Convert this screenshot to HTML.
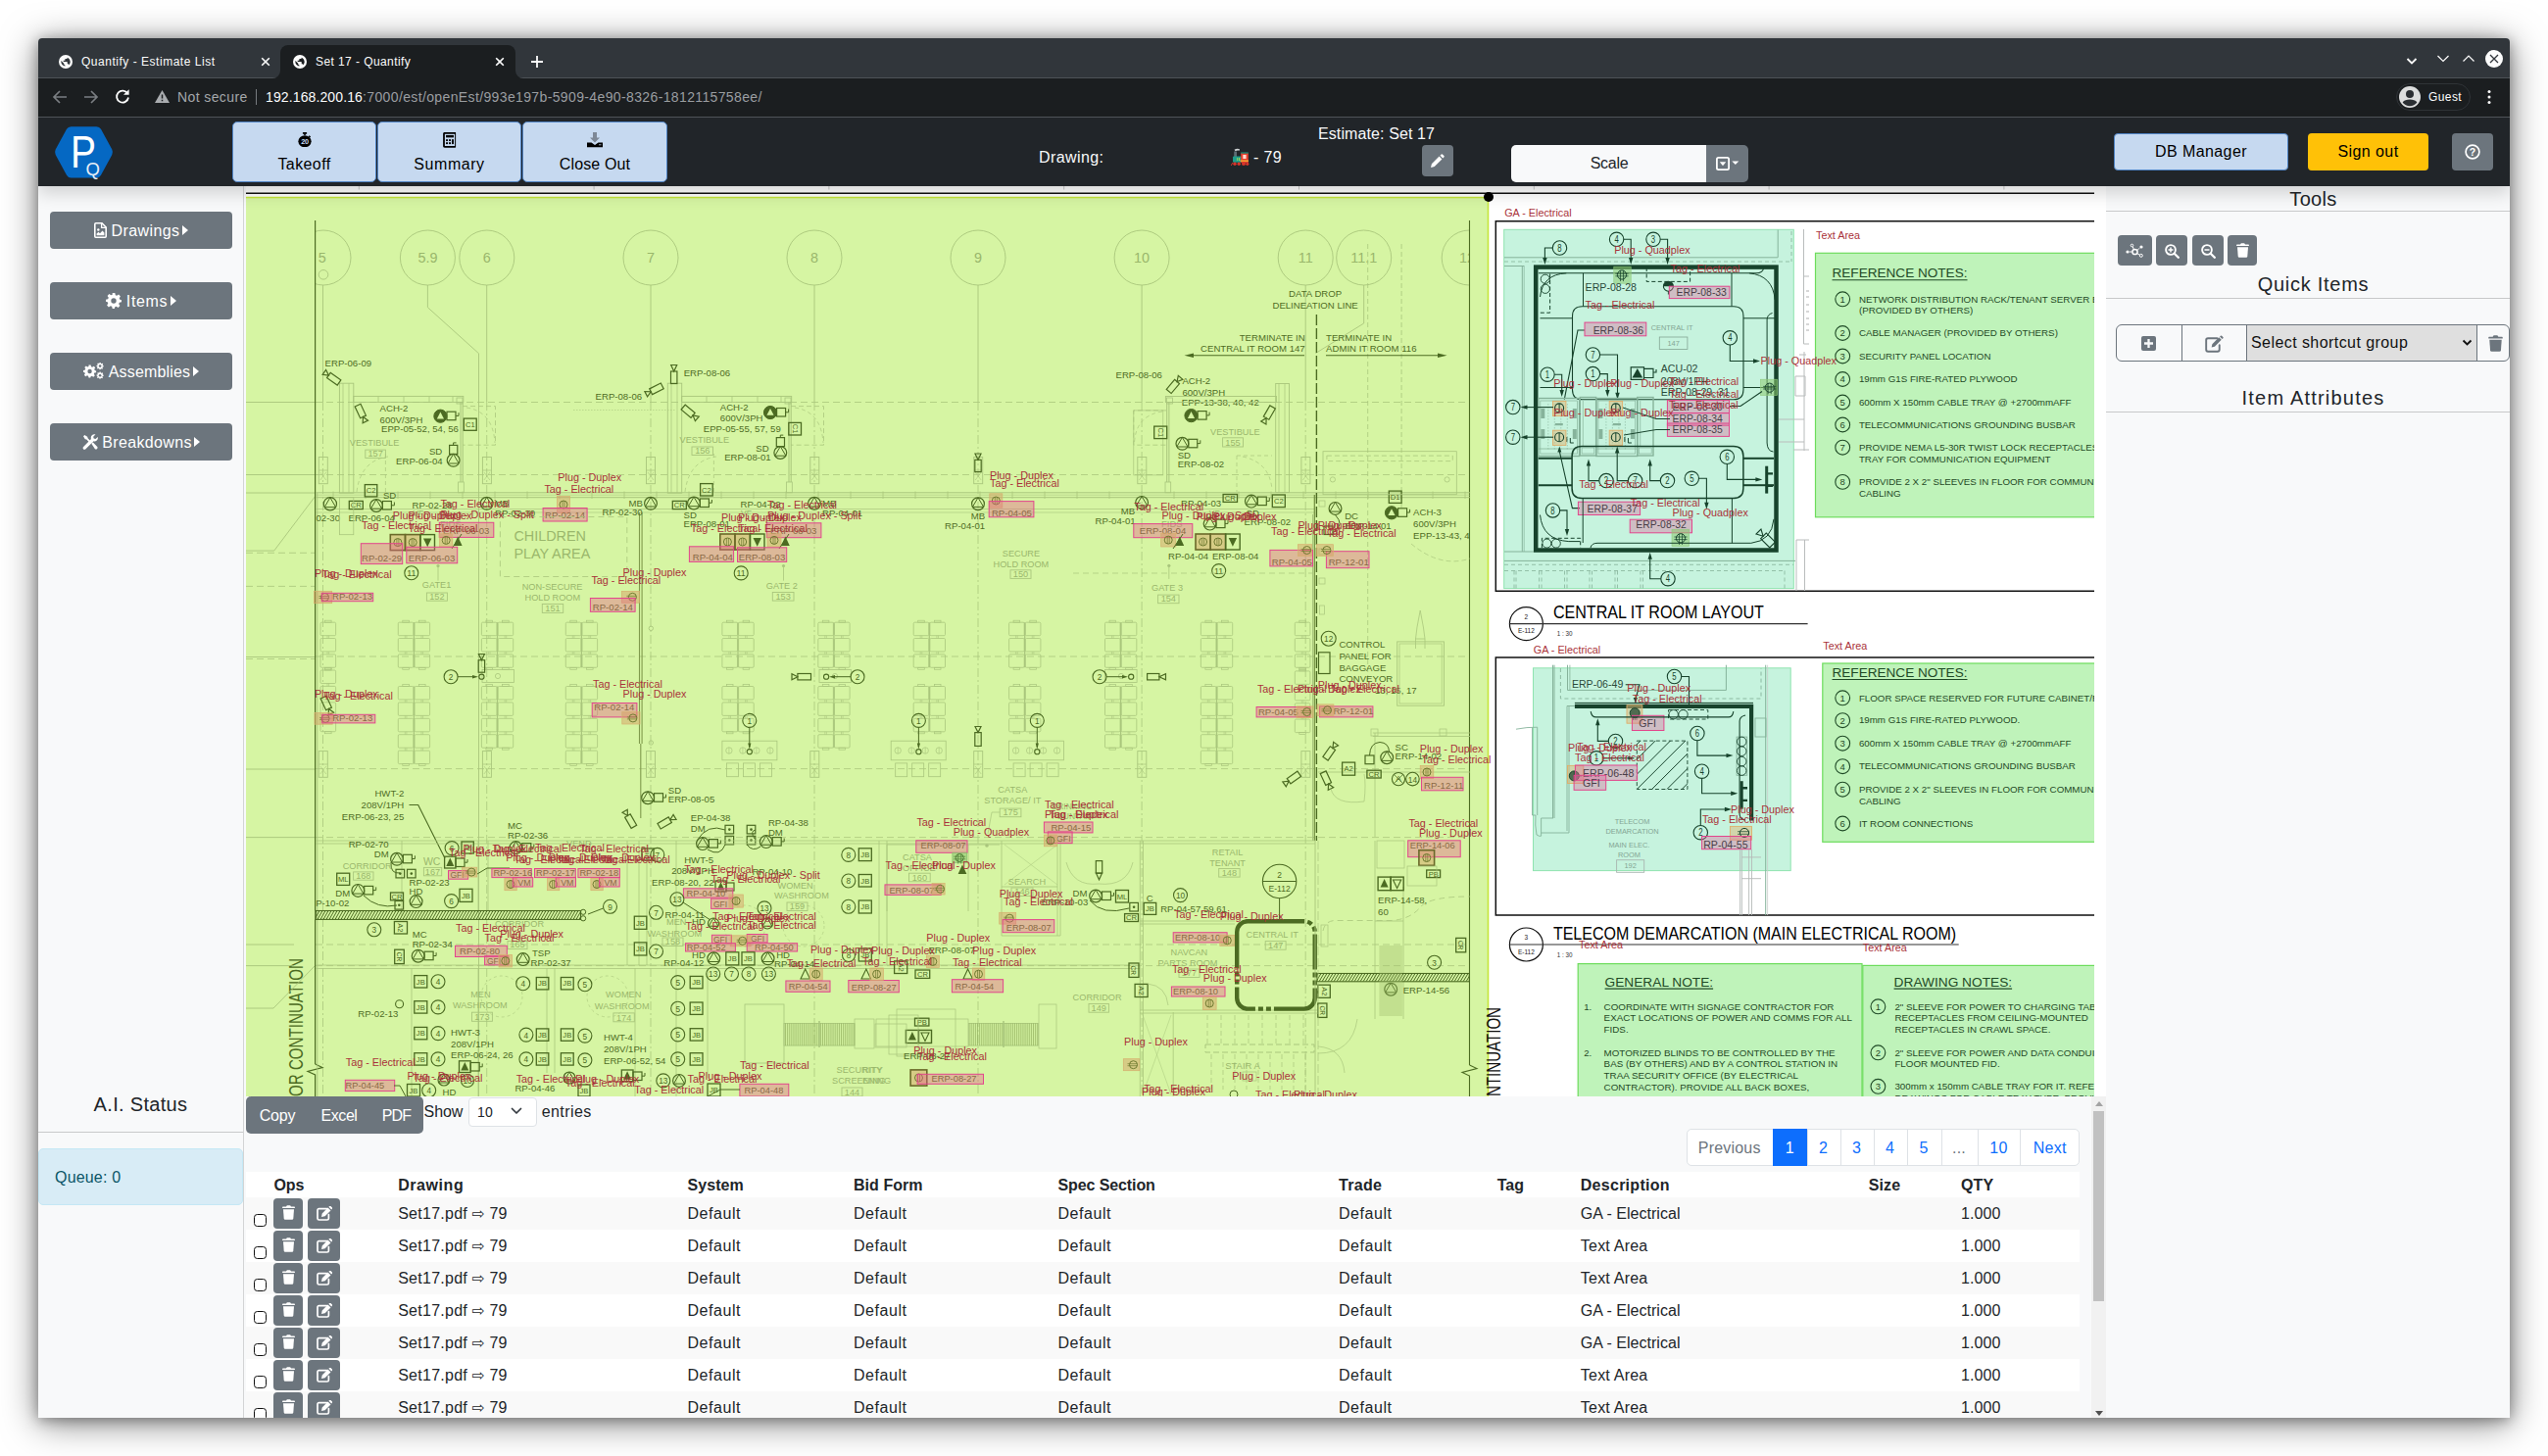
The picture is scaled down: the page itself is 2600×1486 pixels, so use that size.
<!DOCTYPE html>
<html lang="en">
<head>
<meta charset="utf-8">
<title>Set 17 - Quantify</title>
<style>
*{box-sizing:border-box}
html,body{margin:0;padding:0}
body{width:2600px;height:1486px;background:#fff;overflow:hidden;position:relative;font-family:"Liberation Sans",sans-serif;color:#212529}
.abs{position:absolute}
#win{position:absolute;left:39px;top:39px;width:2522px;height:1408px;background:#f8f9fa;border-radius:4px 4px 0 0;box-shadow:0 5px 36px rgba(0,0,0,.5),0 2px 14px rgba(0,0,0,.33);overflow:hidden}
#tabbar{position:absolute;left:0;top:0;width:2522px;height:41px;background:#31363b;border-bottom:1px solid #4d5257}
#addr{position:absolute;left:0;top:41px;width:2522px;height:40px;background:#1b1e20;border-bottom:1px solid #50555a}
#apphead{position:absolute;left:0;top:81px;width:2522px;height:70px;background:#212529;box-shadow:0 8px 16px rgba(0,0,0,.15);z-index:10}
.t{position:absolute;white-space:nowrap;line-height:1}
.tabtxt{font-size:12px;color:#fcfcfc;letter-spacing:.52px}
.ui{letter-spacing:.5px}
.navbtn{position:absolute;top:5px;height:62px;width:147px;background:#c6d9f0;border:1px solid #4f83c4;border-radius:5px;color:#000}
.navbtn .lbl{position:absolute;left:0;width:100%;top:33px;text-align:center;font-size:16px;line-height:20px;letter-spacing:.55px}
.navbtn svg{position:absolute;left:50%;top:11px;transform:translateX(-50%)}
.sbtn{position:absolute;left:12px;width:186px;height:38px;background:#6c757d;border-radius:4px;color:#fff;font-size:16px;line-height:40px;text-align:center}
.sbtn svg{vertical-align:-2px}
.gbtn{position:absolute;background:#6c757d;border-radius:4px}
.h4{position:absolute;font-size:20px;line-height:24px;text-align:center;color:#212529}
.hr{position:absolute;height:1px;background:#c8c9ca}
table{border-collapse:collapse}
</style>
</head>
<body>
<div id="win">
<div id="tabbar">
  <!-- active tab -->
  <div class="abs" style="left:247px;top:7px;width:240px;height:35px;background:#1b1e20;border-radius:8px 8px 0 0"></div>
  <svg class="abs" style="left:239px;top:33px" width="8" height="8"><path d="M8 0V8H0A8 8 0 0 0 8 0Z" fill="#1b1e20"/></svg>
  <svg class="abs" style="left:487px;top:33px" width="8" height="8"><path d="M0 0V8H8A8 8 0 0 1 0 0Z" fill="#1b1e20"/></svg>
  <!-- globes -->
  <svg class="abs" style="left:21px;top:17px" width="14" height="14" viewBox="0 0 24 24"><circle cx="12" cy="12" r="12" fill="#fcfcfc"/><path d="M11 19.9c-3.9-.5-7-3.9-7-7.9 0-.6.1-1.2.2-1.8L9 15v1c0 1.1.9 2 2 2v1.9zM17.9 17.4c-.3-.8-1-1.4-1.9-1.4h-1v-3c0-.6-.4-1-1-1H8v-2h2c.6 0 1-.4 1-1V7h2c1.1 0 2-.9 2-2v-.4c2.9 1.2 5 4.1 5 7.4 0 2.1-.8 4-2.1 5.400z" fill="#31363b"/></svg>
  <svg class="abs" style="left:260px;top:17px" width="14" height="14" viewBox="0 0 24 24"><circle cx="12" cy="12" r="12" fill="#fcfcfc"/><path d="M11 19.9c-3.9-.5-7-3.9-7-7.9 0-.6.1-1.2.2-1.8L9 15v1c0 1.1.9 2 2 2v1.9zM17.9 17.4c-.3-.8-1-1.4-1.9-1.4h-1v-3c0-.6-.4-1-1-1H8v-2h2c.6 0 1-.4 1-1V7h2c1.1 0 2-.9 2-2v-.4c2.9 1.2 5 4.1 5 7.4 0 2.1-.8 4-2.1 5.400z" fill="#1b1e20"/></svg>
  <div class="t tabtxt" style="left:44px;top:18.200px">Quantify - Estimate List</div>
  <div class="t tabtxt" style="left:283px;top:18.200px;letter-spacing:.42px">Set 17 - Quantify</div>
  <svg class="abs" style="left:227px;top:19px" width="10" height="10" viewBox="0 0 10 10"><path d="M1.2 1.2L8.8 8.8M8.800 1.2L1.2 8.8" stroke="#fcfcfc" stroke-width="1.6" fill="none"/></svg>
  <svg class="abs" style="left:466px;top:19px" width="10" height="10" viewBox="0 0 10 10"><path d="M1.2 1.2L8.8 8.8M8.800 1.2L1.2 8.8" stroke="#fcfcfc" stroke-width="1.6" fill="none"/></svg>
  <svg class="abs" style="left:502px;top:17px" width="14" height="14" viewBox="0 0 14 14"><path d="M7 1V13M1 7H13" stroke="#fcfcfc" stroke-width="1.8" fill="none"/></svg>
  <!-- window controls -->
  <svg class="abs" style="left:2414px;top:17px" width="16" height="12" viewBox="0 0 16 12"><path d="M3.500 4L8 8.500L12.500 4" stroke="#fcfcfc" stroke-width="1.8" fill="none"/></svg>
  <svg class="abs" style="left:2447px;top:15px" width="14" height="12" viewBox="0 0 14 12"><path d="M1.500 3L7 8.500L12.500 3" stroke="#fcfcfc" stroke-width="1.2" fill="none"/></svg>
  <svg class="abs" style="left:2473px;top:15px" width="14" height="12" viewBox="0 0 14 12"><path d="M1.500 8.500L7 3L12.500 8.500" stroke="#fcfcfc" stroke-width="1.2" fill="none"/></svg>
  <svg class="abs" style="left:2497px;top:12px" width="18" height="18" viewBox="0 0 18 18"><circle cx="9" cy="9" r="9" fill="#fcfcfc"/><path d="M5 5L13 13M13 5L5 13" stroke="#31363b" stroke-width="1.300" fill="none"/></svg>
</div>
<div id="addr">
  <svg class="abs" style="left:14px;top:11px" width="16" height="16" viewBox="0 0 16 16"><path d="M15 8H2M8 2L2 8L8 14" stroke="#7a7e82" stroke-width="1.700" fill="none"/></svg>
  <svg class="abs" style="left:46px;top:11px" width="16" height="16" viewBox="0 0 16 16"><path d="M1 8H14M8 2L14 8L8 14" stroke="#7a7e82" stroke-width="1.700" fill="none"/></svg>
  <svg class="abs" style="left:78px;top:10px" width="16" height="17" viewBox="0 0 16 17"><path d="M13.200 5.500A6 6 0 1 0 14 9.500" stroke="#fcfcfc" stroke-width="1.800" fill="none"/><path d="M14.600 1.200V6.800H9z" fill="#fcfcfc"/></svg>
  <svg class="abs" style="left:119px;top:12px" width="15" height="13" viewBox="0 0 15 13"><path d="M7.500 0L15 13H0Z" fill="#a9acaf"/><path d="M7.500 4.500V8.500M7.500 9.800V11.300" stroke="#1b1e20" stroke-width="1.500"/></svg>
  <div class="t" style="left:142px;top:11.700px;font-size:14px;color:#a4a7aa;letter-spacing:.4px">Not secure</div>
  <div class="abs" style="left:222px;top:11px;width:1px;height:16px;background:#777b7f"></div>
  <div class="t" style="left:232px;top:11.700px;font-size:14px;color:#fcfcfc;letter-spacing:.12px">192.168.200.16<span style="color:#9a9da0;letter-spacing:.37px">:7000/est/openEst/993e197b-5909-4e90-8326-1812115758ee/</span></div>
  <!-- guest pill -->
  <div class="abs" style="left:2406px;top:5px;width:76px;height:28px;border-radius:14px;border:1px solid #2f3337;background:#1b1e20"></div>
  <svg class="abs" style="left:2409px;top:8px" width="22" height="22" viewBox="0 0 22 22"><circle cx="11" cy="11" r="11" fill="#dcdddd"/><circle cx="11" cy="8" r="4" fill="#2a2e32"/><path d="M3.600 16.500C5 14.200 8 13.500 11 13.500S17 14.200 18.400 16.500A9.200 9.200 0 0 1 3.600 16.500Z" fill="#2a2e32"/></svg>
  <div class="t" style="left:2439px;top:13px;font-size:12px;color:#fcfcfc;letter-spacing:.4px">Guest</div>
  <svg class="abs" style="left:2498px;top:11px" width="6" height="16" viewBox="0 0 6 16"><circle cx="3" cy="2.500" r="1.500" fill="#fcfcfc"/><circle cx="3" cy="8" r="1.500" fill="#fcfcfc"/><circle cx="3" cy="13.500" r="1.500" fill="#fcfcfc"/></svg>
</div>
<div id="apphead">
  <!-- logo -->
  <svg class="abs" style="left:16px;top:8px" width="61" height="55" viewBox="0 0 61 55"><path d="M17.500 1.200H43.500Q46.500 1.200 48 3.800L59.300 24.500Q60.600 27.300 59.300 30L48 50.800Q46.500 53.600 43.500 53.600H17.500Q14.500 53.600 13 50.800L1.700 30Q.4 27.300 1.700 24.500L13 3.800Q14.500 1.200 17.500 1.200Z" fill="#0568c3"/><text x="17" y="42.500" font-family="Liberation Sans,sans-serif" font-size="46" fill="#fff" textLength="26" lengthAdjust="spacingAndGlyphs">P</text><text x="32.500" y="50.500" font-family="Liberation Sans,sans-serif" font-size="18.500" fill="#e8eef6">Q</text></svg>
  <!-- nav buttons -->
  <div class="navbtn" style="left:198px;top:4px">
    <svg width="15.600" height="15.800" viewBox="0 0 16 18" preserveAspectRatio="none" style="top:9.500px"><rect x="5.800" y="0" width="4.400" height="1.900" rx=".6" fill="#000"/><rect x="7.200" y="1.500" width="1.600" height="2" fill="#000"/><path d="M12.200 4.200L13.800 5.800" stroke="#000" stroke-width="1.500"/><circle cx="8" cy="10.600" r="6.800" fill="#000"/><text x="8" y="13.300" text-anchor="middle" font-family="Liberation Sans,sans-serif" font-weight="bold" font-size="7.500" fill="#c6d9f0" letter-spacing="-.4">20</text></svg>
    <div class="lbl" style="letter-spacing:.4px">Takeoff</div></div>
  <div class="navbtn" style="left:346px;top:4px">
    <svg width="13.800" height="15.700" viewBox="0 0 14 17" preserveAspectRatio="none" style="top:10.200px"><rect x=".8" y=".8" width="12.400" height="15.400" rx="1.400" fill="none" stroke="#000" stroke-width="2"/><rect x="3" y="3.200" width="8" height="2.600" fill="#000"/><g fill="#000"><rect x="3" y="7.800" width="2" height="2"/><rect x="6" y="7.800" width="2" height="2"/><rect x="9" y="7.800" width="2" height="5.300"/><rect x="3" y="11.100" width="2" height="2"/><rect x="6" y="11.100" width="2" height="2"/></g></svg>
    <div class="lbl" style="letter-spacing:.55px">Summary</div></div>
  <div class="navbtn" style="left:494px;top:4px;width:148px">
    <svg width="17" height="15.700" viewBox="0 0 17 17" preserveAspectRatio="none" style="top:10.200px"><path d="M6.500 0H10.500V6H13.500L8.500 11.500L3.500 6H6.500Z" fill="#7d8896"/><path d="M.5 11.500H5L8.500 14L12 11.500H16.500V16.500H.5Z" fill="#000"/><rect x="12.500" y="13.500" width="2.500" height=".8" fill="#c6d9f0"/></svg>
    <div class="lbl" style="letter-spacing:.13px">Close Out</div></div>
  <!-- center -->
  <div class="t ui" style="left:1021px;top:33px;font-size:16px;color:#f8f9fa;letter-spacing:.4px">Drawing:</div>
  <svg class="abs" style="left:1217px;top:31px" width="19" height="19" viewBox="0 0 19 19"><path d="M3.500 1.800Q6 .3 9 1.200L8.600 2.800Q6.500 2.300 4.600 3.200Z" fill="#cfd2d4"/><rect x="3.200" y="3.500" width="2.800" height="6" fill="#5d6b73"/><rect x="2" y="8.500" width="9.500" height="6.200" rx="1" fill="#1f9c8a"/><rect x="6.200" y="10" width="1" height="3" fill="#9bd15a"/><rect x="8" y="10" width="1" height="3" fill="#9bd15a"/><rect x="10.200" y="5" width="7.600" height="10" fill="#e8412f"/><rect x="10.200" y="4.300" width="7.600" height="1.400" fill="#17806f"/><rect x="12.300" y="7" width="3.300" height="4" fill="#ffd9d0"/><rect x="9.500" y="12.500" width="8.500" height="1.300" fill="#f2b632"/><circle cx="4" cy="16.300" r="1.700" fill="#d8352a"/><circle cx="8.200" cy="16.300" r="1.700" fill="#d8352a"/><circle cx="13" cy="16" r="2.100" fill="#d8352a"/><circle cx="16.800" cy="16.300" r="1.600" fill="#d8352a"/><path d="M0 18L2 15" stroke="#d8352a" stroke-width="1"/></svg>
  <div class="t ui" style="left:1240px;top:33px;font-size:16px;color:#f8f9fa;letter-spacing:.4px">- 79</div>
  <div class="t ui" style="left:1306px;top:9px;font-size:16px;color:#f8f9fa;letter-spacing:.1px">Estimate: Set 17</div>
  <div class="gbtn" style="left:1412px;top:28px;width:32px;height:32px;border-radius:4px">
    <svg class="abs" style="left:9px;top:9px" width="14" height="14" viewBox="0 0 14 14"><path d="M0 14L.9 10.300L8.600 2.600L11.400 5.400L3.700 13.100ZM9.500 1.700L10.700.5Q11.300 0 11.900.5L13.500 2.100Q14 2.700 13.500 3.300L12.300 4.500Z" fill="#fff"/></svg>
  </div>
  <div class="abs" style="left:1503px;top:28px;width:200px;height:38px;background:#f8f9fa;border-radius:5px 0 0 5px"></div>
  <div class="t ui" style="left:1503px;width:200px;top:39px;font-size:16px;color:#212529;text-align:center;letter-spacing:-.3px">Scale</div>
  <div class="abs" style="left:1702px;top:28px;width:43px;height:38px;background:#6c757d;border-radius:0 5px 5px 0">
    <svg class="abs" style="left:10px;top:12px" width="24" height="15" viewBox="0 0 24 15"><rect x=".9" y=".9" width="12.200" height="12.200" rx="1.600" fill="none" stroke="#fff" stroke-width="1.800"/><path d="M3.800 5.200H10.200L7 9.200Z" fill="#fff"/><path d="M16.300 4.500H23.300L19.800 8Z" fill="#fff"/></svg>
  </div>
  <!-- right buttons -->
  <div class="abs" style="left:2118px;top:16px;width:178px;height:38px;background:#c6d9f0;border:1px solid #4f83c4;border-radius:4px"></div>
  <div class="t ui" style="left:2118px;width:178px;top:27px;font-size:16px;color:#000;text-align:center;letter-spacing:.42px">DB Manager</div>
  <div class="abs" style="left:2316px;top:16px;width:123px;height:38px;background:#ffc107;border-radius:4px"></div>
  <div class="t ui" style="left:2316px;width:123px;top:27px;font-size:16px;color:#000;text-align:center;letter-spacing:.42px">Sign out</div>
  <div class="gbtn" style="left:2463px;top:16px;width:42px;height:38px">
    <svg class="abs" style="left:13px;top:11px" width="16" height="16" viewBox="0 0 16 16"><circle cx="8" cy="8" r="6.900" fill="none" stroke="#fff" stroke-width="1.700"/><text x="8" y="11.800" text-anchor="middle" font-family="Liberation Sans,sans-serif" font-weight="bold" font-size="10.500" fill="#fff">?</text></svg>
  </div>
</div>
<div id="main" class="abs" style="left:0;top:151px;width:2522px;height:1257px;background:#f8f9fa">
<!-- sidebar -->
<div class="abs" style="left:0;top:0;width:210px;height:1257px;border-right:1px solid #d3d4d5;background:#f8f9fa">
  <div class="sbtn" style="top:26px"><svg width="13" height="16" viewBox="0 0 13 16"><path d="M1.800.8H8L12.200 5V14.200Q12.200 15.200 11.200 15.200H1.800Q.8 15.200 .8 14.200V1.800Q.8 .8 1.800 .8Z" fill="none" stroke="#fff" stroke-width="1.600"/><path d="M7.600 .8V5.400H12.200" fill="none" stroke="#fff" stroke-width="1.300"/><circle cx="4.300" cy="7.500" r="1.200" fill="#fff"/><path d="M2.600 13.200V11.500L4.500 9.800L6 11.200L8.500 8.600L10.400 10.500V13.200Z" fill="#fff"/></svg> <span style="letter-spacing:.41px">Drawings</span> <svg width="6" height="10" viewBox="0 0 6 10" style="vertical-align:1px;margin-left:-2px"><path d="M0 0L6 5L0 10Z" fill="#fff"/></svg></div>
  <div class="sbtn" style="top:98px"><svg width="16" height="16" viewBox="0 0 16 16"><path d="M6.700 0H9.300L9.800 2.200L11.200 2.800L13.100 1.600L14.900 3.400L13.700 5.300L14.300 6.700L16 7.200V9.300L13.800 9.800L13.200 11.200L14.400 13.100L12.600 14.900L10.700 13.700L9.300 14.300L8.800 16H6.700L6.200 13.800L4.800 13.200L2.900 14.400L1.100 12.600L2.300 10.700L1.700 9.300L0 8.800V6.700L2.200 6.200L2.800 4.800L1.600 2.900L3.400 1.100L5.300 2.300L6.700 1.700Z" fill="#fff"/><circle cx="8" cy="8" r="2.700" fill="#6c757d"/></svg> <span style="letter-spacing:.63px">Items</span> <svg width="6" height="10" viewBox="0 0 6 10" style="vertical-align:1px;margin-left:-2px"><path d="M0 0L6 5L0 10Z" fill="#fff"/></svg></div>
  <div class="sbtn" style="top:170px"><svg width="21" height="17" viewBox="0 0 21 17"><g transform="translate(0,2.500) scale(.82)"><path d="M6.700 0H9.300L9.800 2.200L11.200 2.800L13.100 1.600L14.900 3.400L13.700 5.300L14.300 6.700L16 7.200V9.300L13.800 9.800L13.200 11.200L14.400 13.100L12.600 14.900L10.700 13.700L9.300 14.300L8.800 16H6.700L6.200 13.800L4.800 13.200L2.900 14.400L1.100 12.600L2.300 10.700L1.700 9.300L0 8.800V6.700L2.200 6.200L2.800 4.800L1.600 2.900L3.400 1.100L5.300 2.300L6.700 1.700Z" fill="#fff"/><circle cx="8" cy="8" r="2.700" fill="#6c757d"/></g><g transform="translate(13.500,0) scale(.45)"><path d="M6.700 0H9.300L9.800 2.200L11.200 2.800L13.100 1.600L14.900 3.400L13.700 5.300L14.300 6.700L16 7.200V9.300L13.800 9.800L13.200 11.200L14.400 13.100L12.600 14.900L10.700 13.700L9.300 14.300L8.800 16H6.700L6.200 13.800L4.800 13.200L2.900 14.400L1.100 12.600L2.300 10.700L1.700 9.300L0 8.800V6.700L2.200 6.200L2.800 4.800L1.600 2.900L3.400 1.100L5.300 2.300L6.700 1.700Z" fill="#fff"/><circle cx="8" cy="8" r="2.900" fill="#6c757d"/></g><g transform="translate(13.500,9.600) scale(.45)"><path d="M6.700 0H9.300L9.800 2.200L11.200 2.800L13.100 1.600L14.900 3.400L13.700 5.300L14.300 6.700L16 7.200V9.300L13.800 9.800L13.200 11.200L14.400 13.100L12.600 14.900L10.700 13.700L9.300 14.300L8.800 16H6.700L6.200 13.800L4.800 13.200L2.900 14.400L1.100 12.600L2.300 10.700L1.700 9.300L0 8.800V6.700L2.200 6.200L2.800 4.800L1.600 2.900L3.400 1.100L5.300 2.300L6.700 1.700Z" fill="#fff"/><circle cx="8" cy="8" r="2.900" fill="#6c757d"/></g></svg> <span style="letter-spacing:.18px">Assemblies</span> <svg width="6" height="10" viewBox="0 0 6 10" style="vertical-align:1px;margin-left:-2px"><path d="M0 0L6 5L0 10Z" fill="#fff"/></svg></div>
  <div class="sbtn" style="top:242px"><svg width="16" height="16" viewBox="0 0 16 16"><path d="M1 2.300L2.300 1L5.200 2.800L5.600 4.300L9 7.700L7.700 9L4.300 5.600L2.800 5.200Z" fill="#fff"/><path d="M9.300 9.700L10.700 8.300L15.300 12.900Q16 14 15.100 15.100Q14 16 12.900 15.300Z" fill="#fff"/><path d="M15.800 2.900Q16.300 5.500 14.500 6.800Q13 7.700 11.500 7.200L3.200 15.400Q2.200 16.200 1.100 15.400Q.2 14.400 .9 13.300L9 5Q8.300 3 9.600 1.400Q11.200 -.3 13.500 .3L11.200 2.700L11.600 4.600L13.500 5.100Z" fill="#fff"/></svg> <span style="letter-spacing:.35px">Breakdowns</span> <svg width="6" height="10" viewBox="0 0 6 10" style="vertical-align:1px;margin-left:-2px"><path d="M0 0L6 5L0 10Z" fill="#fff"/></svg></div>
  <div class="h4" style="left:0;width:209px;top:925px;letter-spacing:.32px">A.I. Status</div>
  <div class="hr" style="left:0;width:209px;top:965px"></div>
  <div class="abs" style="left:0;top:982px;width:209px;height:58px;background:#d8ecf6;border:1px solid #c4e8f5;border-radius:5px"></div>
  <div class="t ui" style="left:17px;top:1004px;font-size:16px;color:#0a5566;letter-spacing:.18px">Queue: 0</div>
</div>
<!-- drawing canvas -->
<div class="abs" style="left:212px;top:0;width:1898px;height:929px;background:#fff;overflow:hidden">
<svg width="1886" height="929" viewBox="251 190 1886 929" font-family="Liberation Sans,sans-serif" fill="none" style="position:absolute;left:0;top:0">
<defs><linearGradient id="hg" x1="0" y1="0" x2="0" y2="1"><stop offset="0" stop-color="#e2e2e2"/><stop offset="1" stop-color="#f3f3f3"/></linearGradient></defs>
<path d="M366.3 190L366.3 193.5" stroke="#c9c9c9" stroke-width="1"/>
<path d="M606.1 190L606.1 193.5" stroke="#c9c9c9" stroke-width="1"/>
<path d="M845.9 190L845.9 193.5" stroke="#c9c9c9" stroke-width="1"/>
<path d="M1085.7 190L1085.7 193.5" stroke="#c9c9c9" stroke-width="1"/>
<path d="M1325.5 190L1325.5 193.5" stroke="#c9c9c9" stroke-width="1"/>
<path d="M1565.3 190L1565.3 193.5" stroke="#c9c9c9" stroke-width="1"/>
<path d="M1805.1 190L1805.1 193.5" stroke="#c9c9c9" stroke-width="1"/>
<path d="M2044.9 190L2044.9 193.5" stroke="#c9c9c9" stroke-width="1"/>
<path d="M251 197.3L2137 197.3" stroke="#111" stroke-width="1.6"/>
<rect x="251" y="201" width="1268" height="918" stroke="none" stroke-width="0" fill="#d6f5a3"/>
<path d="M251 201.500H1518.500V1119" stroke="#c6e63a" stroke-width="1.6" fill="none"/>
<path d="M2137 225.700H1526.300V603.200H2137" stroke="#111" stroke-width="1.5" fill="none"/>
<path d="M2137 671H1526.300V934H2137" stroke="#111" stroke-width="1.5" fill="none"/>
<rect x="1534.7" y="234.3" width="295.6" height="366.3" stroke="#8fe3b0" stroke-width="1" fill="#c6f3de"/>
<rect x="1564.5" y="681.8" width="262.7" height="206.8" stroke="#8fe3b0" stroke-width="1" fill="#c6f3de"/>
<rect x="1852.5" y="258.3" width="300" height="269.5" stroke="#6ddc5c" stroke-width="1.2" fill="#bff3ba"/>
<rect x="1859.8" y="677" width="300" height="182.3" stroke="#6ddc5c" stroke-width="1.2" fill="#bff3ba"/>
<rect x="1610.2" y="983.6" width="289.8" height="150" stroke="#6ddc5c" stroke-width="1.2" fill="#bff3ba"/>
<rect x="1900.8" y="985.4" width="260" height="150" stroke="#6ddc5c" stroke-width="1.2" fill="#bff3ba"/>
<text x="1869.5" y="283.1" font-size="13.6" fill="#1f4a26" textLength="138" lengthAdjust="spacingAndGlyphs">REFERENCE NOTES:</text>
<path d="M1869.5 285.7L2007.5 285.7" stroke="#1f4a26" stroke-width="1.1"/>
<circle cx="1880.2" cy="305.3" r="7.4" stroke="#1f4a26" stroke-width="1.1" fill="none"/>
<text x="1880.2" y="308.7" font-size="9.5" fill="#1f4a26" text-anchor="middle">1</text>
<text x="1896.9" y="308.5" font-size="9.75" fill="#1f4a26">NETWORK DISTRIBUTION RACK/TENANT SERVER ENCLOSURE</text>
<text x="1896.9" y="320.2" font-size="9.75" fill="#1f4a26">(PROVIDED BY OTHERS)</text>
<circle cx="1880.2" cy="340" r="7.4" stroke="#1f4a26" stroke-width="1.1" fill="none"/>
<text x="1880.2" y="343.4" font-size="9.5" fill="#1f4a26" text-anchor="middle">2</text>
<text x="1896.9" y="343.2" font-size="9.75" fill="#1f4a26">CABLE MANAGER (PROVIDED BY OTHERS)</text>
<circle cx="1880.2" cy="363.5" r="7.4" stroke="#1f4a26" stroke-width="1.1" fill="none"/>
<text x="1880.2" y="366.9" font-size="9.5" fill="#1f4a26" text-anchor="middle">3</text>
<text x="1896.9" y="366.7" font-size="9.75" fill="#1f4a26">SECURITY PANEL LOCATION</text>
<circle cx="1880.2" cy="387" r="7.4" stroke="#1f4a26" stroke-width="1.1" fill="none"/>
<text x="1880.2" y="390.4" font-size="9.5" fill="#1f4a26" text-anchor="middle">4</text>
<text x="1896.9" y="390.2" font-size="9.75" fill="#1f4a26">19mm G1S FIRE-RATED PLYWOOD</text>
<circle cx="1880.2" cy="410.5" r="7.4" stroke="#1f4a26" stroke-width="1.1" fill="none"/>
<text x="1880.2" y="413.9" font-size="9.5" fill="#1f4a26" text-anchor="middle">5</text>
<text x="1896.9" y="413.7" font-size="9.75" fill="#1f4a26">600mm X 150mm CABLE TRAY @ +2700mmAFF</text>
<circle cx="1880.2" cy="433.5" r="7.4" stroke="#1f4a26" stroke-width="1.1" fill="none"/>
<text x="1880.2" y="436.9" font-size="9.5" fill="#1f4a26" text-anchor="middle">6</text>
<text x="1896.9" y="436.7" font-size="9.75" fill="#1f4a26">TELECOMMUNICATIONS GROUNDING BUSBAR</text>
<circle cx="1880.2" cy="456.7" r="7.4" stroke="#1f4a26" stroke-width="1.1" fill="none"/>
<text x="1880.2" y="460.1" font-size="9.5" fill="#1f4a26" text-anchor="middle">7</text>
<text x="1896.9" y="459.9" font-size="9.75" fill="#1f4a26">PROVIDE NEMA L5-30R TWIST LOCK RECEPTACLES ON CABLE</text>
<text x="1896.9" y="471.6" font-size="9.75" fill="#1f4a26">TRAY FOR COMMUNICATION EQUIPMENT</text>
<circle cx="1880.2" cy="491.9" r="7.4" stroke="#1f4a26" stroke-width="1.1" fill="none"/>
<text x="1880.2" y="495.3" font-size="9.5" fill="#1f4a26" text-anchor="middle">8</text>
<text x="1896.9" y="495.1" font-size="9.75" fill="#1f4a26">PROVIDE 2 X 2" SLEEVES IN FLOOR FOR COMMUNICATION</text>
<text x="1896.9" y="506.9" font-size="9.75" fill="#1f4a26">CABLING</text>
<text x="1869.5" y="690.9" font-size="13.6" fill="#1f4a26" textLength="138" lengthAdjust="spacingAndGlyphs">REFERENCE NOTES:</text>
<path d="M1869.5 693.5L2007.5 693.5" stroke="#1f4a26" stroke-width="1.1"/>
<circle cx="1880.2" cy="712.3" r="7.4" stroke="#1f4a26" stroke-width="1.1" fill="none"/>
<text x="1880.2" y="715.7" font-size="9.5" fill="#1f4a26" text-anchor="middle">1</text>
<text x="1896.9" y="715.5" font-size="9.75" fill="#1f4a26">FLOOR SPACE RESERVED FOR FUTURE CABINET/RACK</text>
<circle cx="1880.2" cy="735.2" r="7.4" stroke="#1f4a26" stroke-width="1.1" fill="none"/>
<text x="1880.2" y="738.6" font-size="9.5" fill="#1f4a26" text-anchor="middle">2</text>
<text x="1896.9" y="738.4" font-size="9.75" fill="#1f4a26">19mm G1S FIRE-RATED PLYWOOD.</text>
<circle cx="1880.2" cy="758.7" r="7.4" stroke="#1f4a26" stroke-width="1.1" fill="none"/>
<text x="1880.2" y="762.1" font-size="9.5" fill="#1f4a26" text-anchor="middle">3</text>
<text x="1896.9" y="761.9" font-size="9.75" fill="#1f4a26">600mm X 150mm CABLE TRAY @ +2700mmAFF</text>
<circle cx="1880.2" cy="782.2" r="7.4" stroke="#1f4a26" stroke-width="1.1" fill="none"/>
<text x="1880.2" y="785.6" font-size="9.5" fill="#1f4a26" text-anchor="middle">4</text>
<text x="1896.9" y="785.4" font-size="9.75" fill="#1f4a26">TELECOMMUNICATIONS GROUNDING BUSBAR</text>
<circle cx="1880.2" cy="805.7" r="7.4" stroke="#1f4a26" stroke-width="1.1" fill="none"/>
<text x="1880.2" y="809.1" font-size="9.5" fill="#1f4a26" text-anchor="middle">5</text>
<text x="1896.9" y="808.9" font-size="9.75" fill="#1f4a26">PROVIDE 2 X 2" SLEEVES IN FLOOR FOR COMMUNICATION</text>
<text x="1896.9" y="820.6" font-size="9.75" fill="#1f4a26">CABLING</text>
<circle cx="1880.2" cy="840.5" r="7.4" stroke="#1f4a26" stroke-width="1.1" fill="none"/>
<text x="1880.2" y="843.9" font-size="9.5" fill="#1f4a26" text-anchor="middle">6</text>
<text x="1896.9" y="843.7" font-size="9.75" fill="#1f4a26">IT ROOM CONNECTIONS</text>
<text x="1637.6" y="1006.5" font-size="13.6" fill="#1f4a26" textLength="110.5" lengthAdjust="spacingAndGlyphs">GENERAL NOTE:</text>
<path d="M1637.6 1009.1L1748.1 1009.1" stroke="#1f4a26" stroke-width="1.1"/>
<text x="1932.6" y="1006.5" font-size="13.6" fill="#1f4a26" textLength="120.5" lengthAdjust="spacingAndGlyphs">DRAWING NOTES:</text>
<path d="M1932.6 1009.1L2053.1 1009.1" stroke="#1f4a26" stroke-width="1.1"/>
<text x="1616.2" y="1030.5" font-size="9.6" fill="#1f4a26">1.</text>
<text x="1636.6" y="1030.5" font-size="9.8" fill="#1f4a26">COORDINATE WITH SIGNAGE CONTRACTOR FOR</text>
<text x="1636.6" y="1042.2" font-size="9.8" fill="#1f4a26">EXACT LOCATIONS OF POWER AND COMMS FOR ALL</text>
<text x="1636.6" y="1054" font-size="9.8" fill="#1f4a26">FIDS.</text>
<text x="1616.2" y="1077.5" font-size="9.6" fill="#1f4a26">2.</text>
<text x="1636.6" y="1077.5" font-size="9.8" fill="#1f4a26">MOTORIZED BLINDS TO BE CONTROLLED BY THE</text>
<text x="1636.6" y="1089.2" font-size="9.8" fill="#1f4a26">BAS (BY OTHERS) AND BY A CONTROL STATION IN</text>
<text x="1636.6" y="1101" font-size="9.8" fill="#1f4a26">TRAA SECURITY OFFICE (BY ELECTRICAL</text>
<text x="1636.6" y="1112.8" font-size="9.8" fill="#1f4a26">CONTRACTOR). PROVIDE ALL BACK BOXES,</text>
<text x="1636.6" y="1124.5" font-size="9.8" fill="#1f4a26">CONDUITS, ACCESSORIES AND HARDWARE AS</text>
<circle cx="1916.4" cy="1027.3" r="7.4" stroke="#1f4a26" stroke-width="1.1" fill="none"/>
<text x="1916.4" y="1030.7" font-size="9.5" fill="#1f4a26" text-anchor="middle">1</text>
<text x="1933.4" y="1030.5" font-size="9.8" fill="#1f4a26">2" SLEEVE FOR POWER TO CHARGING TABLE</text>
<text x="1933.4" y="1042.2" font-size="9.8" fill="#1f4a26">RECEPTACLES FROM CEILING-MOUNTED</text>
<text x="1933.4" y="1054" font-size="9.8" fill="#1f4a26">RECEPTACLES IN CRAWL SPACE.</text>
<circle cx="1916.4" cy="1074.3" r="7.4" stroke="#1f4a26" stroke-width="1.1" fill="none"/>
<text x="1916.4" y="1077.7" font-size="9.5" fill="#1f4a26" text-anchor="middle">2</text>
<text x="1933.4" y="1077.5" font-size="9.8" fill="#1f4a26">2" SLEEVE FOR POWER AND DATA CONDUIT TO</text>
<text x="1933.4" y="1089.2" font-size="9.8" fill="#1f4a26">FLOOR MOUNTED FID.</text>
<circle cx="1916.4" cy="1108.8" r="7.4" stroke="#1f4a26" stroke-width="1.1" fill="none"/>
<text x="1916.4" y="1112.2" font-size="9.5" fill="#1f4a26" text-anchor="middle">3</text>
<text x="1933.4" y="1112" font-size="9.8" fill="#1f4a26">300mm x 150mm CABLE TRAY FOR IT. REFER TO</text>
<text x="1933.4" y="1123.8" font-size="9.8" fill="#1f4a26">DRAWINGS FOR CABLE TRAY TYPE. PROVIDE</text>
<circle cx="1557.4" cy="636.6" r="17" stroke="#111" stroke-width="1.2" fill="none"/>
<path d="M1540.4 636.6L1844.6 636.6" stroke="#333" stroke-width="1.2"/>
<text x="1557.4" y="631.6" font-size="6.5" fill="#222" text-anchor="middle">2</text>
<text x="1557.4" y="646.1" font-size="6.5" fill="#222" text-anchor="middle">E-112</text>
<text x="1584.9" y="631.3" font-size="19" fill="#000" textLength="215" lengthAdjust="spacingAndGlyphs">CENTRAL IT ROOM LAYOUT</text>
<text x="1588.8" y="649.1" font-size="6.3" fill="#333">1 : 30</text>
<circle cx="1557.4" cy="964" r="17" stroke="#111" stroke-width="1.2" fill="none"/>
<path d="M1540.4 964L1998.7 964" stroke="#333" stroke-width="1.2"/>
<text x="1557.4" y="959" font-size="6.5" fill="#222" text-anchor="middle">3</text>
<text x="1557.4" y="973.5" font-size="6.5" fill="#222" text-anchor="middle">E-112</text>
<text x="1584.9" y="958.7" font-size="19" fill="#000" textLength="411.2" lengthAdjust="spacingAndGlyphs">TELECOM DEMARCATION (MAIN ELECTRICAL ROOM)</text>
<text x="1588.8" y="976.5" font-size="6.3" fill="#333">1 : 30</text>
<text transform="translate(1530.500,1119) rotate(-90)" font-size="19.500" fill="#111" textLength="91" lengthAdjust="spacingAndGlyphs">NTINUATION</text>
<text transform="translate(308.500,1119) rotate(-90)" font-size="19.500" fill="#4c6b22" textLength="141" lengthAdjust="spacingAndGlyphs">OR CONTINUATION</text>
<path d="M1535 262.8L1814 262.8" stroke="#86b39b" stroke-width="1"/>
<path d="M1535 267L1829 267" stroke="#86b39b" stroke-width="0.8" stroke-dasharray="4 3"/>
<path d="M1814.2 234.5L1814.2 262.8" stroke="#86b39b" stroke-width="1"/>
<path d="M1828 236L1828 267" stroke="#86b39b" stroke-width="0.8" stroke-dasharray="4 3"/>
<path d="M1553.3 271L1553.3 563" stroke="#86b39b" stroke-width="1"/>
<path d="M1555.2 271L1555.2 563" stroke="#86b39b" stroke-width="0.7"/>
<path d="M1535 271.5L1555 271.5" stroke="#86b39b" stroke-width="1"/>
<path d="M1535 563L1565 563" stroke="#86b39b" stroke-width="1"/>
<path d="M1535 572.4L1832 572.4" stroke="#86b39b" stroke-width="1"/>
<path d="M1535 576.3L1830 576.3" stroke="#86b39b" stroke-width="0.8" stroke-dasharray="4 3"/>
<path d="M1535 582.5L1822 582.5" stroke="#86b39b" stroke-width="0.8" stroke-dasharray="4 3"/>
<path d="M1545 582.5L1545 600.5" stroke="#86b39b" stroke-width="0.8" stroke-dasharray="4 3"/>
<path d="M1547 582.5L1547 600.5" stroke="#86b39b" stroke-width="0.8" stroke-dasharray="4 3"/>
<path d="M1570.5 582.5L1570.5 600.5" stroke="#86b39b" stroke-width="0.8" stroke-dasharray="4 3"/>
<path d="M1573 582.5L1573 600.5" stroke="#86b39b" stroke-width="0.8" stroke-dasharray="4 3"/>
<path d="M1596.5 582.5L1596.5 600.5" stroke="#86b39b" stroke-width="0.8" stroke-dasharray="4 3"/>
<path d="M1599 582.5L1599 600.5" stroke="#86b39b" stroke-width="0.8" stroke-dasharray="4 3"/>
<path d="M1622 582.5L1622 600.5" stroke="#86b39b" stroke-width="0.8" stroke-dasharray="4 3"/>
<path d="M1624.5 582.5L1624.5 600.5" stroke="#86b39b" stroke-width="0.8" stroke-dasharray="4 3"/>
<path d="M1648 582.5L1648 600.5" stroke="#86b39b" stroke-width="0.8" stroke-dasharray="4 3"/>
<path d="M1650.5 582.5L1650.5 600.5" stroke="#86b39b" stroke-width="0.8" stroke-dasharray="4 3"/>
<path d="M1674 582.5L1674 600.5" stroke="#86b39b" stroke-width="0.8" stroke-dasharray="4 3"/>
<path d="M1676.5 582.5L1676.5 600.5" stroke="#86b39b" stroke-width="0.8" stroke-dasharray="4 3"/>
<path d="M1821 582.5L1821 600.5" stroke="#86b39b" stroke-width="0.8" stroke-dasharray="4 3"/>
<path d="M1840.5 234L1840.5 351" stroke="#b9bcbc" stroke-width="1"/>
<path d="M1840.5 351L1846 351" stroke="#b9bcbc" stroke-width="1"/>
<path d="M1840.5 282L1846 282" stroke="#b9bcbc" stroke-width="1"/>
<path d="M1841 359L1841 460" stroke="#b9bcbc" stroke-width="1"/>
<path d="M1836 362L1843 362" stroke="#b9bcbc" stroke-width="1"/>
<path d="M1832 384L1842 384" stroke="#b9bcbc" stroke-width="1"/>
<path d="M1832 384L1832 404" stroke="#b9bcbc" stroke-width="1"/>
<path d="M1832 404L1842 404" stroke="#b9bcbc" stroke-width="1"/>
<path d="M1842 384L1842 404" stroke="#b9bcbc" stroke-width="1"/>
<path d="M1815 428L1841 428" stroke="#b9bcbc" stroke-width="1"/>
<path d="M1815 451L1841 451" stroke="#b9bcbc" stroke-width="1"/>
<path d="M1830 459L1846 459" stroke="#b9bcbc" stroke-width="1"/>
<path d="M1833 551L1846 551" stroke="#b9bcbc" stroke-width="1"/>
<path d="M1833 551L1833 603" stroke="#b9bcbc" stroke-width="1"/>
<path d="M1841.5 551L1841.5 603" stroke="#b9bcbc" stroke-width="1"/>
<path d="M1843 297L1846 297" stroke="#999" stroke-width="0.8"/>
<path d="M1843 303L1846 303" stroke="#999" stroke-width="0.8"/>
<path d="M1843 311L1846 311" stroke="#999" stroke-width="0.8"/>
<path d="M1843 318L1846 318" stroke="#999" stroke-width="0.8"/>
<path d="M1843 325L1846 325" stroke="#999" stroke-width="0.8"/>
<path d="M1843 331L1846 331" stroke="#999" stroke-width="0.8"/>
<path d="M1843 337L1846 337" stroke="#999" stroke-width="0.8"/>
<rect x="1567.2" y="272.6" width="245.3" height="288.9" stroke="#17432c" stroke-width="4.5" fill="none"/>
<path d="M1570 278.800H1792Q1799 278.800 1799.500 273.500" stroke="#17432c" stroke-width="1.1" fill="none"/>
<path d="M1571.500 303Q1574 280 1598.300 278.800M1784.900 278.800Q1809 281 1811.200 305.900" stroke="#17432c" stroke-width="1" fill="none"/>
<path d="M1614.500 312.700H1769Q1779 312.700 1779 322.700V397.700Q1779 407.700 1769 407.700H1614.500Q1604.500 407.700 1604.500 397.700V322.700Q1604.500 312.700 1614.500 312.700Z" stroke="#17432c" stroke-width="1.1" fill="none"/>
<path d="M1615.5 278.8L1615.5 312.7" stroke="#17432c" stroke-width="1"/>
<path d="M1767 278.8L1767 312.7" stroke="#17432c" stroke-width="1"/>
<path d="M1571.5 324.8L1604.5 324.8" stroke="#17432c" stroke-width="1"/>
<path d="M1779 324.8L1811 324.8" stroke="#17432c" stroke-width="1"/>
<path d="M1571.5 395.5L1604.5 395.5" stroke="#17432c" stroke-width="1"/>
<path d="M1779 395.5L1811 395.5" stroke="#17432c" stroke-width="1"/>
<path d="M1808.500 319.500Q1803.300 321 1803.100 326V452Q1803.400 460.500 1809.500 461" stroke="#17432c" stroke-width="1" fill="none"/>
<circle cx="1576.8" cy="284.8" r="4.6" stroke="#17432c" stroke-width="0.9" fill="none"/>
<circle cx="1576.8" cy="294.8" r="4.6" stroke="#17432c" stroke-width="0.9" fill="none"/>
<path d="M1571.800 319.200H1581.600V279.500" stroke="#17432c" stroke-width="1" fill="none" stroke-dasharray="4 2.500"/>
<path d="M1680.200 273V287.400H1724.600V273" stroke="#17432c" stroke-width="1" fill="none" stroke-dasharray="4 2.500"/>
<circle cx="1649.6" cy="244.3" r="7.2" stroke="#17432c" stroke-width="1.1" fill="none"/>
<text x="1649.6" y="247.9" font-size="10" fill="#17432c" text-anchor="middle" textLength="4.3" lengthAdjust="spacingAndGlyphs">4</text>
<path d="M1656.800 244.300H1664.200V264" stroke="#17432c" stroke-width="1.1" fill="none"/>
<path d="M1664.2 270L1662 263L1666.4 263Z" fill="#17432c"/>
<circle cx="1687" cy="244.3" r="7.2" stroke="#17432c" stroke-width="1.1" fill="none"/>
<text x="1687" y="247.9" font-size="10" fill="#17432c" text-anchor="middle" textLength="4.3" lengthAdjust="spacingAndGlyphs">3</text>
<path d="M1694.200 244.300H1701.600V264" stroke="#17432c" stroke-width="1.1" fill="none"/>
<path d="M1701.6 270L1699.4 263L1703.8 263Z" fill="#17432c"/>
<circle cx="1591.5" cy="253" r="7.2" stroke="#17432c" stroke-width="1.1" fill="none"/>
<text x="1591.5" y="256.6" font-size="10" fill="#17432c" text-anchor="middle" textLength="4.3" lengthAdjust="spacingAndGlyphs">8</text>
<path d="M1584.300 253H1576.400V264" stroke="#17432c" stroke-width="1.1" fill="none"/>
<path d="M1576.4 270L1574.2 263L1578.6 263Z" fill="#17432c"/>
<rect x="1646.8" y="272.2" width="17.4" height="17" stroke="#8fca7c" stroke-width="0.6" fill="#8cc86f" fill-opacity=".55"/>
<circle cx="1655" cy="280.5" r="4.6" stroke="#17432c" stroke-width="1" fill="none"/>
<path d="M1653.5 275.9V287.1M1656.5 275.9V287.1M1648.4 279.2H1661.6M1648.4 281.8H1661.6" stroke="#17432c" stroke-width="0.7" fill="none"/>
<text x="1617.6" y="297.4" font-size="10.6" fill="#2b4a3a">ERP-08-28</text>
<circle cx="1702.4" cy="292.2" r="5" stroke="#17432c" stroke-width="1.1" fill="none"/>
<path d="M1697.400 292.200A5 5 0 0 1 1707.400 292.200Z" stroke="#17432c" stroke-width="0" fill="#17432c"/>
<path d="M1702.4 297L1702.4 300.5" stroke="#17432c" stroke-width="1"/>
<rect x="1703.3" y="292.2" width="61.6" height="12.4" stroke="#e2468c" stroke-width="1" fill="#e0669a" fill-opacity=".38"/>
<text x="1710.5" y="301.8" font-size="10.4" fill="#4a3d48">ERP-08-33</text>
<path d="M1617 337H1610L1596.300 407.700" stroke="#17432c" stroke-width="1.1" fill="none"/>
<rect x="1617" y="329.1" width="62.8" height="13.7" stroke="#e2468c" stroke-width="1" fill="#e0669a" fill-opacity=".38"/>
<text x="1625.7" y="340.6" font-size="10.4" fill="#4a3d48">ERP-08-36</text>
<text x="1684.7" y="337" font-size="7.4" fill="#83a594">CENTRAL IT</text>
<rect x="1693.3" y="344" width="28.6" height="12.4" stroke="#83a594" stroke-width="0.8" fill="none"/>
<text x="1707.6" y="352.6" font-size="7.4" fill="#83a594" text-anchor="middle">147</text>
<circle cx="1765.3" cy="344.8" r="7.2" stroke="#17432c" stroke-width="1.1" fill="none"/>
<text x="1765.3" y="348.4" font-size="10" fill="#17432c" text-anchor="middle" textLength="4.3" lengthAdjust="spacingAndGlyphs">4</text>
<path d="M1765.300 352V368.500H1790" stroke="#17432c" stroke-width="1.1" fill="none"/>
<path d="M1796 368.5L1789 366.3L1789 370.7Z" fill="#17432c"/>
<circle cx="1625.4" cy="362" r="7.2" stroke="#17432c" stroke-width="1.1" fill="none"/>
<text x="1625.4" y="365.6" font-size="10" fill="#17432c" text-anchor="middle" textLength="4.3" lengthAdjust="spacingAndGlyphs">7</text>
<path d="M1632.600 362H1650.500V401" stroke="#17432c" stroke-width="1.1" fill="none"/>
<path d="M1650.5 407.7L1648.3 400.7L1652.7 400.7Z" fill="#17432c"/>
<circle cx="1579" cy="382.2" r="7.2" stroke="#17432c" stroke-width="1.1" fill="none"/>
<text x="1579" y="385.8" font-size="10" fill="#17432c" text-anchor="middle" textLength="4.3" lengthAdjust="spacingAndGlyphs">1</text>
<path d="M1586.200 382.200H1593.700V399" stroke="#17432c" stroke-width="1.1" fill="none"/>
<path d="M1593.7 405L1591.5 398L1595.9 398Z" fill="#17432c"/>
<circle cx="1625.4" cy="381.6" r="7.2" stroke="#17432c" stroke-width="1.1" fill="none"/>
<text x="1625.4" y="385.2" font-size="10" fill="#17432c" text-anchor="middle" textLength="4.3" lengthAdjust="spacingAndGlyphs">1</text>
<path d="M1632.600 381.600H1640.300V399" stroke="#17432c" stroke-width="1.1" fill="none"/>
<path d="M1640.3 405L1638.1 398L1642.5 398Z" fill="#17432c"/>
<rect x="1664.2" y="374.8" width="13.3" height="12.6" stroke="#17432c" stroke-width="1.2" fill="none"/>
<path d="M1665.500 385.500L1670.800 376L1676.200 385.500Z" stroke="#17432c" stroke-width="0" fill="#17432c"/>
<path d="M1677.500 376.400H1687V385.500H1677.500M1687 380H1690V377" stroke="#17432c" stroke-width="1.1" fill="none"/>
<text x="1694.8" y="379.6" font-size="10.6" fill="#2b4a3a">ACU-02</text>
<text x="1694.8" y="392.7" font-size="10.6" fill="#2b4a3a">208V/1PH</text>
<text x="1694.8" y="403.8" font-size="10.6" fill="#2b4a3a">ERP-08-29, 31</text>
<rect x="1796.4" y="387.2" width="17.2" height="16.3" stroke="#8fca7c" stroke-width="0.6" fill="#8cc86f" fill-opacity=".55"/>
<circle cx="1805.7" cy="395.7" r="4.6" stroke="#17432c" stroke-width="1" fill="none"/>
<path d="M1804.2 391.1V402.3M1807.2 391.1V402.3M1799.1 394.4H1812.3M1799.1 397H1812.3" stroke="#17432c" stroke-width="0.7" fill="none"/>
<path d="M1798 399.500L1776 414.500H1764" stroke="#17432c" stroke-width="1.1" fill="none"/>
<rect x="1569.8" y="406.5" width="41.8" height="59" stroke="#86b39b" stroke-width="1.4" fill="none"/>
<rect x="1571.8" y="409" width="37.8" height="54" stroke="#86b39b" stroke-width="0.7" fill="none"/>
<path d="M1579.8 412L1579.8 460" stroke="#86b39b" stroke-width="0.6" stroke-dasharray="1.500 1.500"/>
<path d="M1586.3 412L1586.3 460" stroke="#86b39b" stroke-width="0.6" stroke-dasharray="1.500 1.500"/>
<path d="M1592.8 412L1592.8 460" stroke="#86b39b" stroke-width="0.6" stroke-dasharray="1.500 1.500"/>
<path d="M1599.3 412L1599.3 460" stroke="#86b39b" stroke-width="0.6" stroke-dasharray="1.500 1.500"/>
<rect x="1572.3" y="417" width="4" height="10" stroke="none" stroke-width="0" fill="#86b39b"/>
<rect x="1572.3" y="438" width="4" height="10" stroke="none" stroke-width="0" fill="#86b39b"/>
<rect x="1604.8" y="417" width="4" height="10" stroke="none" stroke-width="0" fill="#86b39b"/>
<rect x="1604.8" y="438" width="4" height="10" stroke="none" stroke-width="0" fill="#86b39b"/>
<rect x="1586.8" y="432" width="8" height="2.2" stroke="none" stroke-width="0" fill="#86b39b"/>
<path d="M1569.8 458L1611.6 458" stroke="#86b39b" stroke-width="0.8"/>
<path d="M1598.8 446V451M1602.3 447V452H1605.8" stroke="#17432c" stroke-width="1" fill="none"/>
<rect x="1628.9" y="406.5" width="41.8" height="59" stroke="#86b39b" stroke-width="1.4" fill="none"/>
<rect x="1630.9" y="409" width="37.8" height="54" stroke="#86b39b" stroke-width="0.7" fill="none"/>
<path d="M1638.9 412L1638.9 460" stroke="#86b39b" stroke-width="0.6" stroke-dasharray="1.500 1.500"/>
<path d="M1645.4 412L1645.4 460" stroke="#86b39b" stroke-width="0.6" stroke-dasharray="1.500 1.500"/>
<path d="M1651.9 412L1651.9 460" stroke="#86b39b" stroke-width="0.6" stroke-dasharray="1.500 1.500"/>
<path d="M1658.4 412L1658.4 460" stroke="#86b39b" stroke-width="0.6" stroke-dasharray="1.500 1.500"/>
<rect x="1631.4" y="417" width="4" height="10" stroke="none" stroke-width="0" fill="#86b39b"/>
<rect x="1631.4" y="438" width="4" height="10" stroke="none" stroke-width="0" fill="#86b39b"/>
<rect x="1663.9" y="417" width="4" height="10" stroke="none" stroke-width="0" fill="#86b39b"/>
<rect x="1663.9" y="438" width="4" height="10" stroke="none" stroke-width="0" fill="#86b39b"/>
<rect x="1645.9" y="432" width="8" height="2.2" stroke="none" stroke-width="0" fill="#86b39b"/>
<path d="M1628.9 458L1670.7 458" stroke="#86b39b" stroke-width="0.8"/>
<path d="M1657.9 446V451M1661.4 447V452H1664.9" stroke="#17432c" stroke-width="1" fill="none"/>
<rect x="1612.3" y="405.5" width="16.3" height="59.5" stroke="#86b39b" stroke-width="1.4" fill="none"/>
<rect x="1614.1" y="457" width="12.7" height="6" stroke="#86b39b" stroke-width="0.7" fill="none"/>
<path d="M1615.3 409L1615.3 455" stroke="#86b39b" stroke-width="0.7"/>
<rect x="1670.7" y="405.5" width="16.3" height="59.5" stroke="#86b39b" stroke-width="1.4" fill="none"/>
<rect x="1672.5" y="457" width="12.7" height="6" stroke="#86b39b" stroke-width="0.7" fill="none"/>
<path d="M1673.7 409L1673.7 455" stroke="#86b39b" stroke-width="0.7"/>
<rect x="1584.5" y="409.4" width="13.4" height="15.2" stroke="#dfae6a" stroke-width="0.9" fill="#dcb878" fill-opacity=".5"/>
<circle cx="1591.1" cy="416.4" r="4.5" stroke="#17432c" stroke-width="1.1" fill="none"/>
<path d="M1591.1 411.9L1591.1 420.9" stroke="#17432c" stroke-width="1"/>
<rect x="1642.2" y="409.4" width="13.4" height="15.2" stroke="#dfae6a" stroke-width="0.9" fill="#dcb878" fill-opacity=".5"/>
<circle cx="1648.8" cy="416.4" r="4.5" stroke="#17432c" stroke-width="1.1" fill="none"/>
<path d="M1648.8 411.9L1648.8 420.9" stroke="#17432c" stroke-width="1"/>
<rect x="1584.5" y="439.2" width="13.4" height="15.2" stroke="#dfae6a" stroke-width="0.9" fill="#dcb878" fill-opacity=".5"/>
<circle cx="1591.1" cy="446.2" r="4.5" stroke="#17432c" stroke-width="1.1" fill="none"/>
<path d="M1591.1 441.7L1591.1 450.7" stroke="#17432c" stroke-width="1"/>
<rect x="1642.2" y="439.2" width="13.4" height="15.2" stroke="#dfae6a" stroke-width="0.9" fill="#dcb878" fill-opacity=".5"/>
<circle cx="1648.8" cy="446.2" r="4.5" stroke="#17432c" stroke-width="1.1" fill="none"/>
<path d="M1648.8 441.7L1648.8 450.7" stroke="#17432c" stroke-width="1"/>
<circle cx="1543.8" cy="415.6" r="7.2" stroke="#17432c" stroke-width="1.1" fill="none"/>
<text x="1543.8" y="419.2" font-size="10" fill="#17432c" text-anchor="middle" textLength="4.3" lengthAdjust="spacingAndGlyphs">7</text>
<path d="M1585 415.6L1557 415.6" stroke="#17432c" stroke-width="1.1"/>
<path d="M1551.5 415.6L1558.5 413.4L1558.5 417.8Z" fill="#17432c"/>
<circle cx="1543.8" cy="446.2" r="7.2" stroke="#17432c" stroke-width="1.1" fill="none"/>
<text x="1543.8" y="449.8" font-size="10" fill="#17432c" text-anchor="middle" textLength="4.3" lengthAdjust="spacingAndGlyphs">7</text>
<path d="M1585 446.2L1557 446.2" stroke="#17432c" stroke-width="1.1"/>
<path d="M1551.5 446.2L1558.5 444L1558.5 448.4Z" fill="#17432c"/>
<path d="M1776 414.500H1764.500" stroke="#17432c" stroke-width="1" fill="none"/>
<rect x="1701.4" y="408.4" width="63.1" height="13.2" stroke="#e2468c" stroke-width="1" fill="#e0669a" fill-opacity=".38"/>
<text x="1706.5" y="418.9" font-size="10.4" fill="#4a3d48">ERP-08-30</text>
<rect x="1701.4" y="421.6" width="63.1" height="12.6" stroke="#e2468c" stroke-width="1" fill="#e0669a" fill-opacity=".38"/>
<text x="1706.5" y="430.7" font-size="10.4" fill="#4a3d48">ERP-08-34</text>
<rect x="1701.4" y="432" width="63.1" height="13.4" stroke="#e2468c" stroke-width="1" fill="#e0669a" fill-opacity=".38"/>
<text x="1706.5" y="442.2" font-size="10.4" fill="#4a3d48">ERP-08-35</text>
<path d="M1704 427.500H1690L1656 416" stroke="#17432c" stroke-width="1" fill="none"/>
<path d="M1704 438.500H1690L1657 444" stroke="#17432c" stroke-width="1" fill="none"/>
<path d="M1614.100 455.500H1768.900Q1778.900 455.500 1778.900 465.500V498.500Q1778.900 508.500 1768.900 508.500H1614.100Q1604.100 508.500 1604.100 498.500V465.500Q1604.100 455.500 1614.100 455.500Z" stroke="#17432c" stroke-width="1.5" fill="none"/>
<path d="M1569.8 467.8L1604.1 467.8" stroke="#17432c" stroke-width="2"/>
<path d="M1778.9 467.8L1810 467.8" stroke="#17432c" stroke-width="2"/>
<path d="M1569.8 495.2L1604.1 495.2" stroke="#17432c" stroke-width="2"/>
<path d="M1778.9 495.2L1810 495.2" stroke="#17432c" stroke-width="2"/>
<circle cx="1762.3" cy="466.3" r="7.2" stroke="#17432c" stroke-width="1.1" fill="none"/>
<text x="1762.3" y="469.9" font-size="10" fill="#17432c" text-anchor="middle" textLength="4.3" lengthAdjust="spacingAndGlyphs">6</text>
<path d="M1762.300 473.500V489.400H1792" stroke="#17432c" stroke-width="1.1" fill="none"/>
<path d="M1798.4 489.4L1791.4 487.2L1791.4 491.6Z" fill="#17432c"/>
<path d="M1802.700 475.700V503.600" stroke="#17432c" stroke-width="3" fill="none"/>
<path d="M1802.700 483.400H1809M1802.700 495.900H1809" stroke="#17432c" stroke-width="2.4" fill="none"/>
<circle cx="1639" cy="490.6" r="7.2" stroke="#17432c" stroke-width="1.1" fill="none"/>
<text x="1639" y="494.2" font-size="10" fill="#17432c" text-anchor="middle" textLength="4.3" lengthAdjust="spacingAndGlyphs">2</text>
<path d="M1631.800 490.600H1621V475" stroke="#17432c" stroke-width="1.1" fill="none"/>
<path d="M1621 468.5L1618.8 475.5L1623.2 475.5Z" fill="#17432c"/>
<circle cx="1668.6" cy="490.6" r="7.2" stroke="#17432c" stroke-width="1.1" fill="none"/>
<text x="1668.6" y="494.2" font-size="10" fill="#17432c" text-anchor="middle" textLength="4.3" lengthAdjust="spacingAndGlyphs">7</text>
<path d="M1661.400 490.600H1650.200V462" stroke="#17432c" stroke-width="1.1" fill="none"/>
<path d="M1650.2 455.5L1648 462.5L1652.4 462.5Z" fill="#17432c"/>
<circle cx="1701.5" cy="490.6" r="7.2" stroke="#17432c" stroke-width="1.1" fill="none"/>
<text x="1701.5" y="494.2" font-size="10" fill="#17432c" text-anchor="middle" textLength="4.3" lengthAdjust="spacingAndGlyphs">2</text>
<path d="M1694.300 490.600H1683.700V475" stroke="#17432c" stroke-width="1.1" fill="none"/>
<path d="M1683.7 468.5L1681.5 475.5L1685.9 475.5Z" fill="#17432c"/>
<circle cx="1726.3" cy="488.3" r="7.2" stroke="#17432c" stroke-width="1.1" fill="none"/>
<text x="1726.3" y="491.9" font-size="10" fill="#17432c" text-anchor="middle" textLength="4.3" lengthAdjust="spacingAndGlyphs">5</text>
<path d="M1733.500 488.300H1741.400V513.500" stroke="#17432c" stroke-width="1.1" fill="none"/>
<path d="M1741.4 519.7L1739.2 512.7L1743.6 512.7Z" fill="#17432c"/>
<path d="M1612 518.600H1604.400L1591.400 461" stroke="#17432c" stroke-width="1.1" fill="none"/>
<path d="M1591.3 455.5L1589.3 461.5L1593.3 461.5Z" fill="#17432c"/>
<rect x="1610.4" y="512.2" width="63.2" height="13.3" stroke="#e2468c" stroke-width="1" fill="#e0669a" fill-opacity=".38"/>
<text x="1619.5" y="522.5" font-size="10.4" fill="#4a3d48">ERP-08-37</text>
<rect x="1663.2" y="530.2" width="63.3" height="13.6" stroke="#e2468c" stroke-width="1" fill="#e0669a" fill-opacity=".38"/>
<text x="1669.3" y="539.1" font-size="10.4" fill="#4a3d48">ERP-08-32</text>
<rect x="1706" y="540.2" width="17.7" height="17.3" stroke="#8fca7c" stroke-width="0.6" fill="#8cc86f" fill-opacity=".55"/>
<circle cx="1715" cy="549.3" r="4.6" stroke="#17432c" stroke-width="1" fill="none"/>
<path d="M1713.5 544.7V555.9M1716.5 544.7V555.9M1708.4 548H1721.6M1708.4 550.6H1721.6" stroke="#17432c" stroke-width="0.7" fill="none"/>
<circle cx="1584.5" cy="520.9" r="7.2" stroke="#17432c" stroke-width="1.1" fill="none"/>
<text x="1584.5" y="524.5" font-size="10" fill="#17432c" text-anchor="middle" textLength="4.3" lengthAdjust="spacingAndGlyphs">8</text>
<path d="M1591.700 520.900H1599V541" stroke="#17432c" stroke-width="1.1" fill="none"/>
<path d="M1599 547L1596.8 540L1601.2 540Z" fill="#17432c"/>
<circle cx="1578.4" cy="554.6" r="4.5" stroke="#17432c" stroke-width="0.9" fill="none"/>
<circle cx="1587.8" cy="554.6" r="4.5" stroke="#17432c" stroke-width="0.9" fill="none"/>
<path d="M1573.400 559V549.300H1612.700V559" stroke="#17432c" stroke-width="1" fill="none" stroke-dasharray="4 2.500"/>
<path d="M1571.500 525.500Q1574 551 1600.800 552.600H1612" stroke="#17432c" stroke-width="1" fill="none"/>
<path d="M1623 559Q1624 554.300 1630 554.300H1786.800Q1808 552 1810 529.800" stroke="#17432c" stroke-width="1" fill="none"/>
<path d="M1615.2 508.5L1615.2 554" stroke="#17432c" stroke-width="1"/>
<path d="M1767.4 508.5L1767.4 554.3" stroke="#17432c" stroke-width="1"/>
<g transform="translate(1800.500,548.600) rotate(45)"><rect x="-2" y="-4.500" width="13" height="8" stroke="#17432c" stroke-width="1.100" fill="none"/><path d="M-2 0L-8.500 -3.500V3.500Z" stroke="#17432c" stroke-width="1.100" fill="none"/></g>
<circle cx="1702" cy="590.7" r="7.2" stroke="#17432c" stroke-width="1.1" fill="none"/>
<text x="1702" y="594.3" font-size="10" fill="#17432c" text-anchor="middle" textLength="4.3" lengthAdjust="spacingAndGlyphs">4</text>
<path d="M1694.800 590.700H1683.700V570" stroke="#17432c" stroke-width="1.1" fill="none"/>
<path d="M1683.7 563.7L1681.5 570.7L1685.9 570.7Z" fill="#17432c"/>
<path d="M1584.5 678.7L1584.5 835" stroke="#86b39b" stroke-width="1"/>
<path d="M1586 678.7L1586 835" stroke="#86b39b" stroke-width="1"/>
<path d="M1599.5 678.7L1599.5 704.4" stroke="#86b39b" stroke-width="1"/>
<path d="M1601.9 678.7L1601.9 704.4" stroke="#86b39b" stroke-width="0.8"/>
<path d="M1599.500 704.400H1761.400V678.700" stroke="#86b39b" stroke-width="1" fill="none"/>
<path d="M1592.400 682V713H1797V682" stroke="#86b39b" stroke-width="0.9" fill="none" stroke-dasharray="4 3"/>
<path d="M1801.7 678.7L1801.7 934" stroke="#86b39b" stroke-width="1"/>
<path d="M1803.6 678.7L1803.6 934" stroke="#c9cdcc" stroke-width="0.8"/>
<path d="M1547 744.200Q1558 742 1568.700 742.200V832M1563.500 742.500V832H1567Q1566 842 1568 852Q1571 854 1572.600 853.200V835H1585M1572.600 850H1601V720.500M1599 720.500V848" stroke="#86b39b" stroke-width="0.9" fill="none"/>
<rect x="1791" y="733" width="11" height="19" stroke="#86b39b" stroke-width="0.9" fill="none"/>
<path d="M1606.900 720.900H1787.100V837.400" stroke="#17432c" stroke-width="4.2" fill="none"/>
<path d="M1606.9 717.4L1789 717.4" stroke="#17432c" stroke-width="1"/>
<path d="M1599 720.5L1607 720.5" stroke="#86b39b" stroke-width="1"/>
<text x="1603.9" y="701.6" font-size="10.6" fill="#2b4a3a">ERP-06-49</text>
<path d="M1658.700 698.700H1673L1669.400 712" stroke="#17432c" stroke-width="1.1" fill="none"/>
<path d="M1668.9 718L1666.9 712L1670.9 712Z" fill="#17432c"/>
<circle cx="1708.5" cy="690.5" r="7.2" stroke="#17432c" stroke-width="1.1" fill="none"/>
<text x="1708.5" y="694.1" font-size="10" fill="#17432c" text-anchor="middle" textLength="4.3" lengthAdjust="spacingAndGlyphs">5</text>
<path d="M1715.700 690.500H1723.500V721" stroke="#17432c" stroke-width="1.1" fill="none"/>
<rect x="1660" y="719.8" width="15.8" height="18.4" stroke="#dfae6a" stroke-width="0.9" fill="#dcb878" fill-opacity=".5"/>
<circle cx="1668.2" cy="727.7" r="5" stroke="#17432c" stroke-width="1" fill="#4f6b50"/>
<path d="M1666.500 731V735M1668.200 731V735M1670 731V735" stroke="#17432c" stroke-width="0.6" fill="none"/>
<rect x="1665.4" y="730.3" width="32.5" height="15.2" stroke="#e2468c" stroke-width="1" fill="#e0669a" fill-opacity=".38"/>
<text x="1672.2" y="742" font-size="10.6" fill="#4a3d48">GFI</text>
<path d="M1623.200 726.100Q1624 731.900 1628.700 731.900H1763.800Q1768 731.900 1768.800 726.100" stroke="#17432c" stroke-width="1.1" fill="none"/>
<circle cx="1707.7" cy="729.2" r="4.7" stroke="#17432c" stroke-width="0.9" fill="none"/>
<circle cx="1717.5" cy="729.2" r="4.7" stroke="#17432c" stroke-width="0.9" fill="none"/>
<rect x="1702.5" y="724.5" width="40.3" height="9.5" stroke="#17432c" stroke-width="0.9" fill="none" stroke-dasharray="4 2.500"/>
<circle cx="1648.5" cy="756.4" r="7.2" stroke="#17432c" stroke-width="1.1" fill="none"/>
<text x="1648.5" y="760" font-size="10" fill="#17432c" text-anchor="middle" textLength="4.3" lengthAdjust="spacingAndGlyphs">2</text>
<path d="M1641.300 756.400H1630.300V740" stroke="#17432c" stroke-width="1.1" fill="none"/>
<path d="M1630.3 733.2L1628.1 740.2L1632.5 740.2Z" fill="#17432c"/>
<circle cx="1731.9" cy="748.5" r="7.2" stroke="#17432c" stroke-width="1.1" fill="none"/>
<text x="1731.9" y="752.1" font-size="10" fill="#17432c" text-anchor="middle" textLength="4.3" lengthAdjust="spacingAndGlyphs">6</text>
<path d="M1731.900 755.700V771.100H1762" stroke="#17432c" stroke-width="1.1" fill="none"/>
<path d="M1768.5 771.1L1761.5 768.9L1761.5 773.3Z" fill="#17432c"/>
<circle cx="1736.6" cy="787.2" r="7.2" stroke="#17432c" stroke-width="1.1" fill="none"/>
<text x="1736.6" y="790.8" font-size="10" fill="#17432c" text-anchor="middle" textLength="4.3" lengthAdjust="spacingAndGlyphs">4</text>
<path d="M1736.600 794.400V809.800H1767" stroke="#17432c" stroke-width="1.1" fill="none"/>
<path d="M1773.2 809.8L1766.2 807.6L1766.2 812Z" fill="#17432c"/>
<circle cx="1629" cy="773.8" r="7.2" stroke="#17432c" stroke-width="1.1" fill="none"/>
<text x="1629" y="777.4" font-size="10" fill="#17432c" text-anchor="middle" textLength="4.3" lengthAdjust="spacingAndGlyphs">1</text>
<path d="M1636.2 773.8L1667.4 773.8" stroke="#17432c" stroke-width="1.1"/>
<path d="M1667.4 773.8L1661.4 772L1661.4 775.6Z" fill="#17432c"/>
<clipPath id="hc"><rect x="1670.300" y="756.100" width="51.600" height="49.400"/></clipPath>
<g clip-path="url(#hc)" stroke="#17432c" stroke-width="1">
<path d="M1609.1 805.500L1658.5 756.100"/>
<path d="M1624.4 805.500L1673.8 756.100"/>
<path d="M1639.7 805.500L1689.1 756.100"/>
<path d="M1655 805.500L1704.4 756.100"/>
<path d="M1670.3 805.500L1719.7 756.100"/>
<path d="M1685.6 805.500L1735 756.100"/>
<path d="M1700.9 805.500L1750.3 756.100"/>
<path d="M1716.2 805.500L1765.6 756.100"/>
<path d="M1731.5 805.500L1780.9 756.100"/>
</g>
<rect x="1670.3" y="756.1" width="51.6" height="49.4" stroke="#17432c" stroke-width="0.9" fill="none" stroke-dasharray="4 2.500"/>
<rect x="1772.1" y="752.1" width="10.6" height="39.2" stroke="#86b39b" stroke-width="0.9" fill="none"/>
<circle cx="1777.2" cy="756.9" r="4.8" stroke="#17432c" stroke-width="0.9" fill="none"/>
<circle cx="1777.2" cy="766.7" r="4.8" stroke="#17432c" stroke-width="0.9" fill="none"/>
<circle cx="1777.2" cy="777.1" r="4.8" stroke="#17432c" stroke-width="0.9" fill="none"/>
<circle cx="1777.2" cy="786.6" r="4.8" stroke="#17432c" stroke-width="0.9" fill="none"/>
<path d="M1781.100 730Q1775.300 731 1775.100 736V831Q1775.500 836.500 1781 837" stroke="#17432c" stroke-width="1.1" fill="none"/>
<path d="M1777.200 797.200V825.600" stroke="#17432c" stroke-width="3" fill="none"/>
<path d="M1777.200 804.300H1783M1777.200 816.900H1783" stroke="#17432c" stroke-width="2.4" fill="none"/>
<rect x="1599.5" y="781.4" width="16.3" height="18.1" stroke="#dfae6a" stroke-width="0.9" fill="#dcb878" fill-opacity=".5"/>
<circle cx="1606.3" cy="791.9" r="5" stroke="#17432c" stroke-width="1" fill="#4f6b50"/>
<path d="M1606.3 787L1606.3 797" stroke="#17432c" stroke-width="0.7"/>
<path d="M1611 791.9L1614 791.9" stroke="#17432c" stroke-width="0.8"/>
<rect x="1607.4" y="781" width="63.2" height="15.4" stroke="#e2468c" stroke-width="1" fill="#e0669a" fill-opacity=".38"/>
<text x="1615" y="792.5" font-size="10.6" fill="#4a3d48">ERP-06-48</text>
<rect x="1606.1" y="791.3" width="32.6" height="15" stroke="#e2468c" stroke-width="1" fill="#e0669a" fill-opacity=".38"/>
<text x="1615" y="802.6" font-size="10.6" fill="#4a3d48">GFI</text>
<circle cx="1735.3" cy="849.7" r="7.2" stroke="#17432c" stroke-width="1.1" fill="none"/>
<text x="1735.3" y="853.3" font-size="10" fill="#17432c" text-anchor="middle" textLength="4.3" lengthAdjust="spacingAndGlyphs">2</text>
<path d="M1735.300 842.500V826H1760.500" stroke="#17432c" stroke-width="1.1" fill="none"/>
<path d="M1766.9 826L1759.9 823.8L1759.9 828.2Z" fill="#17432c"/>
<rect x="1765.4" y="843.4" width="22.1" height="13.8" stroke="#dfae6a" stroke-width="0.9" fill="#dcb878" fill-opacity=".5"/>
<circle cx="1780" cy="850" r="4.6" stroke="#17432c" stroke-width="1" fill="none"/>
<path d="M1773 848.700H1785M1773 851.300H1785" stroke="#17432c" stroke-width="0.7" fill="none"/>
<rect x="1736.6" y="853.5" width="50.1" height="13.2" stroke="#e2468c" stroke-width="1" fill="#e0669a" fill-opacity=".38"/>
<text x="1738.2" y="865.5" font-size="10.6" fill="#4a3d48">RP-04-55</text>
<text x="1665.5" y="841.4" font-size="7.4" fill="#83a594" text-anchor="middle">TELECOM</text>
<text x="1665.5" y="850.5" font-size="7.4" fill="#83a594" text-anchor="middle">DEMARCATION</text>
<text x="1662.4" y="865.4" font-size="7.4" fill="#83a594" text-anchor="middle">MAIN ELEC.</text>
<text x="1662.4" y="874.5" font-size="7.4" fill="#83a594" text-anchor="middle">ROOM</text>
<rect x="1649.6" y="877.7" width="28.1" height="12.6" stroke="#a9b5b0" stroke-width="0.9" fill="none"/>
<text x="1663.6" y="886.4" font-size="7.4" fill="#83a594" text-anchor="middle">192</text>
<path d="M1775.6 867L1775.6 934" stroke="#b5bab8" stroke-width="0.9"/>
<path d="M1777.4 867L1777.4 934" stroke="#b5bab8" stroke-width="0.9"/>
<path d="M1784.6 867L1784.6 934" stroke="#b5bab8" stroke-width="0.9"/>
<path d="M1787.5 867L1787.5 934" stroke="#b5bab8" stroke-width="0.9"/>
<path d="M1777 874.9L1797 874.9" stroke="#b5bab8" stroke-width="0.9"/>
<path d="M1777 896.7L1797 896.7" stroke="#b5bab8" stroke-width="0.9"/>
<clipPath id="gc"><rect x="322" y="201" width="1178" height="918"/></clipPath>
<g clip-path="url(#gc)">
<circle cx="330" cy="263" r="28" stroke="#a9c67c" stroke-width="0.9" fill="none"/>
<text x="324.7" y="268" font-size="14.4" fill="#9ab76c">5</text>
<circle cx="436.4" cy="263" r="28" stroke="#a9c67c" stroke-width="0.9" fill="none"/>
<text x="436.4" y="268" font-size="14.4" fill="#9ab76c" text-anchor="middle">5.9</text>
<circle cx="496.8" cy="263" r="28" stroke="#a9c67c" stroke-width="0.9" fill="none"/>
<text x="496.8" y="268" font-size="14.4" fill="#9ab76c" text-anchor="middle">6</text>
<circle cx="664" cy="263" r="28" stroke="#a9c67c" stroke-width="0.9" fill="none"/>
<text x="664" y="268" font-size="14.4" fill="#9ab76c" text-anchor="middle">7</text>
<circle cx="831" cy="263" r="28" stroke="#a9c67c" stroke-width="0.9" fill="none"/>
<text x="831" y="268" font-size="14.4" fill="#9ab76c" text-anchor="middle">8</text>
<circle cx="998" cy="263" r="28" stroke="#a9c67c" stroke-width="0.9" fill="none"/>
<text x="998" y="268" font-size="14.4" fill="#9ab76c" text-anchor="middle">9</text>
<circle cx="1165.1" cy="263" r="28" stroke="#a9c67c" stroke-width="0.9" fill="none"/>
<text x="1165.1" y="268" font-size="14.4" fill="#9ab76c" text-anchor="middle">10</text>
<circle cx="1332.2" cy="263" r="28" stroke="#a9c67c" stroke-width="0.9" fill="none"/>
<text x="1332.2" y="268" font-size="14.4" fill="#9ab76c" text-anchor="middle">11</text>
<circle cx="1391.7" cy="263" r="28" stroke="#a9c67c" stroke-width="0.9" fill="none"/>
<text x="1391.7" y="268" font-size="14.4" fill="#9ab76c" text-anchor="middle">11.1</text>
<circle cx="1499.2" cy="263" r="28" stroke="#a9c67c" stroke-width="0.9" fill="none"/>
<text x="1489" y="268" font-size="14.4" fill="#9ab76c">12</text>
</g>
<circle cx="330" cy="280.3" r="4.8" stroke="#a9c67c" stroke-width="0.9" fill="none"/>
<path d="M329.5 291L329.5 410" stroke="#a9c67c" stroke-width="0.9"/>
<path d="M329.5 410L329.5 1119" stroke="#a9c67c" stroke-width="0.8" stroke-dasharray="9 3 2 3"/>
<path d="M496.7 291L496.7 410" stroke="#a9c67c" stroke-width="0.9"/>
<path d="M496.7 410L496.7 1119" stroke="#a9c67c" stroke-width="0.8" stroke-dasharray="9 3 2 3"/>
<path d="M664 291L664 410" stroke="#a9c67c" stroke-width="0.9"/>
<path d="M664 410L664 1119" stroke="#a9c67c" stroke-width="0.8" stroke-dasharray="9 3 2 3"/>
<path d="M831 291L831 410" stroke="#a9c67c" stroke-width="0.9"/>
<path d="M831 410L831 1119" stroke="#a9c67c" stroke-width="0.8" stroke-dasharray="9 3 2 3"/>
<path d="M998 291L998 410" stroke="#a9c67c" stroke-width="0.9"/>
<path d="M998 410L998 1119" stroke="#a9c67c" stroke-width="0.8" stroke-dasharray="9 3 2 3"/>
<path d="M1165.1 291L1165.1 410" stroke="#a9c67c" stroke-width="0.9"/>
<path d="M1165.1 410L1165.1 1119" stroke="#a9c67c" stroke-width="0.8" stroke-dasharray="9 3 2 3"/>
<path d="M1332.2 291L1332.2 410" stroke="#a9c67c" stroke-width="0.9"/>
<path d="M1332.2 410L1332.2 1119" stroke="#a9c67c" stroke-width="0.8" stroke-dasharray="9 3 2 3"/>
<path d="M436.400 291V313.700L488.500 360.700V1119" stroke="#a9c67c" stroke-width="0.9" fill="none"/>
<path d="M1391.700 291V330L1342.500 360.500" stroke="#a9c67c" stroke-width="0.9" fill="none"/>
<path d="M1395.7 249L1395.7 700" stroke="#a9c67c" stroke-width="0.8" stroke-dasharray="5 3"/>
<path d="M1430.1 249L1430.1 520" stroke="#a9c67c" stroke-width="0.8" stroke-dasharray="5 3"/>
<path d="M322 410.5L1500 410.5" stroke="#a9c67c" stroke-width="0.8" stroke-dasharray="7 4"/>
<path d="M322 484.5L1500 484.5" stroke="#a9c67c" stroke-width="0.8" stroke-dasharray="7 4"/>
<path d="M322 670L1500 670" stroke="#a9c67c" stroke-width="0.8" stroke-dasharray="7 4"/>
<path d="M322 784.6L1500 784.6" stroke="#a9c67c" stroke-width="0.8" stroke-dasharray="7 4"/>
<path d="M322 854.6L1500 854.6" stroke="#a9c67c" stroke-width="0.8" stroke-dasharray="7 4"/>
<path d="M322 964L1500 964" stroke="#a9c67c" stroke-width="0.8" stroke-dasharray="7 4"/>
<path d="M322 985.6L1500 985.6" stroke="#a9c67c" stroke-width="0.8" stroke-dasharray="7 4"/>
<path d="M251 410.5L322 410.5" stroke="#a9c67c" stroke-width="0.9"/>
<path d="M251 484.5L322 484.5" stroke="#a9c67c" stroke-width="0.9"/>
<path d="M251 503L322 503" stroke="#a9c67c" stroke-width="0.9"/>
<path d="M322 506L279.700 562.100H251" stroke="#a9c67c" stroke-width="0.9" fill="none"/>
<path d="M251 564.3L322 564.3" stroke="#a9c67c" stroke-width="0.8" stroke-dasharray="7 4"/>
<path d="M251 598.4L322 598.4" stroke="#a9c67c" stroke-width="0.8" stroke-dasharray="7 4"/>
<path d="M251 670.5L322 670.5" stroke="#a9c67c" stroke-width="0.9"/>
<path d="M251 672.5L322 672.5" stroke="#a9c67c" stroke-width="0.8" stroke-dasharray="7 4"/>
<path d="M251 785L322 785" stroke="#a9c67c" stroke-width="0.9"/>
<path d="M251 854.6L322 854.6" stroke="#a9c67c" stroke-width="0.9"/>
<path d="M251 964H300M251 985.600H300" stroke="#a9c67c" stroke-width="0.9" fill="none"/>
<path d="M322 985L279 1029H251" stroke="#a9c67c" stroke-width="0.9" fill="none"/>
<path d="M321.6 225L321.6 1086" stroke="#4c6b22" stroke-width="1.2"/>
<path d="M321.600 1086L329 1089.500L314 1093.500L321.600 1097V1119" stroke="#4c6b22" stroke-width="1.2" fill="none"/>
<path d="M323.8 503L323.8 1119" stroke="#a9c67c" stroke-width="0.9"/>
<path d="M1499.5 225L1499.5 1087" stroke="#4c6b22" stroke-width="1.1"/>
<path d="M1499.500 1087L1507 1090.500L1492 1094.500L1499.500 1098V1119" stroke="#4c6b22" stroke-width="1.1" fill="none"/>
<path d="M322 502.8L1500 502.8" stroke="#a9c67c" stroke-width="1"/>
<path d="M322 507.7L1500 507.7" stroke="#a9c67c" stroke-width="1"/>
<path d="M322 505.2L1500 505.2" stroke="#a9c67c" stroke-width="0.6"/>
<path d="M340 501.5L340 509" stroke="#a9c67c" stroke-width="0.8"/>
<path d="M373 501.5L373 509" stroke="#a9c67c" stroke-width="0.8"/>
<path d="M406 501.5L406 509" stroke="#a9c67c" stroke-width="0.8"/>
<path d="M439 501.5L439 509" stroke="#a9c67c" stroke-width="0.8"/>
<path d="M472 501.5L472 509" stroke="#a9c67c" stroke-width="0.8"/>
<path d="M505 501.5L505 509" stroke="#a9c67c" stroke-width="0.8"/>
<path d="M538 501.5L538 509" stroke="#a9c67c" stroke-width="0.8"/>
<path d="M571 501.5L571 509" stroke="#a9c67c" stroke-width="0.8"/>
<path d="M604 501.5L604 509" stroke="#a9c67c" stroke-width="0.8"/>
<path d="M637 501.5L637 509" stroke="#a9c67c" stroke-width="0.8"/>
<path d="M670 501.5L670 509" stroke="#a9c67c" stroke-width="0.8"/>
<path d="M703 501.5L703 509" stroke="#a9c67c" stroke-width="0.8"/>
<path d="M736 501.5L736 509" stroke="#a9c67c" stroke-width="0.8"/>
<path d="M769 501.5L769 509" stroke="#a9c67c" stroke-width="0.8"/>
<path d="M802 501.5L802 509" stroke="#a9c67c" stroke-width="0.8"/>
<path d="M835 501.5L835 509" stroke="#a9c67c" stroke-width="0.8"/>
<path d="M868 501.5L868 509" stroke="#a9c67c" stroke-width="0.8"/>
<path d="M901 501.5L901 509" stroke="#a9c67c" stroke-width="0.8"/>
<path d="M934 501.5L934 509" stroke="#a9c67c" stroke-width="0.8"/>
<path d="M967 501.5L967 509" stroke="#a9c67c" stroke-width="0.8"/>
<path d="M1000 501.5L1000 509" stroke="#a9c67c" stroke-width="0.8"/>
<path d="M1033 501.5L1033 509" stroke="#a9c67c" stroke-width="0.8"/>
<path d="M1066 501.5L1066 509" stroke="#a9c67c" stroke-width="0.8"/>
<path d="M1099 501.5L1099 509" stroke="#a9c67c" stroke-width="0.8"/>
<path d="M1132 501.5L1132 509" stroke="#a9c67c" stroke-width="0.8"/>
<path d="M1165 501.5L1165 509" stroke="#a9c67c" stroke-width="0.8"/>
<path d="M1198 501.5L1198 509" stroke="#a9c67c" stroke-width="0.8"/>
<path d="M1231 501.5L1231 509" stroke="#a9c67c" stroke-width="0.8"/>
<path d="M1264 501.5L1264 509" stroke="#a9c67c" stroke-width="0.8"/>
<path d="M1297 501.5L1297 509" stroke="#a9c67c" stroke-width="0.8"/>
<path d="M1330 501.5L1330 509" stroke="#a9c67c" stroke-width="0.8"/>
<path d="M1363 501.5L1363 509" stroke="#a9c67c" stroke-width="0.8"/>
<path d="M1396 501.5L1396 509" stroke="#a9c67c" stroke-width="0.8"/>
<path d="M1429 501.5L1429 509" stroke="#a9c67c" stroke-width="0.8"/>
<path d="M1462 501.5L1462 509" stroke="#a9c67c" stroke-width="0.8"/>
<path d="M1495 501.5L1495 509" stroke="#a9c67c" stroke-width="0.8"/>
<path d="M322 519.5L1342 519.5" stroke="#a9c67c" stroke-width="0.7"/>
<path d="M322 523L1342 523" stroke="#a9c67c" stroke-width="0.6"/>
<rect x="325.3" y="466.5" width="9" height="27.2" stroke="#a9c67c" stroke-width="0.9" fill="none"/>
<path d="M325.3 480L334.3 480" stroke="#a9c67c" stroke-width="0.7"/>
<path d="M326.8 482L332.8 490M332.8 482L326.8 490" stroke="#a9c67c" stroke-width="0.6" fill="none"/>
<rect x="325.3" y="766.6" width="9" height="26.7" stroke="#a9c67c" stroke-width="0.9" fill="none"/>
<path d="M325.3 780L334.3 780" stroke="#a9c67c" stroke-width="0.7"/>
<path d="M326.8 782L332.8 790M332.8 782L326.8 790" stroke="#a9c67c" stroke-width="0.6" fill="none"/>
<rect x="492.4" y="466.5" width="9" height="27.2" stroke="#a9c67c" stroke-width="0.9" fill="none"/>
<path d="M492.4 480L501.4 480" stroke="#a9c67c" stroke-width="0.7"/>
<path d="M493.9 482L499.9 490M499.9 482L493.9 490" stroke="#a9c67c" stroke-width="0.6" fill="none"/>
<rect x="492.4" y="766.6" width="9" height="26.7" stroke="#a9c67c" stroke-width="0.9" fill="none"/>
<path d="M492.4 780L501.4 780" stroke="#a9c67c" stroke-width="0.7"/>
<path d="M493.9 782L499.9 790M499.9 782L493.9 790" stroke="#a9c67c" stroke-width="0.6" fill="none"/>
<rect x="659.5" y="466.5" width="9" height="27.2" stroke="#a9c67c" stroke-width="0.9" fill="none"/>
<path d="M659.5 480L668.5 480" stroke="#a9c67c" stroke-width="0.7"/>
<path d="M661 482L667 490M667 482L661 490" stroke="#a9c67c" stroke-width="0.6" fill="none"/>
<rect x="659.5" y="766.6" width="9" height="26.7" stroke="#a9c67c" stroke-width="0.9" fill="none"/>
<path d="M659.5 780L668.5 780" stroke="#a9c67c" stroke-width="0.7"/>
<path d="M661 782L667 790M667 782L661 790" stroke="#a9c67c" stroke-width="0.6" fill="none"/>
<rect x="826.8" y="466.5" width="9" height="27.2" stroke="#a9c67c" stroke-width="0.9" fill="none"/>
<path d="M826.8 480L835.8 480" stroke="#a9c67c" stroke-width="0.7"/>
<path d="M828.3 482L834.3 490M834.3 482L828.3 490" stroke="#a9c67c" stroke-width="0.6" fill="none"/>
<rect x="826.8" y="766.6" width="9" height="26.7" stroke="#a9c67c" stroke-width="0.9" fill="none"/>
<path d="M826.8 780L835.8 780" stroke="#a9c67c" stroke-width="0.7"/>
<path d="M828.3 782L834.3 790M834.3 782L828.3 790" stroke="#a9c67c" stroke-width="0.6" fill="none"/>
<rect x="993.7" y="466.5" width="9" height="27.2" stroke="#a9c67c" stroke-width="0.9" fill="none"/>
<path d="M993.7 480L1002.7 480" stroke="#a9c67c" stroke-width="0.7"/>
<path d="M995.2 482L1001.2 490M1001.2 482L995.2 490" stroke="#a9c67c" stroke-width="0.6" fill="none"/>
<rect x="993.7" y="766.6" width="9" height="26.7" stroke="#a9c67c" stroke-width="0.9" fill="none"/>
<path d="M993.7 780L1002.7 780" stroke="#a9c67c" stroke-width="0.7"/>
<path d="M995.2 782L1001.2 790M1001.2 782L995.2 790" stroke="#a9c67c" stroke-width="0.6" fill="none"/>
<rect x="1160.8" y="466.5" width="9" height="27.2" stroke="#a9c67c" stroke-width="0.9" fill="none"/>
<path d="M1160.8 480L1169.8 480" stroke="#a9c67c" stroke-width="0.7"/>
<path d="M1162.3 482L1168.3 490M1168.3 482L1162.3 490" stroke="#a9c67c" stroke-width="0.6" fill="none"/>
<rect x="1160.8" y="766.6" width="9" height="26.7" stroke="#a9c67c" stroke-width="0.9" fill="none"/>
<path d="M1160.8 780L1169.8 780" stroke="#a9c67c" stroke-width="0.7"/>
<path d="M1162.3 782L1168.3 790M1168.3 782L1162.3 790" stroke="#a9c67c" stroke-width="0.6" fill="none"/>
<rect x="1327.9" y="466.5" width="9" height="27.2" stroke="#a9c67c" stroke-width="0.9" fill="none"/>
<path d="M1327.9 480L1336.9 480" stroke="#a9c67c" stroke-width="0.7"/>
<path d="M1329.4 482L1335.4 490M1335.4 482L1329.4 490" stroke="#a9c67c" stroke-width="0.6" fill="none"/>
<rect x="1327.9" y="766.6" width="9" height="26.7" stroke="#a9c67c" stroke-width="0.9" fill="none"/>
<path d="M1327.9 780L1336.9 780" stroke="#a9c67c" stroke-width="0.7"/>
<path d="M1329.4 782L1335.4 790M1335.4 782L1329.4 790" stroke="#a9c67c" stroke-width="0.6" fill="none"/>
<path d="M1339.5 525L1339.5 858" stroke="#a9c67c" stroke-width="1"/>
<path d="M1341.3 505L1341.3 858" stroke="#6f8c3e" stroke-width="1.2"/>
<path d="M1343.4 321L1343.4 858" stroke="#4c6b22" stroke-width="1.4" stroke-dasharray="11 3"/>
<path d="M652.5 523L652.5 759" stroke="#7f9a4c" stroke-width="1.1"/>
<path d="M655.1 523L655.1 759" stroke="#7f9a4c" stroke-width="1.1"/>
<path d="M653.8 759L653.8 835" stroke="#7f9a4c" stroke-width="1.1"/>
<circle cx="664.3" cy="641.3" r="2.2" stroke="#a9c67c" stroke-width="0.9" fill="none"/>
<circle cx="664.3" cy="758" r="2.2" stroke="#a9c67c" stroke-width="0.9" fill="none"/>
<rect x="346.4" y="391.2" width="14.4" height="112" stroke="#a9c67c" stroke-width="0.9" fill="none"/>
<path d="M350 391.2L350 503" stroke="#a9c67c" stroke-width="0.7"/>
<path d="M356 391.2L356 503" stroke="#a9c67c" stroke-width="0.7"/>
<rect x="360.8" y="404.4" width="112" height="6" stroke="#a9c67c" stroke-width="0.9" fill="none"/>
<path d="M386 404.4L386 410.4" stroke="#a9c67c" stroke-width="0.8"/>
<path d="M412 404.4L412 410.4" stroke="#a9c67c" stroke-width="0.8"/>
<path d="M438 404.4L438 410.4" stroke="#a9c67c" stroke-width="0.8"/>
<path d="M462 404.4L462 410.4" stroke="#a9c67c" stroke-width="0.8"/>
<rect x="466" y="406" width="6" height="6" stroke="#a9c67c" stroke-width="0.8" fill="none"/>
<path d="M470 410L470 492" stroke="#a9c67c" stroke-width="1"/>
<path d="M472.2 410L472.2 492" stroke="#a9c67c" stroke-width="1"/>
<rect x="467.6" y="492" width="5.7" height="10.8" stroke="#a9c67c" stroke-width="0.8" fill="none"/>
<path d="M472 414.600H505.500V454.200H472" stroke="#a9c67c" stroke-width="0.8" fill="none" stroke-dasharray="5 3"/>
<path d="M476 416Q503 420 505 452" stroke="#a9c67c" stroke-width="0.7" fill="none" stroke-dasharray="4 3"/>
<path d="M364 502Q368 470 396 466" stroke="#a9c67c" stroke-width="0.7" fill="none" stroke-dasharray="4 3"/>
<path d="M393.400 463V503" stroke="#a9c67c" stroke-width="0.7" fill="none" stroke-dasharray="4 3"/>
<g transform="translate(340.3,386.5) rotate(215)" stroke="#4c6b22" stroke-width="1.200" fill="none"><rect x="-7" y="-3.200" width="13" height="6.400"/><path d="M6 0L11.500 -3V3Z"/></g>
<text x="331.6" y="374.2" font-size="9.6" fill="#4f6d25">ERP-06-09</text>
<g transform="translate(368,420) rotate(65)" stroke="#4c6b22" stroke-width="1.200" fill="none"><rect x="-7" y="-3.200" width="13" height="6.400"/><path d="M6 0L11.500 -3V3Z"/></g>
<text x="387.6" y="420.4" font-size="9.6" fill="#4f6d25">ACH-2</text>
<text x="387.6" y="431.9" font-size="9.6" fill="#4f6d25">600V/3PH</text>
<text x="389" y="440.8" font-size="9.6" fill="#4f6d25">EPP-05-52, 54, 56</text>
<circle cx="449.4" cy="424.7" r="6.6" stroke="#4c6b22" stroke-width="1" fill="#4c6b22"/>
<path d="M449.4 420.6L445.8 427.5L453 427.5Z" stroke="none" stroke-width="0" fill="#d6f5a3"/>
<rect x="456" y="420.2" width="9" height="8.5" stroke="#4c6b22" stroke-width="1.2" fill="none"/>
<path d="M465 424.4H468V421.2" stroke="#4c6b22" stroke-width="1" fill="none"/>
<rect x="473.3" y="427.1" width="12.9" height="12.2" stroke="#4c6b22" stroke-width="1.3" fill="none"/>
<text x="479.8" y="435.9" font-size="7.6" fill="#4c6b22" text-anchor="middle">C1</text>
<text x="356.8" y="454.5" font-size="9.2" fill="#9ab76c">VESTIBULE</text>
<rect x="372.8" y="459.1" width="20.6" height="8.3" stroke="#a9c67c" stroke-width="0.9" fill="none"/>
<text x="383.1" y="466.1" font-size="9.2" fill="#9ab76c" text-anchor="middle">157</text>
<text x="437.9" y="463.6" font-size="9.6" fill="#4f6d25">SD</text>
<text x="404.1" y="474" font-size="9.6" fill="#4f6d25">ERP-06-04</text>
<circle cx="462.6" cy="469.8" r="6.4" stroke="#4c6b22" stroke-width="1.2" fill="none"/>
<path d="M462.6 463.4L457 473L468.2 473Z" stroke="#4c6b22" stroke-width="1" fill="none"/>
<rect x="458.6" y="454.4" width="8.2" height="9" stroke="#4c6b22" stroke-width="1.2" fill="none"/>
<path d="M462.6 454.4V451.9H465.6" stroke="#4c6b22" stroke-width="1" fill="none"/>
<rect x="372.3" y="494.6" width="12.5" height="12.3" stroke="#4c6b22" stroke-width="1.3" fill="none"/>
<text x="378.6" y="503.4" font-size="7.6" fill="#4c6b22" text-anchor="middle">C2</text>
<text x="390.9" y="508.6" font-size="9.6" fill="#4f6d25">SD</text>
<circle cx="336.9" cy="514.3" r="6.6" stroke="#4c6b22" stroke-width="1.2" fill="none"/>
<path d="M336.9 507.7L331.2 517.6L342.6 517.6Z" stroke="#4c6b22" stroke-width="1" fill="none"/>
<rect x="356.3" y="511.4" width="14" height="8.2" stroke="#4c6b22" stroke-width="1.3" fill="none"/>
<text x="363.3" y="518.2" font-size="7.6" fill="#4c6b22" text-anchor="middle">CR</text>
<circle cx="384" cy="516" r="6.4" stroke="#4c6b22" stroke-width="1.2" fill="none"/>
<path d="M384 509.6L378.4 519.2L389.6 519.2Z" stroke="#4c6b22" stroke-width="1" fill="none"/>
<rect x="390.4" y="511.5" width="9" height="8.5" stroke="#4c6b22" stroke-width="1.2" fill="none"/>
<path d="M399.4 515.8H402.4V512.5" stroke="#4c6b22" stroke-width="1" fill="none"/>
<text x="420.6" y="518.5" font-size="9.6" fill="#4f6d25">RP-02-28</text>
<text x="421.4" y="526.7" font-size="8.5" fill="#9ab76c">VF</text>
<text x="322.5" y="531.6" font-size="9.6" fill="#4f6d25">02-30</text>
<text x="355.5" y="531.6" font-size="9.6" fill="#4f6d25">ERP-06-04</text>
<rect x="346.4" y="507.7" width="14.4" height="38" stroke="#a9c67c" stroke-width="0.8" fill="none"/>
<circle cx="496.7" cy="513.8" r="6.4" stroke="#4c6b22" stroke-width="1.2" fill="none"/>
<path d="M496.7 507.4L491.1 517L502.3 517Z" stroke="#4c6b22" stroke-width="1" fill="none"/>
<text x="504.7" y="516.8" font-size="9.6" fill="#4f6d25">MB</text>
<text x="505.1" y="526.7" font-size="9.6" fill="#4f6d25">RP-02-30</text>
<rect x="568.4" y="506.6" width="13.2" height="16.8" stroke="#d6b06e" stroke-width="0.7" fill="#d69a62" fill-opacity=".46"/>
<circle cx="575" cy="515" r="4" stroke="#6f7a30" stroke-width="1" fill="none"/>
<path d="M574 511V519M576 511V519" stroke="#6f7a30" stroke-width="0.7" fill="none"/>
<rect x="554.1" y="518.5" width="45" height="13.5" stroke="#e2468c" stroke-width="1" fill="#e8608a" fill-opacity=".4"/>
<text x="556" y="529.2" font-size="9.6" fill="#8a6a45">RP-02-14</text>
<text x="641.5" y="516.8" font-size="9.6" fill="#4f6d25">MB</text>
<circle cx="664" cy="513.8" r="6.4" stroke="#4c6b22" stroke-width="1.2" fill="none"/>
<path d="M664 507.4L658.4 517L669.6 517Z" stroke="#4c6b22" stroke-width="1" fill="none"/>
<text x="614.6" y="526.2" font-size="9.6" fill="#4f6d25">RP-02-30</text>
<text x="449" y="538" font-size="9.5" fill="#9ab76c">FIDS</text>
<rect x="448.3" y="533.3" width="55.5" height="15.1" stroke="#e2468c" stroke-width="1" fill="#e8608a" fill-opacity=".4"/>
<text x="452" y="544.8" font-size="9.6" fill="#8a6a45">ERP-06-03</text>
<rect x="398.3" y="545.6" width="15.2" height="16" stroke="#6b6a2a" stroke-width="1.6" fill="#d69a62" fill-opacity=".46"/>
<circle cx="405.9" cy="553.6" r="4" stroke="#6f7a30" stroke-width="1" fill="none"/>
<path d="M404.9 549.6V557.6M406.9 549.6V557.6" stroke="#6f7a30" stroke-width="0.7" fill="none"/>
<rect x="413.5" y="545.6" width="15.4" height="16" stroke="#6b6a2a" stroke-width="1.6" fill="#d69a62" fill-opacity=".46"/>
<circle cx="421.2" cy="553.6" r="4" stroke="#6f7a30" stroke-width="1" fill="none"/>
<path d="M420.2 549.6V557.6M422.2 549.6V557.6" stroke="#6f7a30" stroke-width="0.7" fill="none"/>
<rect x="428.9" y="545.6" width="14.6" height="16" stroke="#4c6b22" stroke-width="1.4" fill="none"/>
<path d="M436.2 558.3L432 549.5L440.4 549.5Z" stroke="none" stroke-width="0" fill="#4c6b22"/>
<rect x="448.6" y="544.8" width="13.2" height="13.2" stroke="#d6b06e" stroke-width="0.7" fill="#d69a62" fill-opacity=".46"/>
<circle cx="455.2" cy="551.4" r="4" stroke="#6f7a30" stroke-width="1" fill="none"/>
<path d="M454.2 547.4V555.4M456.2 547.4V555.4" stroke="#6f7a30" stroke-width="0.7" fill="none"/>
<path d="M467.2 547.5L462.8 556.9L471.6 556.9Z" stroke="none" stroke-width="0" fill="#4c6b22"/>
<path d="M461 560L471 545" stroke="#4c6b22" stroke-width="1"/>
<rect x="368.3" y="554.7" width="42.4" height="20.9" stroke="#e2468c" stroke-width="1" fill="#e8608a" fill-opacity=".4"/>
<text x="369" y="573.2" font-size="9.6" fill="#8a6a45">RP-02-29</text>
<rect x="414.8" y="558.3" width="51.9" height="16.5" stroke="#e2468c" stroke-width="1" fill="#e8608a" fill-opacity=".4"/>
<text x="416.8" y="573.2" font-size="9.6" fill="#8a6a45">ERP-06-03</text>
<text x="524.4" y="551.6" font-size="14.4" fill="#9ab76c">CHILDREN</text>
<text x="524.4" y="569.7" font-size="14.4" fill="#9ab76c">PLAY AREA</text>
<rect x="510.4" y="527.5" width="129.4" height="61" stroke="#a9c67c" stroke-width="0.8" fill="none" stroke-dasharray="6 4"/>
<rect x="681.3" y="391.2" width="14.4" height="112" stroke="#a9c67c" stroke-width="0.9" fill="none"/>
<path d="M685 391.2L685 503" stroke="#a9c67c" stroke-width="0.7"/>
<path d="M691 391.2L691 503" stroke="#a9c67c" stroke-width="0.7"/>
<rect x="695.7" y="404.4" width="112" height="6" stroke="#a9c67c" stroke-width="0.9" fill="none"/>
<path d="M721 404.4L721 410.4" stroke="#a9c67c" stroke-width="0.8"/>
<path d="M747 404.4L747 410.4" stroke="#a9c67c" stroke-width="0.8"/>
<path d="M773 404.4L773 410.4" stroke="#a9c67c" stroke-width="0.8"/>
<path d="M797 404.4L797 410.4" stroke="#a9c67c" stroke-width="0.8"/>
<rect x="801" y="406" width="6" height="6" stroke="#a9c67c" stroke-width="0.8" fill="none"/>
<path d="M805 410L805 492" stroke="#a9c67c" stroke-width="1"/>
<path d="M807.2 410L807.2 492" stroke="#a9c67c" stroke-width="1"/>
<rect x="802.6" y="492" width="5.7" height="10.8" stroke="#a9c67c" stroke-width="0.8" fill="none"/>
<path d="M807 414.600H840.500V454.200H807" stroke="#a9c67c" stroke-width="0.8" fill="none" stroke-dasharray="5 3"/>
<path d="M811 416Q838 420 840 452" stroke="#a9c67c" stroke-width="0.7" fill="none" stroke-dasharray="4 3"/>
<path d="M699 502Q703 470 731 466" stroke="#a9c67c" stroke-width="0.7" fill="none" stroke-dasharray="4 3"/>
<path d="M728.400 463V503" stroke="#a9c67c" stroke-width="0.7" fill="none" stroke-dasharray="4 3"/>
<path d="M585 418.5L690 418.5" stroke="#a9c67c" stroke-width="0.6" stroke-dasharray="1.500 1.500"/>
<text x="697.7" y="383.7" font-size="9.6" fill="#4f6d25">ERP-08-06</text>
<text x="607.6" y="407.7" font-size="9.6" fill="#4f6d25">ERP-08-06</text>
<g stroke="#4c6b22" stroke-width="1.200" fill="none"><rect x="684.500" y="379" width="6.400" height="12.500"/><path d="M687.700 379L684.700 372.500H690.700Z"/></g>
<g transform="translate(669.5,397) rotate(153)" stroke="#4c6b22" stroke-width="1.200" fill="none"><rect x="-7" y="-3.200" width="13" height="6.400"/><path d="M6 0L11.500 -3V3Z"/></g>
<g transform="translate(702.5,420) rotate(40)" stroke="#4c6b22" stroke-width="1.200" fill="none"><rect x="-7" y="-3.200" width="13" height="6.400"/><path d="M6 0L11.500 -3V3Z"/></g>
<text x="734.8" y="418.9" font-size="9.6" fill="#4f6d25">ACH-2</text>
<text x="734.8" y="430" font-size="9.6" fill="#4f6d25">600V/3PH</text>
<text x="717.8" y="441" font-size="9.6" fill="#4f6d25">EPP-05-55, 57, 59</text>
<circle cx="786" cy="421" r="6.6" stroke="#4c6b22" stroke-width="1" fill="#4c6b22"/>
<path d="M786 416.9L782.4 423.8L789.6 423.8Z" stroke="none" stroke-width="0" fill="#d6f5a3"/>
<rect x="792.6" y="416.5" width="9" height="8.5" stroke="#4c6b22" stroke-width="1.2" fill="none"/>
<path d="M801.6 420.8H804.6V417.5" stroke="#4c6b22" stroke-width="1" fill="none"/>
<rect x="804.8" y="431.4" width="12.7" height="12.6" stroke="#4c6b22" stroke-width="1.3" fill="none"/>
<text transform="translate(808.5,437.7) rotate(90)" font-size="7.6" fill="#4c6b22" text-anchor="middle">C1</text>
<text x="693.5" y="451.5" font-size="9.2" fill="#9ab76c">VESTIBULE</text>
<rect x="706" y="456" width="21.5" height="8.5" stroke="#a9c67c" stroke-width="0.9" fill="none"/>
<text x="716.8" y="463.2" font-size="9.2" fill="#9ab76c" text-anchor="middle">156</text>
<text x="771.3" y="460.7" font-size="9.6" fill="#4f6d25">SD</text>
<text x="739.2" y="470.3" font-size="9.6" fill="#4f6d25">ERP-08-01</text>
<circle cx="796.3" cy="462" r="6.4" stroke="#4c6b22" stroke-width="1.2" fill="none"/>
<path d="M796.3 455.6L790.7 465.2L801.9 465.2Z" stroke="#4c6b22" stroke-width="1" fill="none"/>
<rect x="792.3" y="446.6" width="8.2" height="9" stroke="#4c6b22" stroke-width="1.2" fill="none"/>
<path d="M796.3 446.6V444.1H799.3" stroke="#4c6b22" stroke-width="1" fill="none"/>
<rect x="714.6" y="493.6" width="12.6" height="12.4" stroke="#4c6b22" stroke-width="1.3" fill="none"/>
<text x="720.9" y="502.5" font-size="7.6" fill="#4c6b22" text-anchor="middle">C2</text>
<rect x="686.3" y="511.4" width="14" height="8.2" stroke="#4c6b22" stroke-width="1.3" fill="none"/>
<text x="693.3" y="518.2" font-size="7.6" fill="#4c6b22" text-anchor="middle">CR</text>
<circle cx="708" cy="513.5" r="6.4" stroke="#4c6b22" stroke-width="1.2" fill="none"/>
<path d="M708 507.1L702.4 516.7L713.6 516.7Z" stroke="#4c6b22" stroke-width="1" fill="none"/>
<rect x="714.4" y="509" width="9" height="8.5" stroke="#4c6b22" stroke-width="1.2" fill="none"/>
<path d="M723.4 513.2H726.4V510" stroke="#4c6b22" stroke-width="1" fill="none"/>
<text x="697.5" y="528.5" font-size="9.6" fill="#4f6d25">SD</text>
<text x="697.5" y="537.8" font-size="9.6" fill="#4f6d25">ERP-08-01</text>
<text x="755.5" y="518" font-size="9.6" fill="#4f6d25">RP-04-02</text>
<text x="756" y="526.5" font-size="8.5" fill="#9ab76c">VF</text>
<circle cx="831" cy="513.8" r="6.4" stroke="#4c6b22" stroke-width="1.2" fill="none"/>
<path d="M831 507.4L825.4 517L836.6 517Z" stroke="#4c6b22" stroke-width="1" fill="none"/>
<text x="839" y="516.8" font-size="9.6" fill="#4f6d25">MB</text>
<text x="839" y="526.7" font-size="9.6" fill="#4f6d25">RP-04-01</text>
<rect x="782.3" y="533.8" width="55.6" height="14.9" stroke="#e2468c" stroke-width="1" fill="#e8608a" fill-opacity=".4"/>
<text x="786" y="544.8" font-size="9.6" fill="#8a6a45">ERP-08-03</text>
<rect x="734.8" y="545" width="15.2" height="16" stroke="#6b6a2a" stroke-width="1.6" fill="#d69a62" fill-opacity=".46"/>
<circle cx="742.4" cy="553" r="4" stroke="#6f7a30" stroke-width="1" fill="none"/>
<path d="M741.4 549V557M743.4 549V557" stroke="#6f7a30" stroke-width="0.7" fill="none"/>
<rect x="750" y="545" width="15.4" height="16" stroke="#6b6a2a" stroke-width="1.6" fill="#d69a62" fill-opacity=".46"/>
<circle cx="757.7" cy="553" r="4" stroke="#6f7a30" stroke-width="1" fill="none"/>
<path d="M756.7 549V557M758.7 549V557" stroke="#6f7a30" stroke-width="0.7" fill="none"/>
<rect x="765.4" y="545" width="14.6" height="16" stroke="#4c6b22" stroke-width="1.4" fill="none"/>
<path d="M772.7 557.7L768.5 548.9L776.9 548.9Z" stroke="none" stroke-width="0" fill="#4c6b22"/>
<rect x="783" y="544.8" width="14" height="13.2" stroke="#d6b06e" stroke-width="0.7" fill="#d69a62" fill-opacity=".46"/>
<circle cx="790" cy="551.4" r="4" stroke="#6f7a30" stroke-width="1" fill="none"/>
<path d="M789 547.4V555.4M791 547.4V555.4" stroke="#6f7a30" stroke-width="0.7" fill="none"/>
<path d="M801.4 547.5L797 556.9L805.8 556.9Z" stroke="none" stroke-width="0" fill="#4c6b22"/>
<path d="M795 560L805 545" stroke="#4c6b22" stroke-width="1"/>
<rect x="703.4" y="557.8" width="45.2" height="15.6" stroke="#e2468c" stroke-width="1" fill="#e8608a" fill-opacity=".4"/>
<text x="706.8" y="571.9" font-size="9.6" fill="#8a6a45">RP-04-04</text>
<rect x="752.5" y="558.8" width="50.2" height="14.6" stroke="#e2468c" stroke-width="1" fill="#e8608a" fill-opacity=".4"/>
<text x="753.8" y="571.9" font-size="9.6" fill="#8a6a45">ERP-08-03</text>
<g stroke="#4c6b22" stroke-width="1.200" fill="none"><rect x="994.800" y="469.300" width="6.400" height="12.300"/><path d="M998 469.300L995 463H1001Z"/></g>
<circle cx="998" cy="514.2" r="6.4" stroke="#4c6b22" stroke-width="1.2" fill="none"/>
<path d="M998 507.8L992.4 517.4L1003.6 517.4Z" stroke="#4c6b22" stroke-width="1" fill="none"/>
<text x="998" y="529.9" font-size="9.6" fill="#4f6d25" text-anchor="middle">MB</text>
<text x="964.1" y="539.8" font-size="9.6" fill="#4f6d25">RP-04-01</text>
<rect x="1009.8" y="503.8" width="13" height="14.3" stroke="#d6b06e" stroke-width="0.7" fill="#d69a62" fill-opacity=".46"/>
<circle cx="1016.3" cy="511" r="4" stroke="#6f7a30" stroke-width="1" fill="none"/>
<path d="M1015.3 507V515M1017.3 507V515" stroke="#6f7a30" stroke-width="0.7" fill="none"/>
<rect x="1009.2" y="511.6" width="45.7" height="16.2" stroke="#e2468c" stroke-width="1" fill="#e8608a" fill-opacity=".4"/>
<text x="1011.9" y="526.5" font-size="9.6" fill="#8a6a45">RP-04-05</text>
<text x="1041.9" y="567.9" font-size="9.2" fill="#9ab76c" text-anchor="middle">SECURE</text>
<text x="1041.9" y="579.2" font-size="9.2" fill="#9ab76c" text-anchor="middle">HOLD ROOM</text>
<rect x="1031" y="581.8" width="21" height="8.6" stroke="#a9c67c" stroke-width="0.9" fill="none"/>
<text x="1041.5" y="589.1" font-size="9.2" fill="#9ab76c" text-anchor="middle">150</text>
<text x="1138.5" y="386.3" font-size="9.6" fill="#4f6d25">ERP-08-06</text>
<g transform="translate(1197.2,394.1) rotate(-50)" stroke="#4c6b22" stroke-width="1.200" fill="none"><rect x="-7" y="-3.200" width="13" height="6.400"/><path d="M6 0L11.500 -3V3Z"/></g>
<text x="1206.4" y="392.3" font-size="9.6" fill="#4f6d25">ACH-2</text>
<text x="1206.4" y="403.8" font-size="9.6" fill="#4f6d25">600V/3PH</text>
<text x="1205.8" y="413.7" font-size="9.6" fill="#4f6d25">EPP-13-38, 40, 42</text>
<rect x="1189.4" y="404.5" width="113" height="6" stroke="#a9c67c" stroke-width="0.9" fill="none"/>
<rect x="1301.7" y="391.5" width="13.8" height="111" stroke="#a9c67c" stroke-width="0.9" fill="none"/>
<path d="M1305 391.5L1305 502" stroke="#a9c67c" stroke-width="0.7"/>
<path d="M1311 391.5L1311 502" stroke="#a9c67c" stroke-width="0.7"/>
<rect x="1190.5" y="406" width="6" height="6" stroke="#a9c67c" stroke-width="0.8" fill="none"/>
<path d="M1190.7 410L1190.7 492" stroke="#a9c67c" stroke-width="1"/>
<path d="M1192.9 410L1192.9 492" stroke="#a9c67c" stroke-width="1"/>
<rect x="1189" y="492" width="5.7" height="10.8" stroke="#a9c67c" stroke-width="0.8" fill="none"/>
<path d="M1190 418.900H1156.800V454.200H1190" stroke="#a9c67c" stroke-width="0.8" fill="none" stroke-dasharray="5 3"/>
<path d="M1186 420Q1159 424 1157.500 452" stroke="#a9c67c" stroke-width="0.7" fill="none" stroke-dasharray="4 3"/>
<rect x="1156.8" y="418.9" width="30" height="66" stroke="#a9c67c" stroke-width="0.7" fill="none"/>
<path d="M1262 465H1298M1262 465V502M1268 466Q1296 472 1298 500" stroke="#a9c67c" stroke-width="0.7" fill="none" stroke-dasharray="4 3"/>
<circle cx="1215.5" cy="424.1" r="6.6" stroke="#4c6b22" stroke-width="1" fill="#4c6b22"/>
<path d="M1215.5 420L1211.9 426.9L1219.1 426.9Z" stroke="none" stroke-width="0" fill="#d6f5a3"/>
<rect x="1222.1" y="419.6" width="9" height="8.5" stroke="#4c6b22" stroke-width="1.2" fill="none"/>
<path d="M1231.1 423.9H1234.1V420.6" stroke="#4c6b22" stroke-width="1" fill="none"/>
<g transform="translate(1295.1,421.5) rotate(120)" stroke="#4c6b22" stroke-width="1.200" fill="none"><rect x="-7" y="-3.200" width="13" height="6.400"/><path d="M6 0L11.500 -3V3Z"/></g>
<rect x="1177.7" y="435.1" width="13" height="12.5" stroke="#4c6b22" stroke-width="1.3" fill="none"/>
<text transform="translate(1181.6,441.4) rotate(90)" font-size="7.6" fill="#4c6b22" text-anchor="middle">C1</text>
<text x="1235.1" y="443.7" font-size="9.2" fill="#9ab76c">VESTIBULE</text>
<rect x="1247.6" y="446.8" width="20.9" height="9.2" stroke="#a9c67c" stroke-width="0.9" fill="none"/>
<text x="1258" y="454.7" font-size="9.2" fill="#9ab76c" text-anchor="middle">155</text>
<circle cx="1206.4" cy="452.8" r="6.4" stroke="#4c6b22" stroke-width="1.2" fill="none"/>
<path d="M1206.4 446.4L1200.8 456L1212 456Z" stroke="#4c6b22" stroke-width="1" fill="none"/>
<rect x="1212.8" y="448.3" width="9" height="8.5" stroke="#4c6b22" stroke-width="1.2" fill="none"/>
<path d="M1221.8 452.6H1224.8V449.3" stroke="#4c6b22" stroke-width="1" fill="none"/>
<text x="1201.7" y="467.7" font-size="9.6" fill="#4f6d25">SD</text>
<text x="1201.7" y="477.1" font-size="9.6" fill="#4f6d25">ERP-08-02</text>
<circle cx="1165.1" cy="512.9" r="6.4" stroke="#4c6b22" stroke-width="1.2" fill="none"/>
<path d="M1165.1 506.5L1159.5 516.1L1170.7 516.1Z" stroke="#4c6b22" stroke-width="1" fill="none"/>
<text x="1143.7" y="525.2" font-size="9.6" fill="#4f6d25">MB</text>
<text x="1117.6" y="535.1" font-size="9.6" fill="#4f6d25">RP-04-01</text>
<text x="1185" y="538" font-size="9.5" fill="#9ab76c">FIDS</text>
<rect x="1156.8" y="534.6" width="60" height="14.1" stroke="#e2468c" stroke-width="1" fill="#e8608a" fill-opacity=".4"/>
<text x="1162.8" y="544.8" font-size="9.6" fill="#8a6a45">ERP-08-04</text>
<text x="1205.1" y="516.8" font-size="9.6" fill="#4f6d25">RP-04-03</text>
<rect x="1248.1" y="504.5" width="14.4" height="7.9" stroke="#4c6b22" stroke-width="1.3" fill="none"/>
<text x="1255.3" y="511.1" font-size="7.6" fill="#4c6b22" text-anchor="middle">CR</text>
<circle cx="1276.9" cy="511.6" r="6.4" stroke="#4c6b22" stroke-width="1.2" fill="none"/>
<path d="M1276.9 505.2L1271.3 514.8L1282.5 514.8Z" stroke="#4c6b22" stroke-width="1" fill="none"/>
<rect x="1283.3" y="507.1" width="9" height="8.5" stroke="#4c6b22" stroke-width="1.2" fill="none"/>
<path d="M1292.3 511.4H1295.3V508.1" stroke="#4c6b22" stroke-width="1" fill="none"/>
<rect x="1298.3" y="505" width="13" height="12.6" stroke="#4c6b22" stroke-width="1.3" fill="none"/>
<text x="1304.8" y="514" font-size="7.6" fill="#4c6b22" text-anchor="middle">C2</text>
<text x="1233.8" y="527" font-size="8.5" fill="#9ab76c">VF</text>
<text x="1271.6" y="527.3" font-size="9.6" fill="#4f6d25">SD</text>
<text x="1269.6" y="536.4" font-size="9.6" fill="#4f6d25">ERP-08-02</text>
<circle cx="1234.6" cy="534.6" r="6.4" stroke="#4c6b22" stroke-width="1.2" fill="none"/>
<path d="M1234.6 528.2L1229 537.8L1240.2 537.8Z" stroke="#4c6b22" stroke-width="1" fill="none"/>
<rect x="1241" y="530.1" width="9" height="8.5" stroke="#4c6b22" stroke-width="1.2" fill="none"/>
<path d="M1250 534.4H1253V531.1" stroke="#4c6b22" stroke-width="1" fill="none"/>
<rect x="1220" y="545" width="15.2" height="16" stroke="#6b6a2a" stroke-width="1.6" fill="#d69a62" fill-opacity=".46"/>
<circle cx="1227.6" cy="553" r="4" stroke="#6f7a30" stroke-width="1" fill="none"/>
<path d="M1226.6 549V557M1228.6 549V557" stroke="#6f7a30" stroke-width="0.7" fill="none"/>
<rect x="1235.2" y="545" width="15.4" height="16" stroke="#6b6a2a" stroke-width="1.6" fill="#d69a62" fill-opacity=".46"/>
<circle cx="1242.9" cy="553" r="4" stroke="#6f7a30" stroke-width="1" fill="none"/>
<path d="M1241.9 549V557M1243.9 549V557" stroke="#6f7a30" stroke-width="0.7" fill="none"/>
<rect x="1250.6" y="545" width="14.6" height="16" stroke="#4c6b22" stroke-width="1.4" fill="none"/>
<path d="M1257.9 557.7L1253.7 548.9L1262.1 548.9Z" stroke="none" stroke-width="0" fill="#4c6b22"/>
<rect x="1184.7" y="544.2" width="15.1" height="13.8" stroke="#d6b06e" stroke-width="0.7" fill="#d69a62" fill-opacity=".46"/>
<circle cx="1192.2" cy="551.1" r="4" stroke="#6f7a30" stroke-width="1" fill="none"/>
<path d="M1191.2 547.1V555.1M1193.2 547.1V555.1" stroke="#6f7a30" stroke-width="0.7" fill="none"/>
<path d="M1203.8 547.5L1199.4 556.9L1208.2 556.9Z" stroke="none" stroke-width="0" fill="#4c6b22"/>
<path d="M1197 560L1207 545" stroke="#4c6b22" stroke-width="1"/>
<text x="1192" y="571.3" font-size="9.6" fill="#4f6d25">RP-04-04</text>
<text x="1236.9" y="571.3" font-size="9.6" fill="#4f6d25">ERP-08-04</text>
<text x="1342.1" y="302.7" font-size="9.6" fill="#4f6d25" text-anchor="middle">DATA DROP</text>
<text x="1342.1" y="315" font-size="9.6" fill="#4f6d25" text-anchor="middle">DELINEATION LINE</text>
<text x="1331.7" y="347.9" font-size="9.6" fill="#4f6d25" text-anchor="end">TERMINATE IN</text>
<text x="1331.7" y="359.4" font-size="9.6" fill="#4f6d25" text-anchor="end">CENTRAL IT ROOM 147</text>
<path d="M1215 362.8L1331 362.8" stroke="#4c6b22" stroke-width="1.1"/>
<path d="M1208.500 362.800L1218 360.600V365Z" stroke="none" stroke-width="0" fill="#4c6b22"/>
<text x="1353.1" y="347.9" font-size="9.6" fill="#4f6d25">TERMINATE IN</text>
<text x="1353.1" y="359.4" font-size="9.6" fill="#4f6d25">ADMIN IT ROOM 116</text>
<path d="M1353 362.8L1470 362.8" stroke="#4c6b22" stroke-width="1.1"/>
<path d="M1476.600 362.800L1467 360.600V365Z" stroke="none" stroke-width="0" fill="#4c6b22"/>
<circle cx="1362.5" cy="518.9" r="6.4" stroke="#4c6b22" stroke-width="1.2" fill="none"/>
<path d="M1362.5 512.5L1356.9 522.1L1368.1 522.1Z" stroke="#4c6b22" stroke-width="1" fill="none"/>
<path d="M1362.500 525.500Q1372 536 1362 541" stroke="#4c6b22" stroke-width="1" fill="none"/>
<rect x="1351" y="537" width="9" height="8.5" stroke="#4c6b22" stroke-width="1.2" fill="none"/>
<text x="1372.2" y="530.4" font-size="9.6" fill="#4f6d25">DC</text>
<text x="1372.2" y="539.5" font-size="9.6" fill="#4f6d25">ERP-14-01</text>
<rect x="1417.3" y="501.1" width="12.8" height="12.3" stroke="#4c6b22" stroke-width="1.3" fill="none"/>
<text x="1423.7" y="509.9" font-size="7.6" fill="#4c6b22" text-anchor="middle">D1</text>
<circle cx="1420" cy="523.3" r="6.6" stroke="#4c6b22" stroke-width="1" fill="#4c6b22"/>
<path d="M1420 519.2L1416.4 526.1L1423.6 526.1Z" stroke="none" stroke-width="0" fill="#d6f5a3"/>
<rect x="1426.6" y="518.8" width="9" height="8.5" stroke="#4c6b22" stroke-width="1.2" fill="none"/>
<path d="M1435.6 523H1438.6V519.8" stroke="#4c6b22" stroke-width="1" fill="none"/>
<text x="1442.1" y="526" font-size="9.6" fill="#4f6d25">ACH-3</text>
<text x="1442.1" y="538.2" font-size="9.6" fill="#4f6d25">600V/3PH</text>
<text x="1442.1" y="550" font-size="9.6" fill="#4f6d25">EPP-13-43, 4</text>
<rect x="1350" y="460.7" width="136.3" height="44" stroke="#a9c67c" stroke-width="0.8" fill="none"/>
<rect x="1353.9" y="465.1" width="128.4" height="5.5" stroke="#a9c67c" stroke-width="0.8" fill="none" stroke-dasharray="5 3"/>
<circle cx="1359.9" cy="489.4" r="2.6" stroke="#a9c67c" stroke-width="0.8" fill="none"/>
<circle cx="1476.6" cy="489.4" r="2.6" stroke="#a9c67c" stroke-width="0.8" fill="none"/>
<rect x="1346" y="511" width="6" height="6" stroke="#a9c67c" stroke-width="0.7" fill="none"/>
<rect x="1346" y="560" width="6" height="6" stroke="#a9c67c" stroke-width="0.7" fill="none"/>
<rect x="1346" y="590" width="6" height="6" stroke="#a9c67c" stroke-width="0.7" fill="none"/>
<path d="M1440 555Q1470 580 1500 570" stroke="#a9c67c" stroke-width="0.7" fill="none" stroke-dasharray="5 3"/>
<rect x="1295.9" y="561.4" width="43.6" height="16.5" stroke="#e2468c" stroke-width="1" fill="#e8608a" fill-opacity=".4"/>
<text x="1297.8" y="576.6" font-size="9.6" fill="#8a6a45">RP-04-05</text>
<rect x="1353.4" y="562.7" width="43.6" height="17" stroke="#e2468c" stroke-width="1" fill="#e8608a" fill-opacity=".4"/>
<text x="1355.7" y="576.6" font-size="9.6" fill="#8a6a45">RP-12-01</text>
<rect x="1324.4" y="555.7" width="14.3" height="11.7" stroke="#d6b06e" stroke-width="0.7" fill="#d69a62" fill-opacity=".46"/>
<circle cx="1333.6" cy="561.5" r="4" stroke="#6f7a30" stroke-width="1" fill="none"/>
<path d="M1327.6 560.5H1337.6M1327.6 562.5H1337.6" stroke="#6f7a30" stroke-width="0.7" fill="none"/>
<rect x="1343.4" y="555.7" width="17" height="11.7" stroke="#d6b06e" stroke-width="0.7" fill="#d69a62" fill-opacity=".46"/>
<circle cx="1353.9" cy="561.5" r="4" stroke="#6f7a30" stroke-width="1" fill="none"/>
<path d="M1347.9 560.5H1357.9M1347.9 562.5H1357.9" stroke="#6f7a30" stroke-width="0.7" fill="none"/>
<rect x="327" y="635.2" width="15.6" height="13.5" rx="1.200" stroke="#a9c67c" stroke-width=".800"/>
<path d="M334 648.7V651.5M335.6 648.7V651.5" stroke="#a9c67c" stroke-width="0.6" fill="none"/>
<rect x="327" y="651.5" width="15.6" height="13.5" rx="1.200" stroke="#a9c67c" stroke-width=".800"/>
<path d="M334 665V667.8M335.6 665V667.8" stroke="#a9c67c" stroke-width="0.6" fill="none"/>
<rect x="327" y="667.8" width="15.6" height="13.5" rx="1.200" stroke="#a9c67c" stroke-width=".800"/>
<rect x="331.5" y="633.2" width="6.6" height="2" stroke="#a9c67c" stroke-width="0.7" fill="none"/>
<rect x="331.5" y="681.3" width="6.6" height="2" stroke="#a9c67c" stroke-width="0.7" fill="none"/>
<rect x="327" y="684" width="15.6" height="13.5" rx="1.200" stroke="#a9c67c" stroke-width=".800"/>
<path d="M334 697.5V700.4M335.6 697.5V700.4" stroke="#a9c67c" stroke-width="0.6" fill="none"/>
<rect x="327" y="700.4" width="15.6" height="13.5" rx="1.200" stroke="#a9c67c" stroke-width=".800"/>
<path d="M334 713.9V716.8M335.6 713.9V716.8" stroke="#a9c67c" stroke-width="0.6" fill="none"/>
<rect x="327" y="716.8" width="15.6" height="13.5" rx="1.200" stroke="#a9c67c" stroke-width=".800"/>
<path d="M334 730.3V733.2M335.6 730.3V733.2" stroke="#a9c67c" stroke-width="0.6" fill="none"/>
<rect x="327" y="733.2" width="15.6" height="13.5" rx="1.200" stroke="#a9c67c" stroke-width=".800"/>
<rect x="331.5" y="682" width="6.6" height="2" stroke="#a9c67c" stroke-width="0.7" fill="none"/>
<rect x="331.5" y="746.7" width="6.6" height="2" stroke="#a9c67c" stroke-width="0.7" fill="none"/>
<rect x="406.3" y="635.2" width="15.6" height="13.5" rx="1.200" stroke="#a9c67c" stroke-width=".800"/>
<rect x="423" y="635.2" width="15.6" height="13.5" rx="1.200" stroke="#a9c67c" stroke-width=".800"/>
<path d="M413.3 648.7V651.5M414.9 648.7V651.5" stroke="#a9c67c" stroke-width="0.6" fill="none"/>
<path d="M430 648.7V651.5M431.6 648.7V651.5" stroke="#a9c67c" stroke-width="0.6" fill="none"/>
<rect x="406.3" y="651.5" width="15.6" height="13.5" rx="1.200" stroke="#a9c67c" stroke-width=".800"/>
<rect x="423" y="651.5" width="15.6" height="13.5" rx="1.200" stroke="#a9c67c" stroke-width=".800"/>
<path d="M413.3 665V667.8M414.9 665V667.8" stroke="#a9c67c" stroke-width="0.6" fill="none"/>
<path d="M430 665V667.8M431.6 665V667.8" stroke="#a9c67c" stroke-width="0.6" fill="none"/>
<rect x="406.3" y="667.8" width="15.6" height="13.5" rx="1.200" stroke="#a9c67c" stroke-width=".800"/>
<rect x="423" y="667.8" width="15.6" height="13.5" rx="1.200" stroke="#a9c67c" stroke-width=".800"/>
<rect x="410.8" y="633.2" width="6.6" height="2" stroke="#a9c67c" stroke-width="0.7" fill="none"/>
<rect x="410.8" y="681.3" width="6.6" height="2" stroke="#a9c67c" stroke-width="0.7" fill="none"/>
<rect x="427.5" y="633.2" width="6.6" height="2" stroke="#a9c67c" stroke-width="0.7" fill="none"/>
<rect x="427.5" y="681.3" width="6.6" height="2" stroke="#a9c67c" stroke-width="0.7" fill="none"/>
<path d="M422.4 635.2L422.4 681.3" stroke="#a9c67c" stroke-width="1.3"/>
<rect x="406.3" y="700.5" width="15.6" height="13.5" rx="1.200" stroke="#a9c67c" stroke-width=".800"/>
<rect x="423" y="700.5" width="15.6" height="13.5" rx="1.200" stroke="#a9c67c" stroke-width=".800"/>
<path d="M413.3 714V716.9M414.9 714V716.9" stroke="#a9c67c" stroke-width="0.6" fill="none"/>
<path d="M430 714V716.9M431.6 714V716.9" stroke="#a9c67c" stroke-width="0.6" fill="none"/>
<rect x="406.3" y="716.9" width="15.6" height="13.5" rx="1.200" stroke="#a9c67c" stroke-width=".800"/>
<rect x="423" y="716.9" width="15.6" height="13.5" rx="1.200" stroke="#a9c67c" stroke-width=".800"/>
<path d="M413.3 730.4V733.3M414.9 730.4V733.3" stroke="#a9c67c" stroke-width="0.6" fill="none"/>
<path d="M430 730.4V733.3M431.6 730.4V733.3" stroke="#a9c67c" stroke-width="0.6" fill="none"/>
<rect x="406.3" y="733.3" width="15.6" height="13.5" rx="1.200" stroke="#a9c67c" stroke-width=".800"/>
<rect x="423" y="733.3" width="15.6" height="13.5" rx="1.200" stroke="#a9c67c" stroke-width=".800"/>
<path d="M413.3 746.8V749.7M414.9 746.8V749.7" stroke="#a9c67c" stroke-width="0.6" fill="none"/>
<path d="M430 746.8V749.7M431.6 746.8V749.7" stroke="#a9c67c" stroke-width="0.6" fill="none"/>
<rect x="406.3" y="749.7" width="15.6" height="13.5" rx="1.200" stroke="#a9c67c" stroke-width=".800"/>
<rect x="423" y="749.7" width="15.6" height="13.5" rx="1.200" stroke="#a9c67c" stroke-width=".800"/>
<path d="M413.3 763.2V766.1M414.9 763.2V766.1" stroke="#a9c67c" stroke-width="0.6" fill="none"/>
<path d="M430 763.2V766.1M431.6 763.2V766.1" stroke="#a9c67c" stroke-width="0.6" fill="none"/>
<rect x="406.3" y="766.1" width="15.6" height="13.5" rx="1.200" stroke="#a9c67c" stroke-width=".800"/>
<rect x="423" y="766.1" width="15.6" height="13.5" rx="1.200" stroke="#a9c67c" stroke-width=".800"/>
<rect x="410.8" y="698.5" width="6.6" height="2" stroke="#a9c67c" stroke-width="0.7" fill="none"/>
<rect x="410.8" y="779.6" width="6.6" height="2" stroke="#a9c67c" stroke-width="0.7" fill="none"/>
<rect x="427.5" y="698.5" width="6.6" height="2" stroke="#a9c67c" stroke-width="0.7" fill="none"/>
<rect x="427.5" y="779.6" width="6.6" height="2" stroke="#a9c67c" stroke-width="0.7" fill="none"/>
<path d="M422.4 700.5L422.4 779.6" stroke="#a9c67c" stroke-width="1.3"/>
<rect x="491.4" y="635.2" width="15.6" height="13.5" rx="1.200" stroke="#a9c67c" stroke-width=".800"/>
<rect x="508.1" y="635.2" width="15.6" height="13.5" rx="1.200" stroke="#a9c67c" stroke-width=".800"/>
<path d="M498.4 648.7V651.5M500 648.7V651.5" stroke="#a9c67c" stroke-width="0.6" fill="none"/>
<path d="M515.1 648.7V651.5M516.7 648.7V651.5" stroke="#a9c67c" stroke-width="0.6" fill="none"/>
<rect x="491.4" y="651.5" width="15.6" height="13.5" rx="1.200" stroke="#a9c67c" stroke-width=".800"/>
<rect x="508.1" y="651.5" width="15.6" height="13.5" rx="1.200" stroke="#a9c67c" stroke-width=".800"/>
<path d="M498.4 665V667.8M500 665V667.8" stroke="#a9c67c" stroke-width="0.6" fill="none"/>
<path d="M515.1 665V667.8M516.7 665V667.8" stroke="#a9c67c" stroke-width="0.6" fill="none"/>
<rect x="491.4" y="667.8" width="15.6" height="13.5" rx="1.200" stroke="#a9c67c" stroke-width=".800"/>
<rect x="508.1" y="667.8" width="15.6" height="13.5" rx="1.200" stroke="#a9c67c" stroke-width=".800"/>
<rect x="495.9" y="633.2" width="6.6" height="2" stroke="#a9c67c" stroke-width="0.7" fill="none"/>
<rect x="495.9" y="681.3" width="6.6" height="2" stroke="#a9c67c" stroke-width="0.7" fill="none"/>
<rect x="512.6" y="633.2" width="6.6" height="2" stroke="#a9c67c" stroke-width="0.7" fill="none"/>
<rect x="512.6" y="681.3" width="6.6" height="2" stroke="#a9c67c" stroke-width="0.7" fill="none"/>
<path d="M507.5 635.2L507.5 681.3" stroke="#a9c67c" stroke-width="1.3"/>
<rect x="491.4" y="700.5" width="15.6" height="13.5" rx="1.200" stroke="#a9c67c" stroke-width=".800"/>
<rect x="508.1" y="700.5" width="15.6" height="13.5" rx="1.200" stroke="#a9c67c" stroke-width=".800"/>
<path d="M498.4 714V716.9M500 714V716.9" stroke="#a9c67c" stroke-width="0.6" fill="none"/>
<path d="M515.1 714V716.9M516.7 714V716.9" stroke="#a9c67c" stroke-width="0.6" fill="none"/>
<rect x="491.4" y="716.9" width="15.6" height="13.5" rx="1.200" stroke="#a9c67c" stroke-width=".800"/>
<rect x="508.1" y="716.9" width="15.6" height="13.5" rx="1.200" stroke="#a9c67c" stroke-width=".800"/>
<path d="M498.4 730.4V733.3M500 730.4V733.3" stroke="#a9c67c" stroke-width="0.6" fill="none"/>
<path d="M515.1 730.4V733.3M516.7 730.4V733.3" stroke="#a9c67c" stroke-width="0.6" fill="none"/>
<rect x="491.4" y="733.3" width="15.6" height="13.5" rx="1.200" stroke="#a9c67c" stroke-width=".800"/>
<rect x="508.1" y="733.3" width="15.6" height="13.5" rx="1.200" stroke="#a9c67c" stroke-width=".800"/>
<path d="M498.4 746.8V749.7M500 746.8V749.7" stroke="#a9c67c" stroke-width="0.6" fill="none"/>
<path d="M515.1 746.8V749.7M516.7 746.8V749.7" stroke="#a9c67c" stroke-width="0.6" fill="none"/>
<rect x="491.4" y="749.7" width="15.6" height="13.5" rx="1.200" stroke="#a9c67c" stroke-width=".800"/>
<rect x="508.1" y="749.7" width="15.6" height="13.5" rx="1.200" stroke="#a9c67c" stroke-width=".800"/>
<rect x="495.9" y="698.5" width="6.6" height="2" stroke="#a9c67c" stroke-width="0.7" fill="none"/>
<rect x="495.9" y="763.2" width="6.6" height="2" stroke="#a9c67c" stroke-width="0.7" fill="none"/>
<rect x="512.6" y="698.5" width="6.6" height="2" stroke="#a9c67c" stroke-width="0.7" fill="none"/>
<rect x="512.6" y="763.2" width="6.6" height="2" stroke="#a9c67c" stroke-width="0.7" fill="none"/>
<path d="M507.5 700.5L507.5 763.2" stroke="#a9c67c" stroke-width="1.3"/>
<rect x="577.3" y="635.2" width="15.6" height="13.5" rx="1.200" stroke="#a9c67c" stroke-width=".800"/>
<rect x="594" y="635.2" width="15.6" height="13.5" rx="1.200" stroke="#a9c67c" stroke-width=".800"/>
<path d="M584.3 648.7V651.5M585.9 648.7V651.5" stroke="#a9c67c" stroke-width="0.6" fill="none"/>
<path d="M601 648.7V651.5M602.6 648.7V651.5" stroke="#a9c67c" stroke-width="0.6" fill="none"/>
<rect x="577.3" y="651.5" width="15.6" height="13.5" rx="1.200" stroke="#a9c67c" stroke-width=".800"/>
<rect x="594" y="651.5" width="15.6" height="13.5" rx="1.200" stroke="#a9c67c" stroke-width=".800"/>
<path d="M584.3 665V667.8M585.9 665V667.8" stroke="#a9c67c" stroke-width="0.6" fill="none"/>
<path d="M601 665V667.8M602.6 665V667.8" stroke="#a9c67c" stroke-width="0.6" fill="none"/>
<rect x="577.3" y="667.8" width="15.6" height="13.5" rx="1.200" stroke="#a9c67c" stroke-width=".800"/>
<rect x="594" y="667.8" width="15.6" height="13.5" rx="1.200" stroke="#a9c67c" stroke-width=".800"/>
<rect x="581.8" y="633.2" width="6.6" height="2" stroke="#a9c67c" stroke-width="0.7" fill="none"/>
<rect x="581.8" y="681.3" width="6.6" height="2" stroke="#a9c67c" stroke-width="0.7" fill="none"/>
<rect x="598.5" y="633.2" width="6.6" height="2" stroke="#a9c67c" stroke-width="0.7" fill="none"/>
<rect x="598.5" y="681.3" width="6.6" height="2" stroke="#a9c67c" stroke-width="0.7" fill="none"/>
<path d="M593.4 635.2L593.4 681.3" stroke="#a9c67c" stroke-width="1.3"/>
<rect x="577.3" y="700.5" width="15.6" height="13.5" rx="1.200" stroke="#a9c67c" stroke-width=".800"/>
<rect x="594" y="700.5" width="15.6" height="13.5" rx="1.200" stroke="#a9c67c" stroke-width=".800"/>
<path d="M584.3 714V716.9M585.9 714V716.9" stroke="#a9c67c" stroke-width="0.6" fill="none"/>
<path d="M601 714V716.9M602.6 714V716.9" stroke="#a9c67c" stroke-width="0.6" fill="none"/>
<rect x="577.3" y="716.9" width="15.6" height="13.5" rx="1.200" stroke="#a9c67c" stroke-width=".800"/>
<rect x="594" y="716.9" width="15.6" height="13.5" rx="1.200" stroke="#a9c67c" stroke-width=".800"/>
<path d="M584.3 730.4V733.3M585.9 730.4V733.3" stroke="#a9c67c" stroke-width="0.6" fill="none"/>
<path d="M601 730.4V733.3M602.6 730.4V733.3" stroke="#a9c67c" stroke-width="0.6" fill="none"/>
<rect x="577.3" y="733.3" width="15.6" height="13.5" rx="1.200" stroke="#a9c67c" stroke-width=".800"/>
<rect x="594" y="733.3" width="15.6" height="13.5" rx="1.200" stroke="#a9c67c" stroke-width=".800"/>
<path d="M584.3 746.8V749.7M585.9 746.8V749.7" stroke="#a9c67c" stroke-width="0.6" fill="none"/>
<path d="M601 746.8V749.7M602.6 746.8V749.7" stroke="#a9c67c" stroke-width="0.6" fill="none"/>
<rect x="577.3" y="749.7" width="15.6" height="13.5" rx="1.200" stroke="#a9c67c" stroke-width=".800"/>
<rect x="594" y="749.7" width="15.6" height="13.5" rx="1.200" stroke="#a9c67c" stroke-width=".800"/>
<path d="M584.3 763.2V766.1M585.9 763.2V766.1" stroke="#a9c67c" stroke-width="0.6" fill="none"/>
<path d="M601 763.2V766.1M602.6 763.2V766.1" stroke="#a9c67c" stroke-width="0.6" fill="none"/>
<rect x="577.3" y="766.1" width="15.6" height="13.5" rx="1.200" stroke="#a9c67c" stroke-width=".800"/>
<rect x="594" y="766.1" width="15.6" height="13.5" rx="1.200" stroke="#a9c67c" stroke-width=".800"/>
<rect x="581.8" y="698.5" width="6.6" height="2" stroke="#a9c67c" stroke-width="0.7" fill="none"/>
<rect x="581.8" y="779.6" width="6.6" height="2" stroke="#a9c67c" stroke-width="0.7" fill="none"/>
<rect x="598.5" y="698.5" width="6.6" height="2" stroke="#a9c67c" stroke-width="0.7" fill="none"/>
<rect x="598.5" y="779.6" width="6.6" height="2" stroke="#a9c67c" stroke-width="0.7" fill="none"/>
<path d="M593.4 700.5L593.4 779.6" stroke="#a9c67c" stroke-width="1.3"/>
<rect x="736.9" y="635.2" width="15.6" height="13.5" rx="1.200" stroke="#a9c67c" stroke-width=".800"/>
<rect x="753.6" y="635.2" width="15.6" height="13.5" rx="1.200" stroke="#a9c67c" stroke-width=".800"/>
<path d="M743.9 648.7V651.5M745.5 648.7V651.5" stroke="#a9c67c" stroke-width="0.6" fill="none"/>
<path d="M760.6 648.7V651.5M762.2 648.7V651.5" stroke="#a9c67c" stroke-width="0.6" fill="none"/>
<rect x="736.9" y="651.5" width="15.6" height="13.5" rx="1.200" stroke="#a9c67c" stroke-width=".800"/>
<rect x="753.6" y="651.5" width="15.6" height="13.5" rx="1.200" stroke="#a9c67c" stroke-width=".800"/>
<path d="M743.9 665V667.8M745.5 665V667.8" stroke="#a9c67c" stroke-width="0.6" fill="none"/>
<path d="M760.6 665V667.8M762.2 665V667.8" stroke="#a9c67c" stroke-width="0.6" fill="none"/>
<rect x="736.9" y="667.8" width="15.6" height="13.5" rx="1.200" stroke="#a9c67c" stroke-width=".800"/>
<rect x="753.6" y="667.8" width="15.6" height="13.5" rx="1.200" stroke="#a9c67c" stroke-width=".800"/>
<rect x="741.4" y="633.2" width="6.6" height="2" stroke="#a9c67c" stroke-width="0.7" fill="none"/>
<rect x="741.4" y="681.3" width="6.6" height="2" stroke="#a9c67c" stroke-width="0.7" fill="none"/>
<rect x="758.1" y="633.2" width="6.6" height="2" stroke="#a9c67c" stroke-width="0.7" fill="none"/>
<rect x="758.1" y="681.3" width="6.6" height="2" stroke="#a9c67c" stroke-width="0.7" fill="none"/>
<path d="M753 635.2L753 681.3" stroke="#a9c67c" stroke-width="1.3"/>
<rect x="736.9" y="700.5" width="15.6" height="13.5" rx="1.200" stroke="#a9c67c" stroke-width=".800"/>
<rect x="753.6" y="700.5" width="15.6" height="13.5" rx="1.200" stroke="#a9c67c" stroke-width=".800"/>
<path d="M743.9 714V716.9M745.5 714V716.9" stroke="#a9c67c" stroke-width="0.6" fill="none"/>
<path d="M760.6 714V716.9M762.2 714V716.9" stroke="#a9c67c" stroke-width="0.6" fill="none"/>
<rect x="736.9" y="716.9" width="15.6" height="13.5" rx="1.200" stroke="#a9c67c" stroke-width=".800"/>
<rect x="753.6" y="716.9" width="15.6" height="13.5" rx="1.200" stroke="#a9c67c" stroke-width=".800"/>
<path d="M743.9 730.4V733.3M745.5 730.4V733.3" stroke="#a9c67c" stroke-width="0.6" fill="none"/>
<path d="M760.6 730.4V733.3M762.2 730.4V733.3" stroke="#a9c67c" stroke-width="0.6" fill="none"/>
<rect x="736.9" y="733.3" width="15.6" height="13.5" rx="1.200" stroke="#a9c67c" stroke-width=".800"/>
<rect x="753.6" y="733.3" width="15.6" height="13.5" rx="1.200" stroke="#a9c67c" stroke-width=".800"/>
<rect x="741.4" y="698.5" width="6.6" height="2" stroke="#a9c67c" stroke-width="0.7" fill="none"/>
<rect x="741.4" y="746.8" width="6.6" height="2" stroke="#a9c67c" stroke-width="0.7" fill="none"/>
<rect x="758.1" y="698.5" width="6.6" height="2" stroke="#a9c67c" stroke-width="0.7" fill="none"/>
<rect x="758.1" y="746.8" width="6.6" height="2" stroke="#a9c67c" stroke-width="0.7" fill="none"/>
<path d="M753 700.5L753 746.8" stroke="#a9c67c" stroke-width="1.3"/>
<rect x="834.8" y="635.2" width="15.6" height="13.5" rx="1.200" stroke="#a9c67c" stroke-width=".800"/>
<rect x="851.5" y="635.2" width="15.6" height="13.5" rx="1.200" stroke="#a9c67c" stroke-width=".800"/>
<path d="M841.8 648.7V651.5M843.4 648.7V651.5" stroke="#a9c67c" stroke-width="0.6" fill="none"/>
<path d="M858.5 648.7V651.5M860.1 648.7V651.5" stroke="#a9c67c" stroke-width="0.6" fill="none"/>
<rect x="834.8" y="651.5" width="15.6" height="13.5" rx="1.200" stroke="#a9c67c" stroke-width=".800"/>
<rect x="851.5" y="651.5" width="15.6" height="13.5" rx="1.200" stroke="#a9c67c" stroke-width=".800"/>
<path d="M841.8 665V667.8M843.4 665V667.8" stroke="#a9c67c" stroke-width="0.6" fill="none"/>
<path d="M858.5 665V667.8M860.1 665V667.8" stroke="#a9c67c" stroke-width="0.6" fill="none"/>
<rect x="834.8" y="667.8" width="15.6" height="13.5" rx="1.200" stroke="#a9c67c" stroke-width=".800"/>
<rect x="851.5" y="667.8" width="15.6" height="13.5" rx="1.200" stroke="#a9c67c" stroke-width=".800"/>
<rect x="839.3" y="633.2" width="6.6" height="2" stroke="#a9c67c" stroke-width="0.7" fill="none"/>
<rect x="839.3" y="681.3" width="6.6" height="2" stroke="#a9c67c" stroke-width="0.7" fill="none"/>
<rect x="856" y="633.2" width="6.6" height="2" stroke="#a9c67c" stroke-width="0.7" fill="none"/>
<rect x="856" y="681.3" width="6.6" height="2" stroke="#a9c67c" stroke-width="0.7" fill="none"/>
<path d="M850.9 635.2L850.9 681.3" stroke="#a9c67c" stroke-width="1.3"/>
<rect x="834.8" y="700.5" width="15.6" height="13.5" rx="1.200" stroke="#a9c67c" stroke-width=".800"/>
<rect x="851.5" y="700.5" width="15.6" height="13.5" rx="1.200" stroke="#a9c67c" stroke-width=".800"/>
<path d="M841.8 714V716.9M843.4 714V716.9" stroke="#a9c67c" stroke-width="0.6" fill="none"/>
<path d="M858.5 714V716.9M860.1 714V716.9" stroke="#a9c67c" stroke-width="0.6" fill="none"/>
<rect x="834.8" y="716.9" width="15.6" height="13.5" rx="1.200" stroke="#a9c67c" stroke-width=".800"/>
<rect x="851.5" y="716.9" width="15.6" height="13.5" rx="1.200" stroke="#a9c67c" stroke-width=".800"/>
<path d="M841.8 730.4V733.3M843.4 730.4V733.3" stroke="#a9c67c" stroke-width="0.6" fill="none"/>
<path d="M858.5 730.4V733.3M860.1 730.4V733.3" stroke="#a9c67c" stroke-width="0.6" fill="none"/>
<rect x="834.8" y="733.3" width="15.6" height="13.5" rx="1.200" stroke="#a9c67c" stroke-width=".800"/>
<rect x="851.5" y="733.3" width="15.6" height="13.5" rx="1.200" stroke="#a9c67c" stroke-width=".800"/>
<path d="M841.8 746.8V749.7M843.4 746.8V749.7" stroke="#a9c67c" stroke-width="0.6" fill="none"/>
<path d="M858.5 746.8V749.7M860.1 746.8V749.7" stroke="#a9c67c" stroke-width="0.6" fill="none"/>
<rect x="834.8" y="749.7" width="15.6" height="13.5" rx="1.200" stroke="#a9c67c" stroke-width=".800"/>
<rect x="851.5" y="749.7" width="15.6" height="13.5" rx="1.200" stroke="#a9c67c" stroke-width=".800"/>
<rect x="839.3" y="698.5" width="6.6" height="2" stroke="#a9c67c" stroke-width="0.7" fill="none"/>
<rect x="839.3" y="763.2" width="6.6" height="2" stroke="#a9c67c" stroke-width="0.7" fill="none"/>
<rect x="856" y="698.5" width="6.6" height="2" stroke="#a9c67c" stroke-width="0.7" fill="none"/>
<rect x="856" y="763.2" width="6.6" height="2" stroke="#a9c67c" stroke-width="0.7" fill="none"/>
<path d="M850.9 700.5L850.9 763.2" stroke="#a9c67c" stroke-width="1.3"/>
<rect x="932.2" y="635.2" width="15.6" height="13.5" rx="1.200" stroke="#a9c67c" stroke-width=".800"/>
<rect x="948.9" y="635.2" width="15.6" height="13.5" rx="1.200" stroke="#a9c67c" stroke-width=".800"/>
<path d="M939.2 648.7V651.5M940.8 648.7V651.5" stroke="#a9c67c" stroke-width="0.6" fill="none"/>
<path d="M955.9 648.7V651.5M957.5 648.7V651.5" stroke="#a9c67c" stroke-width="0.6" fill="none"/>
<rect x="932.2" y="651.5" width="15.6" height="13.5" rx="1.200" stroke="#a9c67c" stroke-width=".800"/>
<rect x="948.9" y="651.5" width="15.6" height="13.5" rx="1.200" stroke="#a9c67c" stroke-width=".800"/>
<path d="M939.2 665V667.8M940.8 665V667.8" stroke="#a9c67c" stroke-width="0.6" fill="none"/>
<path d="M955.9 665V667.8M957.5 665V667.8" stroke="#a9c67c" stroke-width="0.6" fill="none"/>
<rect x="932.2" y="667.8" width="15.6" height="13.5" rx="1.200" stroke="#a9c67c" stroke-width=".800"/>
<rect x="948.9" y="667.8" width="15.6" height="13.5" rx="1.200" stroke="#a9c67c" stroke-width=".800"/>
<rect x="936.7" y="633.2" width="6.6" height="2" stroke="#a9c67c" stroke-width="0.7" fill="none"/>
<rect x="936.7" y="681.3" width="6.6" height="2" stroke="#a9c67c" stroke-width="0.7" fill="none"/>
<rect x="953.4" y="633.2" width="6.6" height="2" stroke="#a9c67c" stroke-width="0.7" fill="none"/>
<rect x="953.4" y="681.3" width="6.6" height="2" stroke="#a9c67c" stroke-width="0.7" fill="none"/>
<path d="M948.3 635.2L948.3 681.3" stroke="#a9c67c" stroke-width="1.3"/>
<rect x="932.2" y="700.5" width="15.6" height="13.5" rx="1.200" stroke="#a9c67c" stroke-width=".800"/>
<rect x="948.9" y="700.5" width="15.6" height="13.5" rx="1.200" stroke="#a9c67c" stroke-width=".800"/>
<path d="M939.2 714V716.9M940.8 714V716.9" stroke="#a9c67c" stroke-width="0.6" fill="none"/>
<path d="M955.9 714V716.9M957.5 714V716.9" stroke="#a9c67c" stroke-width="0.6" fill="none"/>
<rect x="932.2" y="716.9" width="15.6" height="13.5" rx="1.200" stroke="#a9c67c" stroke-width=".800"/>
<rect x="948.9" y="716.9" width="15.6" height="13.5" rx="1.200" stroke="#a9c67c" stroke-width=".800"/>
<path d="M939.2 730.4V733.3M940.8 730.4V733.3" stroke="#a9c67c" stroke-width="0.6" fill="none"/>
<path d="M955.9 730.4V733.3M957.5 730.4V733.3" stroke="#a9c67c" stroke-width="0.6" fill="none"/>
<rect x="932.2" y="733.3" width="15.6" height="13.5" rx="1.200" stroke="#a9c67c" stroke-width=".800"/>
<rect x="948.9" y="733.3" width="15.6" height="13.5" rx="1.200" stroke="#a9c67c" stroke-width=".800"/>
<rect x="936.7" y="698.5" width="6.6" height="2" stroke="#a9c67c" stroke-width="0.7" fill="none"/>
<rect x="936.7" y="746.8" width="6.6" height="2" stroke="#a9c67c" stroke-width="0.7" fill="none"/>
<rect x="953.4" y="698.5" width="6.6" height="2" stroke="#a9c67c" stroke-width="0.7" fill="none"/>
<rect x="953.4" y="746.8" width="6.6" height="2" stroke="#a9c67c" stroke-width="0.7" fill="none"/>
<path d="M948.3 700.5L948.3 746.8" stroke="#a9c67c" stroke-width="1.3"/>
<rect x="1029.6" y="635.2" width="15.6" height="13.5" rx="1.200" stroke="#a9c67c" stroke-width=".800"/>
<rect x="1046.3" y="635.2" width="15.6" height="13.5" rx="1.200" stroke="#a9c67c" stroke-width=".800"/>
<path d="M1036.6 648.7V651.5M1038.2 648.7V651.5" stroke="#a9c67c" stroke-width="0.6" fill="none"/>
<path d="M1053.3 648.7V651.5M1054.9 648.7V651.5" stroke="#a9c67c" stroke-width="0.6" fill="none"/>
<rect x="1029.6" y="651.5" width="15.6" height="13.5" rx="1.200" stroke="#a9c67c" stroke-width=".800"/>
<rect x="1046.3" y="651.5" width="15.6" height="13.5" rx="1.200" stroke="#a9c67c" stroke-width=".800"/>
<path d="M1036.6 665V667.8M1038.2 665V667.8" stroke="#a9c67c" stroke-width="0.6" fill="none"/>
<path d="M1053.3 665V667.8M1054.9 665V667.8" stroke="#a9c67c" stroke-width="0.6" fill="none"/>
<rect x="1029.6" y="667.8" width="15.6" height="13.5" rx="1.200" stroke="#a9c67c" stroke-width=".800"/>
<rect x="1046.3" y="667.8" width="15.6" height="13.5" rx="1.200" stroke="#a9c67c" stroke-width=".800"/>
<rect x="1034.1" y="633.2" width="6.6" height="2" stroke="#a9c67c" stroke-width="0.7" fill="none"/>
<rect x="1034.1" y="681.3" width="6.6" height="2" stroke="#a9c67c" stroke-width="0.7" fill="none"/>
<rect x="1050.8" y="633.2" width="6.6" height="2" stroke="#a9c67c" stroke-width="0.7" fill="none"/>
<rect x="1050.8" y="681.3" width="6.6" height="2" stroke="#a9c67c" stroke-width="0.7" fill="none"/>
<path d="M1045.7 635.2L1045.7 681.3" stroke="#a9c67c" stroke-width="1.3"/>
<rect x="1029.6" y="700.5" width="15.6" height="13.5" rx="1.200" stroke="#a9c67c" stroke-width=".800"/>
<rect x="1046.3" y="700.5" width="15.6" height="13.5" rx="1.200" stroke="#a9c67c" stroke-width=".800"/>
<path d="M1036.6 714V716.9M1038.2 714V716.9" stroke="#a9c67c" stroke-width="0.6" fill="none"/>
<path d="M1053.3 714V716.9M1054.9 714V716.9" stroke="#a9c67c" stroke-width="0.6" fill="none"/>
<rect x="1029.6" y="716.9" width="15.6" height="13.5" rx="1.200" stroke="#a9c67c" stroke-width=".800"/>
<rect x="1046.3" y="716.9" width="15.6" height="13.5" rx="1.200" stroke="#a9c67c" stroke-width=".800"/>
<path d="M1036.6 730.4V733.3M1038.2 730.4V733.3" stroke="#a9c67c" stroke-width="0.6" fill="none"/>
<path d="M1053.3 730.4V733.3M1054.9 730.4V733.3" stroke="#a9c67c" stroke-width="0.6" fill="none"/>
<rect x="1029.6" y="733.3" width="15.6" height="13.5" rx="1.200" stroke="#a9c67c" stroke-width=".800"/>
<rect x="1046.3" y="733.3" width="15.6" height="13.5" rx="1.200" stroke="#a9c67c" stroke-width=".800"/>
<rect x="1034.1" y="698.5" width="6.6" height="2" stroke="#a9c67c" stroke-width="0.7" fill="none"/>
<rect x="1034.1" y="746.8" width="6.6" height="2" stroke="#a9c67c" stroke-width="0.7" fill="none"/>
<rect x="1050.8" y="698.5" width="6.6" height="2" stroke="#a9c67c" stroke-width="0.7" fill="none"/>
<rect x="1050.8" y="746.8" width="6.6" height="2" stroke="#a9c67c" stroke-width="0.7" fill="none"/>
<path d="M1045.7 700.5L1045.7 746.8" stroke="#a9c67c" stroke-width="1.3"/>
<rect x="1127.5" y="635.2" width="15.6" height="13.5" rx="1.200" stroke="#a9c67c" stroke-width=".800"/>
<rect x="1144.2" y="635.2" width="15.6" height="13.5" rx="1.200" stroke="#a9c67c" stroke-width=".800"/>
<path d="M1134.5 648.7V651.5M1136.1 648.7V651.5" stroke="#a9c67c" stroke-width="0.6" fill="none"/>
<path d="M1151.2 648.7V651.5M1152.8 648.7V651.5" stroke="#a9c67c" stroke-width="0.6" fill="none"/>
<rect x="1127.5" y="651.5" width="15.6" height="13.5" rx="1.200" stroke="#a9c67c" stroke-width=".800"/>
<rect x="1144.2" y="651.5" width="15.6" height="13.5" rx="1.200" stroke="#a9c67c" stroke-width=".800"/>
<path d="M1134.5 665V667.8M1136.1 665V667.8" stroke="#a9c67c" stroke-width="0.6" fill="none"/>
<path d="M1151.2 665V667.8M1152.8 665V667.8" stroke="#a9c67c" stroke-width="0.6" fill="none"/>
<rect x="1127.5" y="667.8" width="15.6" height="13.5" rx="1.200" stroke="#a9c67c" stroke-width=".800"/>
<rect x="1144.2" y="667.8" width="15.6" height="13.5" rx="1.200" stroke="#a9c67c" stroke-width=".800"/>
<rect x="1132" y="633.2" width="6.6" height="2" stroke="#a9c67c" stroke-width="0.7" fill="none"/>
<rect x="1132" y="681.3" width="6.6" height="2" stroke="#a9c67c" stroke-width="0.7" fill="none"/>
<rect x="1148.7" y="633.2" width="6.6" height="2" stroke="#a9c67c" stroke-width="0.7" fill="none"/>
<rect x="1148.7" y="681.3" width="6.6" height="2" stroke="#a9c67c" stroke-width="0.7" fill="none"/>
<path d="M1143.6 635.2L1143.6 681.3" stroke="#a9c67c" stroke-width="1.3"/>
<rect x="1127.5" y="700.5" width="15.6" height="13.5" rx="1.200" stroke="#a9c67c" stroke-width=".800"/>
<rect x="1144.2" y="700.5" width="15.6" height="13.5" rx="1.200" stroke="#a9c67c" stroke-width=".800"/>
<path d="M1134.5 714V716.9M1136.1 714V716.9" stroke="#a9c67c" stroke-width="0.6" fill="none"/>
<path d="M1151.2 714V716.9M1152.8 714V716.9" stroke="#a9c67c" stroke-width="0.6" fill="none"/>
<rect x="1127.5" y="716.9" width="15.6" height="13.5" rx="1.200" stroke="#a9c67c" stroke-width=".800"/>
<rect x="1144.2" y="716.9" width="15.6" height="13.5" rx="1.200" stroke="#a9c67c" stroke-width=".800"/>
<path d="M1134.5 730.4V733.3M1136.1 730.4V733.3" stroke="#a9c67c" stroke-width="0.6" fill="none"/>
<path d="M1151.2 730.4V733.3M1152.8 730.4V733.3" stroke="#a9c67c" stroke-width="0.6" fill="none"/>
<rect x="1127.5" y="733.3" width="15.6" height="13.5" rx="1.200" stroke="#a9c67c" stroke-width=".800"/>
<rect x="1144.2" y="733.3" width="15.6" height="13.5" rx="1.200" stroke="#a9c67c" stroke-width=".800"/>
<path d="M1134.5 746.8V749.7M1136.1 746.8V749.7" stroke="#a9c67c" stroke-width="0.6" fill="none"/>
<path d="M1151.2 746.8V749.7M1152.8 746.8V749.7" stroke="#a9c67c" stroke-width="0.6" fill="none"/>
<rect x="1127.5" y="749.7" width="15.6" height="13.5" rx="1.200" stroke="#a9c67c" stroke-width=".800"/>
<rect x="1144.2" y="749.7" width="15.6" height="13.5" rx="1.200" stroke="#a9c67c" stroke-width=".800"/>
<rect x="1132" y="698.5" width="6.6" height="2" stroke="#a9c67c" stroke-width="0.7" fill="none"/>
<rect x="1132" y="763.2" width="6.6" height="2" stroke="#a9c67c" stroke-width="0.7" fill="none"/>
<rect x="1148.7" y="698.5" width="6.6" height="2" stroke="#a9c67c" stroke-width="0.7" fill="none"/>
<rect x="1148.7" y="763.2" width="6.6" height="2" stroke="#a9c67c" stroke-width="0.7" fill="none"/>
<path d="M1143.6 700.5L1143.6 763.2" stroke="#a9c67c" stroke-width="1.3"/>
<rect x="1225.4" y="635.2" width="15.6" height="13.5" rx="1.200" stroke="#a9c67c" stroke-width=".800"/>
<rect x="1242.1" y="635.2" width="15.6" height="13.5" rx="1.200" stroke="#a9c67c" stroke-width=".800"/>
<path d="M1232.4 648.7V651.5M1234 648.7V651.5" stroke="#a9c67c" stroke-width="0.6" fill="none"/>
<path d="M1249.1 648.7V651.5M1250.7 648.7V651.5" stroke="#a9c67c" stroke-width="0.6" fill="none"/>
<rect x="1225.4" y="651.5" width="15.6" height="13.5" rx="1.200" stroke="#a9c67c" stroke-width=".800"/>
<rect x="1242.1" y="651.5" width="15.6" height="13.5" rx="1.200" stroke="#a9c67c" stroke-width=".800"/>
<path d="M1232.4 665V667.8M1234 665V667.8" stroke="#a9c67c" stroke-width="0.6" fill="none"/>
<path d="M1249.1 665V667.8M1250.7 665V667.8" stroke="#a9c67c" stroke-width="0.6" fill="none"/>
<rect x="1225.4" y="667.8" width="15.6" height="13.5" rx="1.200" stroke="#a9c67c" stroke-width=".800"/>
<rect x="1242.1" y="667.8" width="15.6" height="13.5" rx="1.200" stroke="#a9c67c" stroke-width=".800"/>
<rect x="1229.9" y="633.2" width="6.6" height="2" stroke="#a9c67c" stroke-width="0.7" fill="none"/>
<rect x="1229.9" y="681.3" width="6.6" height="2" stroke="#a9c67c" stroke-width="0.7" fill="none"/>
<rect x="1246.6" y="633.2" width="6.6" height="2" stroke="#a9c67c" stroke-width="0.7" fill="none"/>
<rect x="1246.6" y="681.3" width="6.6" height="2" stroke="#a9c67c" stroke-width="0.7" fill="none"/>
<path d="M1241.5 635.2L1241.5 681.3" stroke="#a9c67c" stroke-width="1.3"/>
<rect x="1225.4" y="700.5" width="15.6" height="13.5" rx="1.200" stroke="#a9c67c" stroke-width=".800"/>
<rect x="1242.1" y="700.5" width="15.6" height="13.5" rx="1.200" stroke="#a9c67c" stroke-width=".800"/>
<path d="M1232.4 714V716.9M1234 714V716.9" stroke="#a9c67c" stroke-width="0.6" fill="none"/>
<path d="M1249.1 714V716.9M1250.7 714V716.9" stroke="#a9c67c" stroke-width="0.6" fill="none"/>
<rect x="1225.4" y="716.9" width="15.6" height="13.5" rx="1.200" stroke="#a9c67c" stroke-width=".800"/>
<rect x="1242.1" y="716.9" width="15.6" height="13.5" rx="1.200" stroke="#a9c67c" stroke-width=".800"/>
<path d="M1232.4 730.4V733.3M1234 730.4V733.3" stroke="#a9c67c" stroke-width="0.6" fill="none"/>
<path d="M1249.1 730.4V733.3M1250.7 730.4V733.3" stroke="#a9c67c" stroke-width="0.6" fill="none"/>
<rect x="1225.4" y="733.3" width="15.6" height="13.5" rx="1.200" stroke="#a9c67c" stroke-width=".800"/>
<rect x="1242.1" y="733.3" width="15.6" height="13.5" rx="1.200" stroke="#a9c67c" stroke-width=".800"/>
<path d="M1232.4 746.8V749.7M1234 746.8V749.7" stroke="#a9c67c" stroke-width="0.6" fill="none"/>
<path d="M1249.1 746.8V749.7M1250.7 746.8V749.7" stroke="#a9c67c" stroke-width="0.6" fill="none"/>
<rect x="1225.4" y="749.7" width="15.6" height="13.5" rx="1.200" stroke="#a9c67c" stroke-width=".800"/>
<rect x="1242.1" y="749.7" width="15.6" height="13.5" rx="1.200" stroke="#a9c67c" stroke-width=".800"/>
<path d="M1232.4 763.2V766.1M1234 763.2V766.1" stroke="#a9c67c" stroke-width="0.6" fill="none"/>
<path d="M1249.1 763.2V766.1M1250.7 763.2V766.1" stroke="#a9c67c" stroke-width="0.6" fill="none"/>
<rect x="1225.4" y="766.1" width="15.6" height="13.5" rx="1.200" stroke="#a9c67c" stroke-width=".800"/>
<rect x="1242.1" y="766.1" width="15.6" height="13.5" rx="1.200" stroke="#a9c67c" stroke-width=".800"/>
<rect x="1229.9" y="698.5" width="6.6" height="2" stroke="#a9c67c" stroke-width="0.7" fill="none"/>
<rect x="1229.9" y="779.6" width="6.6" height="2" stroke="#a9c67c" stroke-width="0.7" fill="none"/>
<rect x="1246.6" y="698.5" width="6.6" height="2" stroke="#a9c67c" stroke-width="0.7" fill="none"/>
<rect x="1246.6" y="779.6" width="6.6" height="2" stroke="#a9c67c" stroke-width="0.7" fill="none"/>
<path d="M1241.5 700.5L1241.5 779.6" stroke="#a9c67c" stroke-width="1.3"/>
<rect x="1321.3" y="635.2" width="15.6" height="13.5" rx="1.200" stroke="#a9c67c" stroke-width=".800"/>
<path d="M1328.3 648.7V651.5M1329.9 648.7V651.5" stroke="#a9c67c" stroke-width="0.6" fill="none"/>
<rect x="1321.3" y="651.5" width="15.6" height="13.5" rx="1.200" stroke="#a9c67c" stroke-width=".800"/>
<path d="M1328.3 665V667.8M1329.9 665V667.8" stroke="#a9c67c" stroke-width="0.6" fill="none"/>
<rect x="1321.3" y="667.8" width="15.6" height="13.5" rx="1.200" stroke="#a9c67c" stroke-width=".800"/>
<rect x="1325.8" y="633.2" width="6.6" height="2" stroke="#a9c67c" stroke-width="0.7" fill="none"/>
<rect x="1325.8" y="681.3" width="6.6" height="2" stroke="#a9c67c" stroke-width="0.7" fill="none"/>
<rect x="1321.3" y="684.9" width="15.6" height="13.5" rx="1.200" stroke="#a9c67c" stroke-width=".800"/>
<path d="M1328.3 698.4V701.3M1329.9 698.4V701.3" stroke="#a9c67c" stroke-width="0.6" fill="none"/>
<rect x="1321.3" y="701.3" width="15.6" height="13.5" rx="1.200" stroke="#a9c67c" stroke-width=".800"/>
<path d="M1328.3 714.8V717.7M1329.9 714.8V717.7" stroke="#a9c67c" stroke-width="0.6" fill="none"/>
<rect x="1321.3" y="717.7" width="15.6" height="13.5" rx="1.200" stroke="#a9c67c" stroke-width=".800"/>
<path d="M1328.3 731.2V734.1M1329.9 731.2V734.1" stroke="#a9c67c" stroke-width="0.6" fill="none"/>
<rect x="1321.3" y="734.1" width="15.6" height="13.5" rx="1.200" stroke="#a9c67c" stroke-width=".800"/>
<rect x="1325.8" y="682.9" width="6.6" height="2" stroke="#a9c67c" stroke-width="0.7" fill="none"/>
<rect x="1325.8" y="747.6" width="6.6" height="2" stroke="#a9c67c" stroke-width="0.7" fill="none"/>
<rect x="492" y="683.6" width="32.6" height="13" stroke="#a9c67c" stroke-width="0.8" fill="none"/>
<circle cx="508" cy="690" r="2.6" stroke="#a9c67c" stroke-width="0.8" fill="none"/>
<rect x="1127.5" y="683.6" width="32.6" height="13" stroke="#a9c67c" stroke-width="0.8" fill="none"/>
<circle cx="1144" cy="690" r="2.6" stroke="#a9c67c" stroke-width="0.8" fill="none"/>
<rect x="836" y="683.6" width="32.6" height="13" stroke="#a9c67c" stroke-width="0.8" fill="none"/>
<circle cx="852" cy="690" r="2.6" stroke="#a9c67c" stroke-width="0.8" fill="none"/>
<rect x="736.9" y="756.2" width="56" height="19.6" stroke="#a9c67c" stroke-width="0.8" fill="none"/>
<circle cx="743.9" cy="766" r="3.2" stroke="#a9c67c" stroke-width="0.7" fill="none"/>
<path d="M743.9 762.8L743.9 769.2" stroke="#a9c67c" stroke-width="0.6"/>
<circle cx="757.9" cy="766" r="3.2" stroke="#a9c67c" stroke-width="0.7" fill="none"/>
<path d="M757.9 762.8L757.9 769.2" stroke="#a9c67c" stroke-width="0.6"/>
<circle cx="771.9" cy="766" r="3.2" stroke="#a9c67c" stroke-width="0.7" fill="none"/>
<path d="M771.9 762.8L771.9 769.2" stroke="#a9c67c" stroke-width="0.6"/>
<circle cx="785.9" cy="766" r="3.2" stroke="#a9c67c" stroke-width="0.7" fill="none"/>
<path d="M785.9 762.8L785.9 769.2" stroke="#a9c67c" stroke-width="0.6"/>
<rect x="741.4" y="778.9" width="12" height="13.8" stroke="#a9c67c" stroke-width="0.8" fill="none"/>
<rect x="758.4" y="778.9" width="12" height="13.8" stroke="#a9c67c" stroke-width="0.8" fill="none"/>
<rect x="775.4" y="778.9" width="12" height="13.8" stroke="#a9c67c" stroke-width="0.8" fill="none"/>
<rect x="909.2" y="756.2" width="56" height="19.6" stroke="#a9c67c" stroke-width="0.8" fill="none"/>
<circle cx="916.2" cy="766" r="3.2" stroke="#a9c67c" stroke-width="0.7" fill="none"/>
<path d="M916.2 762.8L916.2 769.2" stroke="#a9c67c" stroke-width="0.6"/>
<circle cx="930.2" cy="766" r="3.2" stroke="#a9c67c" stroke-width="0.7" fill="none"/>
<path d="M930.2 762.8L930.2 769.2" stroke="#a9c67c" stroke-width="0.6"/>
<circle cx="944.2" cy="766" r="3.2" stroke="#a9c67c" stroke-width="0.7" fill="none"/>
<path d="M944.2 762.8L944.2 769.2" stroke="#a9c67c" stroke-width="0.6"/>
<circle cx="958.2" cy="766" r="3.2" stroke="#a9c67c" stroke-width="0.7" fill="none"/>
<path d="M958.2 762.8L958.2 769.2" stroke="#a9c67c" stroke-width="0.6"/>
<rect x="913.7" y="778.9" width="12" height="13.8" stroke="#a9c67c" stroke-width="0.8" fill="none"/>
<rect x="930.7" y="778.9" width="12" height="13.8" stroke="#a9c67c" stroke-width="0.8" fill="none"/>
<rect x="947.7" y="778.9" width="12" height="13.8" stroke="#a9c67c" stroke-width="0.8" fill="none"/>
<rect x="1029.6" y="756.2" width="56" height="19.6" stroke="#a9c67c" stroke-width="0.8" fill="none"/>
<circle cx="1036.6" cy="766" r="3.2" stroke="#a9c67c" stroke-width="0.7" fill="none"/>
<path d="M1036.6 762.8L1036.6 769.2" stroke="#a9c67c" stroke-width="0.6"/>
<circle cx="1050.6" cy="766" r="3.2" stroke="#a9c67c" stroke-width="0.7" fill="none"/>
<path d="M1050.6 762.8L1050.6 769.2" stroke="#a9c67c" stroke-width="0.6"/>
<circle cx="1064.6" cy="766" r="3.2" stroke="#a9c67c" stroke-width="0.7" fill="none"/>
<path d="M1064.6 762.8L1064.6 769.2" stroke="#a9c67c" stroke-width="0.6"/>
<circle cx="1078.6" cy="766" r="3.2" stroke="#a9c67c" stroke-width="0.7" fill="none"/>
<path d="M1078.6 762.8L1078.6 769.2" stroke="#a9c67c" stroke-width="0.6"/>
<rect x="1034.1" y="778.9" width="12" height="13.8" stroke="#a9c67c" stroke-width="0.8" fill="none"/>
<rect x="1051.1" y="778.9" width="12" height="13.8" stroke="#a9c67c" stroke-width="0.8" fill="none"/>
<rect x="1068.1" y="778.9" width="12" height="13.8" stroke="#a9c67c" stroke-width="0.8" fill="none"/>
<circle cx="460.1" cy="690.7" r="7" stroke="#4c6b22" stroke-width="1.1" fill="none"/>
<text x="460.1" y="694.1" font-size="9.6" fill="#4c6b22" text-anchor="middle" textLength="4.6" lengthAdjust="spacingAndGlyphs">2</text>
<path d="M467 690.7L484 690.7" stroke="#4c6b22" stroke-width="1"/>
<path d="M488 690.700L482 689V692.400Z" stroke="none" stroke-width="0" fill="#4c6b22"/>
<circle cx="491.4" cy="690.7" r="2.6" stroke="#4c6b22" stroke-width="1.1" fill="none"/>
<g stroke="#4c6b22" stroke-width="1.200" fill="none"><rect x="488.200" y="673.700" width="6.400" height="12.500"/><path d="M491.400 673.700L488.400 667.500H494.400Z"/></g>
<circle cx="875" cy="690.7" r="7" stroke="#4c6b22" stroke-width="1.1" fill="none"/>
<text x="875" y="694.1" font-size="9.6" fill="#4c6b22" text-anchor="middle" textLength="4.6" lengthAdjust="spacingAndGlyphs">2</text>
<path d="M868 690.7L850 690.7" stroke="#4c6b22" stroke-width="1"/>
<path d="M846 690.700L852 689V692.400Z" stroke="none" stroke-width="0" fill="#4c6b22"/>
<circle cx="843.1" cy="690.7" r="2.6" stroke="#4c6b22" stroke-width="1.1" fill="none"/>
<g stroke="#4c6b22" stroke-width="1.200" fill="none"><rect x="813.900" y="687.500" width="13.600" height="6.400"/><path d="M813.900 690.700L808 687.700V693.700Z"/></g>
<circle cx="1122" cy="690.7" r="7" stroke="#4c6b22" stroke-width="1.1" fill="none"/>
<text x="1122" y="694.1" font-size="9.6" fill="#4c6b22" text-anchor="middle" textLength="4.6" lengthAdjust="spacingAndGlyphs">2</text>
<path d="M1129 690.7L1147 690.7" stroke="#4c6b22" stroke-width="1"/>
<path d="M1151 690.700L1145 689V692.400Z" stroke="none" stroke-width="0" fill="#4c6b22"/>
<circle cx="1154.2" cy="690.7" r="2.6" stroke="#4c6b22" stroke-width="1.1" fill="none"/>
<g stroke="#4c6b22" stroke-width="1.200" fill="none"><rect x="1170.600" y="687.500" width="12.300" height="6.400"/><path d="M1182.900 690.700L1189.500 687.700V693.700Z"/></g>
<circle cx="764.8" cy="735.4" r="7" stroke="#4c6b22" stroke-width="1.1" fill="none"/>
<text x="764.8" y="738.8" font-size="9.6" fill="#4c6b22" text-anchor="middle" textLength="4.6" lengthAdjust="spacingAndGlyphs">1</text>
<path d="M764.8 742.4L764.8 763" stroke="#4c6b22" stroke-width="1"/>
<path d="M764.8 764.500L763.2 758.500H766.4Z" stroke="none" stroke-width="0" fill="#4c6b22"/>
<circle cx="764.8" cy="767.2" r="2.6" stroke="#4c6b22" stroke-width="1.1" fill="none"/>
<circle cx="937.4" cy="735.4" r="7" stroke="#4c6b22" stroke-width="1.1" fill="none"/>
<text x="937.4" y="738.8" font-size="9.6" fill="#4c6b22" text-anchor="middle" textLength="4.6" lengthAdjust="spacingAndGlyphs">1</text>
<path d="M937.4 742.4L937.4 763" stroke="#4c6b22" stroke-width="1"/>
<path d="M937.4 764.500L935.8 758.500H939Z" stroke="none" stroke-width="0" fill="#4c6b22"/>
<circle cx="937.4" cy="767.2" r="2.6" stroke="#4c6b22" stroke-width="1.1" fill="none"/>
<circle cx="1058.3" cy="735.4" r="7" stroke="#4c6b22" stroke-width="1.1" fill="none"/>
<text x="1058.3" y="738.8" font-size="9.6" fill="#4c6b22" text-anchor="middle" textLength="4.6" lengthAdjust="spacingAndGlyphs">1</text>
<path d="M1058.3 742.4L1058.3 763" stroke="#4c6b22" stroke-width="1"/>
<path d="M1058.3 764.500L1056.7 758.500H1059.9Z" stroke="none" stroke-width="0" fill="#4c6b22"/>
<circle cx="1058.3" cy="767.2" r="2.6" stroke="#4c6b22" stroke-width="1.1" fill="none"/>
<g stroke="#4c6b22" stroke-width="1.200" fill="none"><rect x="994.800" y="747.600" width="6.400" height="13.800"/><path d="M998 747.600L995 741.500H1001Z"/></g>
<circle cx="419.8" cy="584.7" r="7" stroke="#4c6b22" stroke-width="1.1" fill="none"/>
<text x="419.8" y="588.1" font-size="9.6" fill="#4c6b22" text-anchor="middle" textLength="9.2" lengthAdjust="spacingAndGlyphs">11</text>
<circle cx="447" cy="577.5" r="1.6" stroke="none" stroke-width="0" fill="#a9c67c"/>
<path d="M447 577L447 592.6" stroke="#a9c67c" stroke-width="0.8"/>
<text x="430.8" y="600.4" font-size="9.2" fill="#9ab76c">GATE1</text>
<rect x="435.4" y="605" width="21" height="8.2" stroke="#a9c67c" stroke-width="0.9" fill="none"/>
<text x="445.9" y="611.9" font-size="9.2" fill="#9ab76c" text-anchor="middle">152</text>
<text x="532.7" y="601.7" font-size="9.2" fill="#9ab76c">NON-SECURE</text>
<text x="535.5" y="612.7" font-size="9.2" fill="#9ab76c">HOLD ROOM</text>
<rect x="553.3" y="616.5" width="21.4" height="8.9" stroke="#a9c67c" stroke-width="0.9" fill="none"/>
<text x="564" y="624.1" font-size="9.2" fill="#9ab76c" text-anchor="middle">151</text>
<circle cx="756.2" cy="584.9" r="7" stroke="#4c6b22" stroke-width="1.1" fill="none"/>
<text x="756.2" y="588.3" font-size="9.6" fill="#4c6b22" text-anchor="middle" textLength="9.2" lengthAdjust="spacingAndGlyphs">11</text>
<circle cx="799.5" cy="577.5" r="1.6" stroke="none" stroke-width="0" fill="#a9c67c"/>
<path d="M799.5 577L799.5 592.6" stroke="#a9c67c" stroke-width="0.8"/>
<text x="781.8" y="600.6" font-size="9.2" fill="#9ab76c">GATE 2</text>
<rect x="788.3" y="604.5" width="21.7" height="8.6" stroke="#a9c67c" stroke-width="0.9" fill="none"/>
<text x="799.1" y="611.8" font-size="9.2" fill="#9ab76c" text-anchor="middle">153</text>
<circle cx="1243.7" cy="582.6" r="7" stroke="#4c6b22" stroke-width="1.1" fill="none"/>
<text x="1243.7" y="586" font-size="9.6" fill="#4c6b22" text-anchor="middle" textLength="9.2" lengthAdjust="spacingAndGlyphs">11</text>
<circle cx="1192.8" cy="577.3" r="1.6" stroke="none" stroke-width="0" fill="#a9c67c"/>
<path d="M1192.8 577.3L1192.8 590.9" stroke="#a9c67c" stroke-width="0.8"/>
<text x="1175" y="603.2" font-size="9.2" fill="#9ab76c">GATE 3</text>
<rect x="1181.6" y="607.1" width="21.4" height="8.6" stroke="#a9c67c" stroke-width="0.9" fill="none"/>
<text x="1192.3" y="614.4" font-size="9.2" fill="#9ab76c" text-anchor="middle">154</text>
<path d="M1095 585L1340 585" stroke="#a9c67c" stroke-width="0.7" stroke-dasharray="6 4"/>
<rect x="320.4" y="603.3" width="18.3" height="12.4" stroke="#d6b06e" stroke-width="0.7" fill="#d69a62" fill-opacity=".46"/>
<circle cx="331.5" cy="609.5" r="4" stroke="#6f7a30" stroke-width="1" fill="none"/>
<path d="M325.5 608.5H335.5M325.5 610.5H335.5" stroke="#6f7a30" stroke-width="0.7" fill="none"/>
<rect x="328.3" y="605.3" width="52.4" height="8.4" stroke="#e2468c" stroke-width="1" fill="#e8608a" fill-opacity=".4"/>
<text x="339" y="612.4" font-size="9.6" fill="#8a6a45">RP-02-13</text>
<g transform="translate(333,718) rotate(65)" stroke="#4c6b22" stroke-width="1.200" fill="none"><rect x="-7" y="-3.200" width="13" height="6.400"/><path d="M6 0L11.500 -3V3Z"/></g>
<rect x="321" y="727.5" width="18.2" height="11.7" stroke="#d6b06e" stroke-width="0.7" fill="#d69a62" fill-opacity=".46"/>
<circle cx="332.1" cy="733.4" r="4" stroke="#6f7a30" stroke-width="1" fill="none"/>
<path d="M326.1 732.4H336.1M326.1 734.4H336.1" stroke="#6f7a30" stroke-width="0.7" fill="none"/>
<rect x="328.8" y="729.3" width="54" height="8.6" stroke="#e2468c" stroke-width="1" fill="#e8608a" fill-opacity=".4"/>
<text x="339.2" y="736.3" font-size="9.6" fill="#8a6a45">RP-02-13</text>
<rect x="634.3" y="603.4" width="18.2" height="11.8" stroke="#d6b06e" stroke-width="0.7" fill="#d69a62" fill-opacity=".46"/>
<circle cx="645.4" cy="609.3" r="4" stroke="#6f7a30" stroke-width="1" fill="none"/>
<path d="M639.4 608.3H649.4M639.4 610.3H649.4" stroke="#6f7a30" stroke-width="0.7" fill="none"/>
<rect x="602.4" y="610.5" width="45.7" height="13.8" stroke="#e2468c" stroke-width="1" fill="#e8608a" fill-opacity=".4"/>
<text x="604.8" y="622.8" font-size="9.6" fill="#8a6a45">RP-02-14</text>
<rect x="604.2" y="717.5" width="45.7" height="14.4" stroke="#e2468c" stroke-width="1" fill="#e8608a" fill-opacity=".4"/>
<text x="606.3" y="724.9" font-size="9.6" fill="#8a6a45">RP-02-14</text>
<rect x="634.8" y="726.7" width="18.2" height="12.3" stroke="#d6b06e" stroke-width="0.7" fill="#d69a62" fill-opacity=".46"/>
<circle cx="645.9" cy="732.9" r="4" stroke="#6f7a30" stroke-width="1" fill="none"/>
<path d="M639.9 731.9H649.9M639.9 733.9H649.9" stroke="#6f7a30" stroke-width="0.7" fill="none"/>
<rect x="1282.1" y="721.5" width="54.8" height="10.4" stroke="#e2468c" stroke-width="1" fill="#e8608a" fill-opacity=".4"/>
<text x="1283.9" y="730.1" font-size="9.6" fill="#8a6a45">RP-04-05</text>
<rect x="1323.1" y="720.9" width="17" height="11.5" stroke="#d6b06e" stroke-width="0.7" fill="#d69a62" fill-opacity=".46"/>
<circle cx="1333.6" cy="726.6" r="4" stroke="#6f7a30" stroke-width="1" fill="none"/>
<path d="M1327.6 725.6H1337.6M1327.6 727.6H1337.6" stroke="#6f7a30" stroke-width="0.7" fill="none"/>
<rect x="1346.6" y="720.9" width="54.3" height="11" stroke="#e2468c" stroke-width="1" fill="#e8608a" fill-opacity=".4"/>
<text x="1360.4" y="729.3" font-size="9.6" fill="#8a6a45">RP-12-01</text>
<rect x="1344" y="718.9" width="16.9" height="11.7" stroke="#d6b06e" stroke-width="0.7" fill="#d69a62" fill-opacity=".46"/>
<circle cx="1354.5" cy="724.8" r="4" stroke="#6f7a30" stroke-width="1" fill="none"/>
<path d="M1348.5 723.8H1358.5M1348.5 725.8H1358.5" stroke="#6f7a30" stroke-width="0.7" fill="none"/>
<circle cx="1355.7" cy="651.7" r="7.5" stroke="#4c6b22" stroke-width="1.1" fill="none"/>
<text x="1355.7" y="655.1" font-size="9.6" fill="#4c6b22" text-anchor="middle" textLength="9.2" lengthAdjust="spacingAndGlyphs">12</text>
<rect x="1345.5" y="665.8" width="11.5" height="21.7" stroke="#4c6b22" stroke-width="1.2" fill="none"/>
<text x="1366.4" y="661.4" font-size="9.6" fill="#4f6d25">CONTROL</text>
<text x="1366.4" y="673" font-size="9.6" fill="#4f6d25">PANEL FOR</text>
<text x="1366.4" y="684.6" font-size="9.6" fill="#4f6d25">BAGGAGE</text>
<text x="1366.4" y="696.2" font-size="9.6" fill="#4f6d25">CONVEYOR</text>
<text x="1403" y="707.6" font-size="9.6" fill="#4f6d25">13, 15, 17</text>
<rect x="1425.7" y="654.9" width="47.8" height="65.3" stroke="#a9c67c" stroke-width="0.9" fill="none"/>
<rect x="1428" y="657" width="43.2" height="61" stroke="#a9c67c" stroke-width="0.7" fill="none"/>
<path d="M1449.200 623L1446 640L1444.500 652V662M1449.200 623L1452.400 640L1454 652V662M1444.500 652H1454" stroke="#a9c67c" stroke-width="0.8" fill="none"/>
<rect x="1346.5" y="618" width="5" height="9" stroke="#a9c67c" stroke-width="0.7" fill="none"/>
<path d="M1400.900 748H1500M1400.900 751.500H1500M1403 748V854M1500 788H1345" stroke="#a9c67c" stroke-width="0.8" fill="none"/>
<rect x="1399" y="744" width="7" height="7" stroke="#a9c67c" stroke-width="0.7" fill="none"/>
<rect x="1469" y="744" width="7" height="7" stroke="#a9c67c" stroke-width="0.7" fill="none"/>
<g transform="translate(1356.5,768.5) rotate(-55)" stroke="#4c6b22" stroke-width="1.200" fill="none"><rect x="-7" y="-3.200" width="13" height="6.400"/><path d="M6 0L11.500 -3V3Z"/></g>
<g transform="translate(1320,793.8) rotate(145)" stroke="#4c6b22" stroke-width="1.200" fill="none"><rect x="-7" y="-3.200" width="13" height="6.400"/><path d="M6 0L11.500 -3V3Z"/></g>
<g transform="translate(1353.1,794.6) rotate(65)" stroke="#4c6b22" stroke-width="1.200" fill="none"><rect x="-7" y="-3.200" width="13" height="6.400"/><path d="M6 0L11.500 -3V3Z"/></g>
<rect x="1369.6" y="778.1" width="13" height="13.1" stroke="#4c6b22" stroke-width="1.3" fill="none"/>
<text x="1376.1" y="787.4" font-size="7.6" fill="#4c6b22" text-anchor="middle">A2</text>
<rect x="1394.9" y="786.2" width="14.3" height="7.8" stroke="#4c6b22" stroke-width="1.3" fill="none"/>
<text x="1402.1" y="792.8" font-size="7.6" fill="#4c6b22" text-anchor="middle">CR</text>
<rect x="1393" y="771" width="9" height="8.7" stroke="#4c6b22" stroke-width="1.2" fill="none"/>
<circle cx="1415.2" cy="773.2" r="6.4" stroke="#4c6b22" stroke-width="1.2" fill="none"/>
<path d="M1415.2 766.8L1409.6 776.4L1420.8 776.4Z" stroke="#4c6b22" stroke-width="1" fill="none"/>
<path d="M1397.500 771Q1398 758 1408 757.500Q1417 758 1417.500 767" stroke="#4c6b22" stroke-width="1" fill="none"/>
<text x="1423.6" y="765.8" font-size="9.6" fill="#4f6d25">SC</text>
<text x="1423.6" y="775" font-size="9.6" fill="#4f6d25">ERP-14-02</text>
<circle cx="1427" cy="795.1" r="6.6" stroke="#4c6b22" stroke-width="1.1" fill="none"/>
<text x="1427" y="798.2" font-size="8.5" fill="#4c6b22" text-anchor="middle">A</text>
<path d="M1422 790L1432 800M1432 790L1422 800" stroke="#4c6b22" stroke-width="0.7" fill="none"/>
<circle cx="1441.4" cy="795.1" r="6.8" stroke="#4c6b22" stroke-width="1.1" fill="none"/>
<text x="1441.4" y="798.5" font-size="9.6" fill="#4c6b22" text-anchor="middle" textLength="9.2" lengthAdjust="spacingAndGlyphs">14</text>
<path d="M1358 805Q1362 822 1392 818Q1394 800 1392 790" stroke="#a9c67c" stroke-width="0.7" fill="none"/>
<rect x="1449.2" y="781.5" width="13.6" height="13.1" stroke="#d6b06e" stroke-width="0.7" fill="#d69a62" fill-opacity=".46"/>
<circle cx="1456" cy="788" r="4" stroke="#6f7a30" stroke-width="1" fill="none"/>
<path d="M1455 784V792M1457 784V792" stroke="#6f7a30" stroke-width="0.7" fill="none"/>
<rect x="1450.5" y="793.3" width="42.5" height="13.5" stroke="#e2468c" stroke-width="1" fill="#e8608a" fill-opacity=".4"/>
<text x="1453.1" y="805" font-size="9.6" fill="#8a6a45">RP-12-11</text>
<text x="412.3" y="812.8" font-size="9.6" fill="#4f6d25" text-anchor="end">HWT-2</text>
<text x="412.3" y="824.6" font-size="9.6" fill="#4f6d25" text-anchor="end">208V/1PH</text>
<text x="412.3" y="836.9" font-size="9.6" fill="#4f6d25" text-anchor="end">ERP-06-23, 25</text>
<path d="M417.500 821.500H426.700L454 876" stroke="#4c6b22" stroke-width="1.1" fill="none"/>
<text x="681.8" y="810.2" font-size="9.6" fill="#4f6d25">SD</text>
<text x="681.8" y="819.4" font-size="9.6" fill="#4f6d25">ERP-08-05</text>
<circle cx="661.1" cy="814.2" r="6.4" stroke="#4c6b22" stroke-width="1.2" fill="none"/>
<path d="M661.1 807.8L655.5 817.4L666.7 817.4Z" stroke="#4c6b22" stroke-width="1" fill="none"/>
<rect x="667.5" y="809.7" width="9" height="8.5" stroke="#4c6b22" stroke-width="1.2" fill="none"/>
<path d="M676.5 814H679.5V810.7" stroke="#4c6b22" stroke-width="1" fill="none"/>
<g transform="translate(643.4,837.7) rotate(240)" stroke="#4c6b22" stroke-width="1.200" fill="none"><rect x="-7" y="-3.200" width="13" height="6.400"/><path d="M6 0L11.500 -3V3Z"/></g>
<g transform="translate(678.6,839.7) rotate(-30)" stroke="#4c6b22" stroke-width="1.200" fill="none"><rect x="-7" y="-3.200" width="13" height="6.400"/><path d="M6 0L11.500 -3V3Z"/></g>
<text x="704.8" y="838.4" font-size="9.6" fill="#4f6d25">EP-04-38</text>
<text x="704.8" y="848.6" font-size="9.6" fill="#4f6d25">DM</text>
<text x="783.9" y="842.9" font-size="9.6" fill="#4f6d25">RP-04-38</text>
<text x="783.9" y="852.5" font-size="9.6" fill="#4f6d25">DM</text>
<rect x="740" y="842.3" width="8.6" height="8.6" stroke="#4c6b22" stroke-width="1.2" fill="none"/>
<circle cx="744.3" cy="846.6" r="1.3" stroke="none" stroke-width="0" fill="#4c6b22"/>
<rect x="740" y="853.3" width="8.6" height="8.6" stroke="#4c6b22" stroke-width="1.2" fill="none"/>
<circle cx="744.3" cy="857.6" r="1.3" stroke="none" stroke-width="0" fill="#4c6b22"/>
<rect x="762.2" y="842.3" width="8.6" height="8.6" stroke="#4c6b22" stroke-width="1.2" fill="none"/>
<circle cx="766.5" cy="846.6" r="1.3" stroke="none" stroke-width="0" fill="#4c6b22"/>
<rect x="762.2" y="853.3" width="8.6" height="8.6" stroke="#4c6b22" stroke-width="1.2" fill="none"/>
<circle cx="766.5" cy="857.6" r="1.3" stroke="none" stroke-width="0" fill="#4c6b22"/>
<text x="1033.3" y="808.9" font-size="9.2" fill="#9ab76c" text-anchor="middle">CATSA</text>
<text x="1033.3" y="820.2" font-size="9.2" fill="#9ab76c" text-anchor="middle">STORAGE/ IT</text>
<rect x="1020.2" y="825.1" width="21.7" height="8.6" stroke="#a9c67c" stroke-width="0.9" fill="none"/>
<text x="1031.1" y="832.4" font-size="9.2" fill="#9ab76c" text-anchor="middle">175</text>
<path d="M1020 829H1012L1008 851" stroke="#a9c67c" stroke-width="0.7" fill="none"/>
<text x="1073" y="826" font-size="8.5" fill="#9ab76c">DRINKING</text>
<text x="1073" y="836" font-size="8.5" fill="#9ab76c">FOUNTAIN</text>
<rect x="1065.4" y="839" width="49.6" height="10.9" stroke="#e2468c" stroke-width="1" fill="#e8608a" fill-opacity=".4"/>
<text x="1072.4" y="848.1" font-size="9.6" fill="#8a6a45">RP-04-15</text>
<path d="M322 858L1342 858" stroke="#a9c67c" stroke-width="0.8"/>
<path d="M322 861L1342 861" stroke="#a9c67c" stroke-width="0.8"/>
<path d="M410 858L410 935" stroke="#a9c67c" stroke-width="0.8"/>
<path d="M488 858L488 930" stroke="#a9c67c" stroke-width="0.8"/>
<path d="M498 858L498 930" stroke="#a9c67c" stroke-width="0.8"/>
<path d="M640 858L640 985" stroke="#a9c67c" stroke-width="0.8"/>
<path d="M652 858L652 985" stroke="#a9c67c" stroke-width="0.8"/>
<path d="M660 862L660 985" stroke="#a9c67c" stroke-width="0.8"/>
<path d="M690 858L690 985" stroke="#a9c67c" stroke-width="0.8"/>
<path d="M897 858L897 985" stroke="#a9c67c" stroke-width="0.8"/>
<path d="M905 858L905 930" stroke="#a9c67c" stroke-width="0.8"/>
<path d="M322 985L1163 985" stroke="#a9c67c" stroke-width="0.8"/>
<path d="M322 988.5L1163 988.5" stroke="#a9c67c" stroke-width="0.8"/>
<path d="M322 929.5L322 938.4" stroke="#a9c67c" stroke-width="0.8"/>
<path d="M420 988L420 1119" stroke="#a9c67c" stroke-width="0.8"/>
<path d="M488 988L488 1119" stroke="#a9c67c" stroke-width="0.8"/>
<path d="M558 988L558 1095" stroke="#a9c67c" stroke-width="0.8"/>
<path d="M566 988L566 1095" stroke="#a9c67c" stroke-width="0.8"/>
<path d="M648 988L648 1119" stroke="#a9c67c" stroke-width="0.8"/>
<path d="M690 988L690 1119" stroke="#a9c67c" stroke-width="0.8"/>
<path d="M722 988L722 1100" stroke="#a9c67c" stroke-width="0.8"/>
<path d="M1163.3 858L1163.3 1119" stroke="#a9c67c" stroke-width="0.8"/>
<path d="M1166.5 858L1166.5 1119" stroke="#a9c67c" stroke-width="0.8"/>
<path d="M1197.2 1033L1197.2 1119" stroke="#a9c67c" stroke-width="0.8"/>
<path d="M1163 1031L1344 1031" stroke="#a9c67c" stroke-width="0.8"/>
<path d="M1163 1034L1344 1034" stroke="#a9c67c" stroke-width="0.8"/>
<path d="M1163 940L1260 940" stroke="#a9c67c" stroke-width="0.8"/>
<path d="M1163 943L1260 943" stroke="#a9c67c" stroke-width="0.8"/>
<path d="M1079 858L1079 955" stroke="#a9c67c" stroke-width="0.8"/>
<path d="M1082 858L1082 955" stroke="#a9c67c" stroke-width="0.8"/>
<path d="M905 862L1020 862" stroke="#a9c67c" stroke-width="0.8"/>
<path d="M905 862L905 985" stroke="#a9c67c" stroke-width="0.8"/>
<path d="M988 862L988 930" stroke="#a9c67c" stroke-width="0.8"/>
<path d="M1022 858L1022 955" stroke="#a9c67c" stroke-width="0.8"/>
<path d="M1022 905L1079 905" stroke="#a9c67c" stroke-width="0.8"/>
<path d="M1022 955L1082 955" stroke="#a9c67c" stroke-width="0.8"/>
<path d="M1403 858L1403 1040" stroke="#a9c67c" stroke-width="0.8"/>
<path d="M1432 905L1432 1040" stroke="#a9c67c" stroke-width="0.8"/>
<path d="M1403 940L1432 940" stroke="#a9c67c" stroke-width="0.8"/>
<path d="M1025 862L1079 903" stroke="#a9c67c" stroke-width="0.5"/>
<path d="M1079 862L1025 903" stroke="#a9c67c" stroke-width="0.5"/>
<path d="M1166 1036L1195 1117" stroke="#a9c67c" stroke-width="0.5"/>
<path d="M1195 1036L1166 1117" stroke="#a9c67c" stroke-width="0.5"/>
<circle cx="512" cy="1017" r="21" stroke="#a9c67c" stroke-width="0.6" fill="none" stroke-dasharray="3 3"/>
<circle cx="620" cy="1017" r="21" stroke="#a9c67c" stroke-width="0.6" fill="none" stroke-dasharray="3 3"/>
<circle cx="760" cy="945" r="21" stroke="#a9c67c" stroke-width="0.6" fill="none" stroke-dasharray="3 3"/>
<circle cx="820" cy="945" r="21" stroke="#a9c67c" stroke-width="0.6" fill="none" stroke-dasharray="3 3"/>
<text x="518.1" y="846" font-size="9.6" fill="#4f6d25">MC</text>
<text x="518.1" y="855.9" font-size="9.6" fill="#4f6d25">RP-02-36</text>
<circle cx="526.4" cy="865.1" r="6.4" stroke="#4c6b22" stroke-width="1.2" fill="none"/>
<path d="M526.4 858.7L520.8 868.3L532 868.3Z" stroke="#4c6b22" stroke-width="1" fill="none"/>
<rect x="532.8" y="860.6" width="9" height="8.5" stroke="#4c6b22" stroke-width="1.2" fill="none"/>
<path d="M541.8 864.9H544.8V861.6" stroke="#4c6b22" stroke-width="1" fill="none"/>
<text x="396.7" y="864.5" font-size="9.6" fill="#4f6d25" text-anchor="end">RP-02-70</text>
<text x="396.7" y="875" font-size="9.6" fill="#4f6d25" text-anchor="end">DM</text>
<circle cx="405" cy="876.8" r="6.4" stroke="#4c6b22" stroke-width="1.2" fill="none"/>
<path d="M405 870.4L399.4 880L410.6 880Z" stroke="#4c6b22" stroke-width="1" fill="none"/>
<rect x="411.4" y="872.3" width="9" height="8.5" stroke="#4c6b22" stroke-width="1.2" fill="none"/>
<path d="M420.4 876.5H423.4V873.3" stroke="#4c6b22" stroke-width="1" fill="none"/>
<path d="M399 880Q398 892 408 891" stroke="#4c6b22" stroke-width="1" fill="none"/>
<rect x="404" y="887.3" width="8.6" height="8.6" stroke="#4c6b22" stroke-width="1.2" fill="none"/>
<circle cx="408.3" cy="891.6" r="1.3" stroke="none" stroke-width="0" fill="#4c6b22"/>
<rect x="415.5" y="887.3" width="8.6" height="8.6" stroke="#4c6b22" stroke-width="1.2" fill="none"/>
<circle cx="419.8" cy="891.6" r="1.3" stroke="none" stroke-width="0" fill="#4c6b22"/>
<circle cx="461.1" cy="865.6" r="7" stroke="#4c6b22" stroke-width="1.1" fill="none"/>
<text x="461.1" y="869" font-size="9.6" fill="#4c6b22" text-anchor="middle" textLength="4.6" lengthAdjust="spacingAndGlyphs">6</text>
<rect x="471" y="859" width="12.3" height="12" stroke="#4c6b22" stroke-width="1.3" fill="none"/>
<text x="477.1" y="867.7" font-size="7.6" fill="#4c6b22" text-anchor="middle">JB</text>
<rect x="453.6" y="874.2" width="11.4" height="11.8" stroke="#4c6b22" stroke-width="1.3" fill="none"/>
<path d="M459.3 875.5L455.3 884L463.3 884Z" stroke="none" stroke-width="0" fill="#4c6b22"/>
<rect x="465" y="876" width="9" height="8.5" stroke="#4c6b22" stroke-width="1.2" fill="none"/>
<path d="M474 880.2H477V877" stroke="#4c6b22" stroke-width="1" fill="none"/>
<text x="349.7" y="887.3" font-size="9.2" fill="#9ab76c">CORRIDOR</text>
<rect x="360.6" y="889.9" width="20.4" height="8.3" stroke="#a9c67c" stroke-width="0.9" fill="none"/>
<text x="370.8" y="896.9" font-size="9.2" fill="#9ab76c" text-anchor="middle">168</text>
<text x="431.9" y="882.6" font-size="10.5" fill="#9ab76c">WC</text>
<rect x="432.4" y="885.4" width="18.3" height="8.4" stroke="#a9c67c" stroke-width="0.9" fill="none"/>
<text x="441.5" y="892.5" font-size="9.2" fill="#9ab76c" text-anchor="middle">167</text>
<rect x="343.7" y="891.2" width="13" height="12.2" stroke="#4c6b22" stroke-width="1.3" fill="none"/>
<text x="350.2" y="900" font-size="7.6" fill="#4c6b22" text-anchor="middle">ML</text>
<text x="342.3" y="915.2" font-size="9.6" fill="#4f6d25">DM</text>
<circle cx="365.3" cy="908.9" r="6.4" stroke="#4c6b22" stroke-width="1.2" fill="none"/>
<path d="M365.3 902.5L359.7 912.1L370.9 912.1Z" stroke="#4c6b22" stroke-width="1" fill="none"/>
<rect x="371.7" y="904.4" width="9" height="8.5" stroke="#4c6b22" stroke-width="1.2" fill="none"/>
<path d="M380.7 908.6H383.7V905.4" stroke="#4c6b22" stroke-width="1" fill="none"/>
<text x="417.5" y="904.2" font-size="9.6" fill="#4f6d25">RP-02-23</text>
<text x="417.5" y="912.8" font-size="9.6" fill="#4f6d25">HD</text>
<rect x="457.5" y="888.6" width="20.1" height="8.6" stroke="#e2468c" stroke-width="1" fill="#e8608a" fill-opacity=".4"/>
<text x="459.5" y="896.3" font-size="8.5" fill="#8a6a45">GFI</text>
<rect x="471.6" y="885.2" width="15.1" height="9.8" stroke="#d6b06e" stroke-width="0.7" fill="#d69a62" fill-opacity=".46"/>
<circle cx="481.1" cy="890.1" r="4" stroke="#6f7a30" stroke-width="1" fill="none"/>
<path d="M475.1 889.1H485.1M475.1 891.1H485.1" stroke="#6f7a30" stroke-width="0.7" fill="none"/>
<path d="M487 892L497 886H520" stroke="#4c6b22" stroke-width="1" fill="none"/>
<text x="578" y="863.8" font-size="9.2" fill="#9ab76c">VEND</text>
<rect x="501.9" y="886.5" width="40.4" height="9.1" stroke="#e2468c" stroke-width="1" fill="#e8608a" fill-opacity=".4"/>
<text x="503.4" y="893.8" font-size="9.3" fill="#8a6a45">RP-02-16</text>
<rect x="545.5" y="886.5" width="41.8" height="9.1" stroke="#e2468c" stroke-width="1" fill="#e8608a" fill-opacity=".4"/>
<text x="547" y="893.8" font-size="9.3" fill="#8a6a45">RP-02-17</text>
<rect x="589.9" y="886.5" width="42.5" height="9.1" stroke="#e2468c" stroke-width="1" fill="#e8608a" fill-opacity=".4"/>
<text x="591.4" y="893.8" font-size="9.3" fill="#8a6a45">RP-02-18</text>
<rect x="514.9" y="896.4" width="12.3" height="12.3" stroke="#d6b06e" stroke-width="0.7" fill="#d69a62" fill-opacity=".46"/>
<circle cx="521" cy="902.5" r="4" stroke="#6f7a30" stroke-width="1" fill="none"/>
<path d="M520 898.5V906.5M522 898.5V906.5" stroke="#6f7a30" stroke-width="0.7" fill="none"/>
<rect x="523.3" y="895.6" width="20.4" height="9.4" stroke="#e2468c" stroke-width="1" fill="#e8608a" fill-opacity=".4"/>
<text x="528.3" y="903.5" font-size="8.8" fill="#8a6a45">VM</text>
<rect x="558.5" y="896.4" width="12.3" height="12.3" stroke="#d6b06e" stroke-width="0.7" fill="#d69a62" fill-opacity=".46"/>
<circle cx="564.6" cy="902.5" r="4" stroke="#6f7a30" stroke-width="1" fill="none"/>
<path d="M563.6 898.5V906.5M565.6 898.5V906.5" stroke="#6f7a30" stroke-width="0.7" fill="none"/>
<rect x="567.2" y="895.6" width="20.3" height="9.4" stroke="#e2468c" stroke-width="1" fill="#e8608a" fill-opacity=".4"/>
<text x="572.2" y="903.5" font-size="8.8" fill="#8a6a45">VM</text>
<rect x="602.9" y="896.4" width="12.3" height="12.3" stroke="#d6b06e" stroke-width="0.7" fill="#d69a62" fill-opacity=".46"/>
<circle cx="609" cy="902.5" r="4" stroke="#6f7a30" stroke-width="1" fill="none"/>
<path d="M608 898.5V906.5M610 898.5V906.5" stroke="#6f7a30" stroke-width="0.7" fill="none"/>
<rect x="611.5" y="895.6" width="20.7" height="9.4" stroke="#e2468c" stroke-width="1" fill="#e8608a" fill-opacity=".4"/>
<text x="616.5" y="903.5" font-size="8.8" fill="#8a6a45">VM</text>
<circle cx="670.8" cy="872.4" r="7" stroke="#4c6b22" stroke-width="1.1" fill="none"/>
<text x="670.8" y="875.8" font-size="9.6" fill="#4c6b22" text-anchor="middle" textLength="4.6" lengthAdjust="spacingAndGlyphs">7</text>
<rect x="655" y="866" width="12" height="12" stroke="#4c6b22" stroke-width="1.3" fill="none"/>
<text transform="translate(658.4,872) rotate(90)" font-size="6" fill="#4c6b22" text-anchor="middle">FID</text>
<text x="698.2" y="880.7" font-size="9.6" fill="#4f6d25">HWT-5</text>
<text x="685.2" y="892" font-size="9.6" fill="#4f6d25">208V/1PH</text>
<text x="665.1" y="903.7" font-size="9.6" fill="#4f6d25">ERP-08-20, 22</text>
<circle cx="717" cy="861.1" r="6.4" stroke="#4c6b22" stroke-width="1.2" fill="none"/>
<path d="M717 854.7L711.4 864.3L722.6 864.3Z" stroke="#4c6b22" stroke-width="1" fill="none"/>
<rect x="723.4" y="856.6" width="9" height="8.5" stroke="#4c6b22" stroke-width="1.2" fill="none"/>
<path d="M732.4 860.9H735.4V857.6" stroke="#4c6b22" stroke-width="1" fill="none"/>
<circle cx="781.8" cy="859.1" r="6.4" stroke="#4c6b22" stroke-width="1.2" fill="none"/>
<path d="M781.8 852.7L776.2 862.3L787.4 862.3Z" stroke="#4c6b22" stroke-width="1" fill="none"/>
<rect x="788.2" y="854.6" width="9" height="8.5" stroke="#4c6b22" stroke-width="1.2" fill="none"/>
<path d="M797.2 858.9H800.2V855.6" stroke="#4c6b22" stroke-width="1" fill="none"/>
<path d="M711 858Q722 840 740 847M740 862Q735 875 722 867M770 856Q765 848 771 847M776 864Q768 870 762 862" stroke="#4c6b22" stroke-width="1" fill="none"/>
<text x="767.4" y="892.5" font-size="9.6" fill="#4f6d25">RP-04-10</text>
<rect x="730" y="899" width="11" height="11" stroke="#4c6b22" stroke-width="1.3" fill="none"/>
<path d="M735.5 900.2L731.7 908.4L739.3 908.4Z" stroke="none" stroke-width="0" fill="#4c6b22"/>
<rect x="741" y="901" width="8" height="8" stroke="#4c6b22" stroke-width="1.2" fill="none"/>
<rect x="697.4" y="906.8" width="50.4" height="9.4" stroke="#e2468c" stroke-width="1" fill="#e8608a" fill-opacity=".4"/>
<text x="700.5" y="914.5" font-size="9.3" fill="#8a6a45">RP-04-10</text>
<text x="793.5" y="906.8" font-size="9.2" fill="#9ab76c">WOMEN</text>
<text x="790" y="917.3" font-size="9.2" fill="#9ab76c">WASHROOM</text>
<rect x="803" y="921" width="21" height="8.5" stroke="#a9c67c" stroke-width="0.9" fill="none"/>
<text x="813.5" y="928.2" font-size="9.2" fill="#9ab76c" text-anchor="middle">159</text>
<circle cx="865.8" cy="872.4" r="7" stroke="#4c6b22" stroke-width="1.1" fill="none"/>
<text x="865.8" y="875.8" font-size="9.6" fill="#4c6b22" text-anchor="middle" textLength="4.6" lengthAdjust="spacingAndGlyphs">8</text>
<rect x="876.3" y="865.8" width="13" height="12.8" stroke="#4c6b22" stroke-width="1.3" fill="none"/>
<text x="882.8" y="874.9" font-size="7.6" fill="#4c6b22" text-anchor="middle">JB</text>
<circle cx="865.8" cy="899" r="7" stroke="#4c6b22" stroke-width="1.1" fill="none"/>
<text x="865.8" y="902.4" font-size="9.6" fill="#4c6b22" text-anchor="middle" textLength="4.6" lengthAdjust="spacingAndGlyphs">8</text>
<rect x="876.3" y="892.5" width="13" height="12.5" stroke="#4c6b22" stroke-width="1.3" fill="none"/>
<text x="882.8" y="901.5" font-size="7.6" fill="#4c6b22" text-anchor="middle">JB</text>
<circle cx="690.9" cy="917.8" r="7" stroke="#4c6b22" stroke-width="1.1" fill="none"/>
<text x="690.9" y="921.2" font-size="9.6" fill="#4c6b22" text-anchor="middle" textLength="9.2" lengthAdjust="spacingAndGlyphs">13</text>
<text x="322.2" y="924.8" font-size="9.6" fill="#4f6d25">P-10-02</text>
<path d="M371 914Q385 928 405 924" stroke="#4c6b22" stroke-width="1" fill="none"/>
<rect x="403" y="919.5" width="8.6" height="8.6" stroke="#4c6b22" stroke-width="1.2" fill="none"/>
<circle cx="407.3" cy="923.8" r="1.3" stroke="none" stroke-width="0" fill="#4c6b22"/>
<rect x="398.5" y="911" width="13" height="7.8" stroke="#4c6b22" stroke-width="1.3" fill="none"/>
<text x="405" y="917.6" font-size="7.6" fill="#4c6b22" text-anchor="middle">CR</text>
<circle cx="424.6" cy="920.1" r="6.4" stroke="#4c6b22" stroke-width="1.2" fill="none"/>
<path d="M424.6 913.7L419 923.3L430.2 923.3Z" stroke="#4c6b22" stroke-width="1" fill="none"/>
<circle cx="460.6" cy="919.6" r="7" stroke="#4c6b22" stroke-width="1.1" fill="none"/>
<text x="460.6" y="923" font-size="9.6" fill="#4c6b22" text-anchor="middle" textLength="4.6" lengthAdjust="spacingAndGlyphs">6</text>
<rect x="469" y="907.3" width="13" height="13.1" stroke="#4c6b22" stroke-width="1.3" fill="none"/>
<text x="475.5" y="916.5" font-size="7.6" fill="#4c6b22" text-anchor="middle">JB</text>
<clipPath id="hb1"><rect x="322.200" y="929.500" width="270.300" height="8.900"/></clipPath>
<rect x="322.2" y="929.5" width="270.3" height="8.9" stroke="#4c6b22" stroke-width="1.1" fill="none"/>
<g clip-path="url(#hb1)" stroke="#4c6b22" stroke-width="1">
<path d="M318 938.400L323 929.500"/>
<path d="M321 938.400L326 929.500"/>
<path d="M324 938.400L329 929.500"/>
<path d="M327 938.400L332 929.500"/>
<path d="M330 938.400L335 929.500"/>
<path d="M333 938.400L338 929.500"/>
<path d="M336 938.400L341 929.500"/>
<path d="M339 938.400L344 929.500"/>
<path d="M342 938.400L347 929.500"/>
<path d="M345 938.400L350 929.500"/>
<path d="M348 938.400L353 929.500"/>
<path d="M351 938.400L356 929.500"/>
<path d="M354 938.400L359 929.500"/>
<path d="M357 938.400L362 929.500"/>
<path d="M360 938.400L365 929.500"/>
<path d="M363 938.400L368 929.500"/>
<path d="M366 938.400L371 929.500"/>
<path d="M369 938.400L374 929.500"/>
<path d="M372 938.400L377 929.500"/>
<path d="M375 938.400L380 929.500"/>
<path d="M378 938.400L383 929.500"/>
<path d="M381 938.400L386 929.500"/>
<path d="M384 938.400L389 929.500"/>
<path d="M387 938.400L392 929.500"/>
<path d="M390 938.400L395 929.500"/>
<path d="M393 938.400L398 929.500"/>
<path d="M396 938.400L401 929.500"/>
<path d="M399 938.400L404 929.500"/>
<path d="M402 938.400L407 929.500"/>
<path d="M405 938.400L410 929.500"/>
<path d="M408 938.400L413 929.500"/>
<path d="M411 938.400L416 929.500"/>
<path d="M414 938.400L419 929.500"/>
<path d="M417 938.400L422 929.500"/>
<path d="M420 938.400L425 929.500"/>
<path d="M423 938.400L428 929.500"/>
<path d="M426 938.400L431 929.500"/>
<path d="M429 938.400L434 929.500"/>
<path d="M432 938.400L437 929.500"/>
<path d="M435 938.400L440 929.500"/>
<path d="M438 938.400L443 929.500"/>
<path d="M441 938.400L446 929.500"/>
<path d="M444 938.400L449 929.500"/>
<path d="M447 938.400L452 929.500"/>
<path d="M450 938.400L455 929.500"/>
<path d="M453 938.400L458 929.500"/>
<path d="M456 938.400L461 929.500"/>
<path d="M459 938.400L464 929.500"/>
<path d="M462 938.400L467 929.500"/>
<path d="M465 938.400L470 929.500"/>
<path d="M468 938.400L473 929.500"/>
<path d="M471 938.400L476 929.500"/>
<path d="M474 938.400L479 929.500"/>
<path d="M477 938.400L482 929.500"/>
<path d="M480 938.400L485 929.500"/>
<path d="M483 938.400L488 929.500"/>
<path d="M486 938.400L491 929.500"/>
<path d="M489 938.400L494 929.500"/>
<path d="M492 938.400L497 929.500"/>
<path d="M495 938.400L500 929.500"/>
<path d="M498 938.400L503 929.500"/>
<path d="M501 938.400L506 929.500"/>
<path d="M504 938.400L509 929.500"/>
<path d="M507 938.400L512 929.500"/>
<path d="M510 938.400L515 929.500"/>
<path d="M513 938.400L518 929.500"/>
<path d="M516 938.400L521 929.500"/>
<path d="M519 938.400L524 929.500"/>
<path d="M522 938.400L527 929.500"/>
<path d="M525 938.400L530 929.500"/>
<path d="M528 938.400L533 929.500"/>
<path d="M531 938.400L536 929.500"/>
<path d="M534 938.400L539 929.500"/>
<path d="M537 938.400L542 929.500"/>
<path d="M540 938.400L545 929.500"/>
<path d="M543 938.400L548 929.500"/>
<path d="M546 938.400L551 929.500"/>
<path d="M549 938.400L554 929.500"/>
<path d="M552 938.400L557 929.500"/>
<path d="M555 938.400L560 929.500"/>
<path d="M558 938.400L563 929.500"/>
<path d="M561 938.400L566 929.500"/>
<path d="M564 938.400L569 929.500"/>
<path d="M567 938.400L572 929.500"/>
<path d="M570 938.400L575 929.500"/>
<path d="M573 938.400L578 929.500"/>
<path d="M576 938.400L581 929.500"/>
<path d="M579 938.400L584 929.500"/>
<path d="M582 938.400L587 929.500"/>
<path d="M585 938.400L590 929.500"/>
<path d="M588 938.400L593 929.500"/>
<path d="M591 938.400L596 929.500"/>
<path d="M594 938.400L599 929.500"/>
<path d="M597 938.400L602 929.500"/>
<path d="M600 938.400L605 929.500"/>
</g>
<circle cx="595.1" cy="930.8" r="2.6" stroke="#4c6b22" stroke-width="1" fill="none"/>
<circle cx="595.1" cy="937.3" r="2.6" stroke="#4c6b22" stroke-width="1" fill="none"/>
<circle cx="622.5" cy="925.3" r="7" stroke="#4c6b22" stroke-width="1.1" fill="none"/>
<text x="622.5" y="928.7" font-size="9.6" fill="#4c6b22" text-anchor="middle" textLength="4.6" lengthAdjust="spacingAndGlyphs">9</text>
<path d="M615.5 927L600 933" stroke="#4c6b22" stroke-width="1"/>
<circle cx="381.8" cy="948.8" r="7" stroke="#4c6b22" stroke-width="1.1" fill="none"/>
<text x="381.8" y="952.2" font-size="9.6" fill="#4c6b22" text-anchor="middle" textLength="4.6" lengthAdjust="spacingAndGlyphs">3</text>
<rect x="402.4" y="940.5" width="13.1" height="12.5" stroke="#4c6b22" stroke-width="1.3" fill="none"/>
<text transform="translate(406.3,946.8) rotate(90)" font-size="7.6" fill="#4c6b22" text-anchor="middle">A2</text>
<text x="420.7" y="957.4" font-size="9.6" fill="#4f6d25">MC</text>
<text x="420.7" y="966.6" font-size="9.6" fill="#4f6d25">RP-02-34</text>
<rect x="402.7" y="969.2" width="9.6" height="14.4" stroke="#4c6b22" stroke-width="1.3" fill="none"/>
<text transform="translate(404.9,976.4) rotate(90)" font-size="6.5" fill="#4c6b22" text-anchor="middle">CR</text>
<circle cx="426.7" cy="975.7" r="6.4" stroke="#4c6b22" stroke-width="1.2" fill="none"/>
<path d="M426.7 969.3L421.1 978.9L432.3 978.9Z" stroke="#4c6b22" stroke-width="1" fill="none"/>
<rect x="433.1" y="971.2" width="9" height="8.5" stroke="#4c6b22" stroke-width="1.2" fill="none"/>
<path d="M442.1 975.5H445.1V972.2" stroke="#4c6b22" stroke-width="1" fill="none"/>
<text x="505" y="945.7" font-size="9.2" fill="#9ab76c">CORRIDOR</text>
<rect x="518" y="960.5" width="20" height="8.1" stroke="#a9c67c" stroke-width="0.9" fill="none"/>
<text x="528" y="967.3" font-size="9.2" fill="#9ab76c" text-anchor="middle">165</text>
<rect x="464.5" y="965.3" width="52.8" height="11.2" stroke="#e2468c" stroke-width="1" fill="#e8608a" fill-opacity=".4"/>
<text x="469" y="973.9" font-size="9.6" fill="#8a6a45">RP-02-80</text>
<rect x="494.6" y="975.7" width="24.3" height="9.2" stroke="#e2468c" stroke-width="1" fill="#e8608a" fill-opacity=".4"/>
<text x="497" y="983.5" font-size="8.5" fill="#8a6a45">GFI</text>
<rect x="509" y="974.4" width="13.5" height="12.6" stroke="#d6b06e" stroke-width="0.7" fill="#d69a62" fill-opacity=".46"/>
<circle cx="515.8" cy="980.7" r="4" stroke="#6f7a30" stroke-width="1" fill="none"/>
<path d="M514.8 976.7V984.7M516.8 976.7V984.7" stroke="#6f7a30" stroke-width="0.7" fill="none"/>
<circle cx="533.7" cy="979.1" r="6.4" stroke="#4c6b22" stroke-width="1.2" fill="none"/>
<path d="M533.7 972.7L528.1 982.3L539.3 982.3Z" stroke="#4c6b22" stroke-width="1" fill="none"/>
<text x="542.9" y="975.7" font-size="9.6" fill="#4f6d25">TSP</text>
<text x="541.6" y="985.6" font-size="9.6" fill="#4f6d25">RP-02-37</text>
<rect x="422.8" y="995.6" width="13" height="12.4" stroke="#4c6b22" stroke-width="1.3" fill="none"/>
<text x="429.3" y="1004.5" font-size="7.6" fill="#4c6b22" text-anchor="middle">JB</text>
<circle cx="447" cy="1001.8" r="7" stroke="#4c6b22" stroke-width="1.1" fill="none"/>
<text x="447" y="1005.2" font-size="9.6" fill="#4c6b22" text-anchor="middle" textLength="4.6" lengthAdjust="spacingAndGlyphs">4</text>
<rect x="422.8" y="1021.7" width="13" height="12.4" stroke="#4c6b22" stroke-width="1.3" fill="none"/>
<text x="429.3" y="1030.6" font-size="7.6" fill="#4c6b22" text-anchor="middle">JB</text>
<circle cx="447" cy="1027.9" r="7" stroke="#4c6b22" stroke-width="1.1" fill="none"/>
<text x="447" y="1031.3" font-size="9.6" fill="#4c6b22" text-anchor="middle" textLength="4.6" lengthAdjust="spacingAndGlyphs">4</text>
<rect x="422.8" y="1048.4" width="13" height="12.4" stroke="#4c6b22" stroke-width="1.3" fill="none"/>
<text x="429.3" y="1057.3" font-size="7.6" fill="#4c6b22" text-anchor="middle">JB</text>
<circle cx="447" cy="1054.6" r="7" stroke="#4c6b22" stroke-width="1.1" fill="none"/>
<text x="447" y="1058" font-size="9.6" fill="#4c6b22" text-anchor="middle" textLength="4.6" lengthAdjust="spacingAndGlyphs">4</text>
<rect x="422.8" y="1074.7" width="13" height="12.4" stroke="#4c6b22" stroke-width="1.3" fill="none"/>
<text x="429.3" y="1083.6" font-size="7.6" fill="#4c6b22" text-anchor="middle">JB</text>
<circle cx="447" cy="1080.9" r="7" stroke="#4c6b22" stroke-width="1.1" fill="none"/>
<text x="447" y="1084.3" font-size="9.6" fill="#4c6b22" text-anchor="middle" textLength="4.6" lengthAdjust="spacingAndGlyphs">4</text>
<circle cx="533.7" cy="1003.7" r="7" stroke="#4c6b22" stroke-width="1.1" fill="none"/>
<text x="533.7" y="1007.1" font-size="9.6" fill="#4c6b22" text-anchor="middle" textLength="4.6" lengthAdjust="spacingAndGlyphs">4</text>
<rect x="547.3" y="997.5" width="12.5" height="12.4" stroke="#4c6b22" stroke-width="1.3" fill="none"/>
<text x="553.5" y="1006.4" font-size="7.6" fill="#4c6b22" text-anchor="middle">JB</text>
<rect x="572.4" y="997.5" width="12.8" height="12.4" stroke="#4c6b22" stroke-width="1.3" fill="none"/>
<text x="578.8" y="1006.4" font-size="7.6" fill="#4c6b22" text-anchor="middle">JB</text>
<circle cx="596.9" cy="1004.7" r="7" stroke="#4c6b22" stroke-width="1.1" fill="none"/>
<text x="596.9" y="1008.1" font-size="9.6" fill="#4c6b22" text-anchor="middle" textLength="4.6" lengthAdjust="spacingAndGlyphs">5</text>
<circle cx="536.9" cy="1056.1" r="7" stroke="#4c6b22" stroke-width="1.1" fill="none"/>
<text x="536.9" y="1059.5" font-size="9.6" fill="#4c6b22" text-anchor="middle" textLength="4.6" lengthAdjust="spacingAndGlyphs">4</text>
<rect x="547.3" y="1049.9" width="12.5" height="12.4" stroke="#4c6b22" stroke-width="1.3" fill="none"/>
<text x="553.5" y="1058.8" font-size="7.6" fill="#4c6b22" text-anchor="middle">JB</text>
<rect x="572.4" y="1049.9" width="12.8" height="12.4" stroke="#4c6b22" stroke-width="1.3" fill="none"/>
<text x="578.8" y="1058.8" font-size="7.6" fill="#4c6b22" text-anchor="middle">JB</text>
<circle cx="596.9" cy="1057.1" r="7" stroke="#4c6b22" stroke-width="1.1" fill="none"/>
<text x="596.9" y="1060.5" font-size="9.6" fill="#4c6b22" text-anchor="middle" textLength="4.6" lengthAdjust="spacingAndGlyphs">5</text>
<circle cx="536.9" cy="1080.9" r="7" stroke="#4c6b22" stroke-width="1.1" fill="none"/>
<text x="536.9" y="1084.3" font-size="9.6" fill="#4c6b22" text-anchor="middle" textLength="4.6" lengthAdjust="spacingAndGlyphs">4</text>
<rect x="547.3" y="1074.7" width="12.5" height="12.4" stroke="#4c6b22" stroke-width="1.3" fill="none"/>
<text x="553.5" y="1083.6" font-size="7.6" fill="#4c6b22" text-anchor="middle">JB</text>
<rect x="572.4" y="1074.7" width="12.8" height="12.4" stroke="#4c6b22" stroke-width="1.3" fill="none"/>
<text x="578.8" y="1083.6" font-size="7.6" fill="#4c6b22" text-anchor="middle">JB</text>
<circle cx="596.9" cy="1081.9" r="7" stroke="#4c6b22" stroke-width="1.1" fill="none"/>
<text x="596.9" y="1085.3" font-size="9.6" fill="#4c6b22" text-anchor="middle" textLength="4.6" lengthAdjust="spacingAndGlyphs">5</text>
<circle cx="691.7" cy="1002.6" r="7" stroke="#4c6b22" stroke-width="1.1" fill="none"/>
<text x="691.7" y="1006" font-size="9.6" fill="#4c6b22" text-anchor="middle" textLength="4.6" lengthAdjust="spacingAndGlyphs">5</text>
<rect x="704.2" y="996.4" width="12.8" height="12.4" stroke="#4c6b22" stroke-width="1.3" fill="none"/>
<text x="710.6" y="1005.3" font-size="7.6" fill="#4c6b22" text-anchor="middle">JB</text>
<circle cx="691.7" cy="1029.2" r="7" stroke="#4c6b22" stroke-width="1.1" fill="none"/>
<text x="691.7" y="1032.6" font-size="9.6" fill="#4c6b22" text-anchor="middle" textLength="4.6" lengthAdjust="spacingAndGlyphs">5</text>
<rect x="704.2" y="1023" width="12.8" height="12.4" stroke="#4c6b22" stroke-width="1.3" fill="none"/>
<text x="710.6" y="1031.9" font-size="7.6" fill="#4c6b22" text-anchor="middle">JB</text>
<circle cx="691.7" cy="1055.9" r="7" stroke="#4c6b22" stroke-width="1.1" fill="none"/>
<text x="691.7" y="1059.3" font-size="9.6" fill="#4c6b22" text-anchor="middle" textLength="4.6" lengthAdjust="spacingAndGlyphs">5</text>
<rect x="704.2" y="1049.7" width="12.8" height="12.4" stroke="#4c6b22" stroke-width="1.3" fill="none"/>
<text x="710.6" y="1058.6" font-size="7.6" fill="#4c6b22" text-anchor="middle">JB</text>
<circle cx="691.7" cy="1080.9" r="7" stroke="#4c6b22" stroke-width="1.1" fill="none"/>
<text x="691.7" y="1084.3" font-size="9.6" fill="#4c6b22" text-anchor="middle" textLength="4.6" lengthAdjust="spacingAndGlyphs">5</text>
<rect x="704.2" y="1074.7" width="12.8" height="12.4" stroke="#4c6b22" stroke-width="1.3" fill="none"/>
<text x="710.6" y="1083.6" font-size="7.6" fill="#4c6b22" text-anchor="middle">JB</text>
<text x="480.2" y="1017.5" font-size="9.2" fill="#9ab76c">MEN</text>
<text x="461.9" y="1029.2" font-size="9.2" fill="#9ab76c">WASHROOM</text>
<rect x="481.5" y="1033.2" width="20.9" height="9.1" stroke="#a9c67c" stroke-width="0.9" fill="none"/>
<text x="491.9" y="1041" font-size="9.2" fill="#9ab76c" text-anchor="middle">173</text>
<text x="618.1" y="1018.3" font-size="9.2" fill="#9ab76c">WOMEN</text>
<text x="606.8" y="1030" font-size="9.2" fill="#9ab76c">WASHROOM</text>
<rect x="625.9" y="1033.9" width="21.4" height="8.9" stroke="#a9c67c" stroke-width="0.9" fill="none"/>
<text x="636.6" y="1041.5" font-size="9.2" fill="#9ab76c" text-anchor="middle">174</text>
<text x="365.3" y="1038.4" font-size="9.6" fill="#4f6d25">RP-02-13</text>
<circle cx="407.6" cy="1024.8" r="4" stroke="#4c6b22" stroke-width="1.1" fill="none"/>
<text x="460.1" y="1057.4" font-size="9.6" fill="#4f6d25">HWT-3</text>
<text x="460.1" y="1069.2" font-size="9.6" fill="#4f6d25">208V/1PH</text>
<text x="460.1" y="1080.2" font-size="9.6" fill="#4f6d25">ERP-06-24, 26</text>
<rect x="468.5" y="1082.8" width="11.7" height="11.7" stroke="#4c6b22" stroke-width="1.3" fill="none"/>
<path d="M474.3 1084L470.3 1092.5L478.3 1092.5Z" stroke="none" stroke-width="0" fill="#4c6b22"/>
<rect x="480.2" y="1084.5" width="9" height="8.5" stroke="#4c6b22" stroke-width="1.2" fill="none"/>
<path d="M489.2 1088.8H492.2V1085.5" stroke="#4c6b22" stroke-width="1" fill="none"/>
<text x="616" y="1062.4" font-size="9.6" fill="#4f6d25">HWT-4</text>
<text x="616" y="1074.4" font-size="9.6" fill="#4f6d25">208V/1PH</text>
<text x="616" y="1086.2" font-size="9.6" fill="#4f6d25">ERP-06-52, 54</text>
<rect x="634.3" y="1092" width="11.7" height="11.7" stroke="#4c6b22" stroke-width="1.3" fill="none"/>
<path d="M640.1 1093.2L636.1 1101.7L644.1 1101.7Z" stroke="none" stroke-width="0" fill="#4c6b22"/>
<rect x="646" y="1094" width="9" height="8.5" stroke="#4c6b22" stroke-width="1.2" fill="none"/>
<path d="M655 1098.2H658V1095" stroke="#4c6b22" stroke-width="1" fill="none"/>
<rect x="352.3" y="1102.3" width="50.4" height="11.3" stroke="#e2468c" stroke-width="1" fill="#e8608a" fill-opacity=".4"/>
<text x="352.5" y="1111" font-size="9.3" fill="#8a6a45">RP-04-45</text>
<path d="M402 1108H408L414 1119" stroke="#4c6b22" stroke-width="1" fill="none"/>
<rect x="415.5" y="1106.5" width="13" height="12.5" stroke="#4c6b22" stroke-width="1.3" fill="none"/>
<text x="422" y="1115.5" font-size="7.6" fill="#4c6b22" text-anchor="middle">JB</text>
<circle cx="437.7" cy="1112.8" r="7" stroke="#4c6b22" stroke-width="1.1" fill="none"/>
<text x="437.7" y="1116.2" font-size="9.6" fill="#4c6b22" text-anchor="middle" textLength="4.6" lengthAdjust="spacingAndGlyphs">4</text>
<text x="451.5" y="1118" font-size="9.6" fill="#4f6d25">HD</text>
<circle cx="453" cy="1102" r="6" stroke="#4c6b22" stroke-width="1.2" fill="none"/>
<path d="M453 1096L447.8 1105L458.2 1105Z" stroke="#4c6b22" stroke-width="1" fill="none"/>
<circle cx="477" cy="1103" r="6.5" stroke="#4c6b22" stroke-width="1.1" fill="none"/>
<text x="477" y="1106.4" font-size="9.6" fill="#4c6b22" text-anchor="middle" textLength="9.2" lengthAdjust="spacingAndGlyphs">13</text>
<text x="525.4" y="1113.6" font-size="9.6" fill="#4f6d25">RP-04-46</text>
<circle cx="581" cy="1100" r="6" stroke="#4c6b22" stroke-width="1.2" fill="none"/>
<path d="M581 1094L575.8 1103L586.2 1103Z" stroke="#4c6b22" stroke-width="1" fill="none"/>
<rect x="590" y="1107" width="12" height="12" stroke="#4c6b22" stroke-width="1.3" fill="none"/>
<text x="596" y="1115.7" font-size="7.6" fill="#4c6b22" text-anchor="middle">JB</text>
<circle cx="676.8" cy="1102.9" r="7" stroke="#4c6b22" stroke-width="1.1" fill="none"/>
<text x="676.8" y="1106.3" font-size="9.6" fill="#4c6b22" text-anchor="middle" textLength="9.2" lengthAdjust="spacingAndGlyphs">13</text>
<circle cx="693" cy="1102.9" r="6.4" stroke="#4c6b22" stroke-width="1.2" fill="none"/>
<path d="M693 1096.5L687.4 1106.1L698.6 1106.1Z" stroke="#4c6b22" stroke-width="1" fill="none"/>
<rect x="722" y="1106" width="13" height="13" stroke="#4c6b22" stroke-width="1.3" fill="none"/>
<text x="728.5" y="1115.2" font-size="7.6" fill="#4c6b22" text-anchor="middle">JB</text>
<rect x="754.9" y="1106.3" width="49.9" height="12.7" stroke="#e2468c" stroke-width="1" fill="#e8608a" fill-opacity=".4"/>
<text x="759.6" y="1115.9" font-size="9.3" fill="#8a6a45">RP-04-48</text>
<path d="M755 1112H735L722 1119" stroke="#4c6b22" stroke-width="1" fill="none"/>
<text x="853.6" y="1095" font-size="9.2" fill="#9ab76c">SECURITY</text>
<text x="849.1" y="1106.3" font-size="9.2" fill="#9ab76c">SCREENING</text>
<rect x="859" y="1110" width="21" height="9" stroke="#a9c67c" stroke-width="0.9" fill="none"/>
<text x="869.5" y="1117.7" font-size="9.2" fill="#9ab76c" text-anchor="middle">144</text>
<rect x="725.6" y="917" width="22.2" height="10.4" stroke="#e2468c" stroke-width="1" fill="#e8608a" fill-opacity=".4"/>
<text x="728" y="925.8" font-size="8.5" fill="#8a6a45">GFI</text>
<rect x="743.9" y="913" width="14.4" height="13.1" stroke="#d6b06e" stroke-width="0.7" fill="#d69a62" fill-opacity=".46"/>
<circle cx="751.1" cy="919.5" r="4" stroke="#6f7a30" stroke-width="1" fill="none"/>
<path d="M750.1 915.5V923.5M752.1 915.5V923.5" stroke="#6f7a30" stroke-width="0.7" fill="none"/>
<circle cx="669.5" cy="931.3" r="7" stroke="#4c6b22" stroke-width="1.1" fill="none"/>
<text x="669.5" y="934.7" font-size="9.6" fill="#4c6b22" text-anchor="middle" textLength="4.6" lengthAdjust="spacingAndGlyphs">7</text>
<text x="678.6" y="936.6" font-size="9.6" fill="#4f6d25">RP-04-11</text>
<rect x="647.3" y="935.2" width="12.5" height="13.1" stroke="#4c6b22" stroke-width="1.3" fill="none"/>
<text x="653.5" y="944.5" font-size="7.6" fill="#4c6b22" text-anchor="middle">JB</text>
<rect x="647.3" y="961.9" width="12.5" height="13.1" stroke="#4c6b22" stroke-width="1.3" fill="none"/>
<text x="653.5" y="971.2" font-size="7.6" fill="#4c6b22" text-anchor="middle">JB</text>
<circle cx="669.5" cy="971" r="7" stroke="#4c6b22" stroke-width="1.1" fill="none"/>
<text x="669.5" y="974.4" font-size="9.6" fill="#4c6b22" text-anchor="middle" textLength="4.6" lengthAdjust="spacingAndGlyphs">7</text>
<text x="680" y="944.4" font-size="9.2" fill="#9ab76c">MEN</text>
<text x="660.4" y="956.1" font-size="9.2" fill="#9ab76c">WASHROOM</text>
<rect x="676" y="957" width="21" height="8.5" stroke="#a9c67c" stroke-width="0.9" fill="none"/>
<text x="686.5" y="964.2" font-size="9.2" fill="#9ab76c" text-anchor="middle">158</text>
<text x="706" y="944.4" font-size="9.6" fill="#4f6d25">HD</text>
<path d="M697 921L725 939" stroke="#4c6b22" stroke-width="1" fill="none"/>
<circle cx="780" cy="926.9" r="7" stroke="#4c6b22" stroke-width="1.1" fill="none"/>
<text x="780" y="930.3" font-size="9.6" fill="#4c6b22" text-anchor="middle" textLength="9.2" lengthAdjust="spacingAndGlyphs">13</text>
<circle cx="728" cy="942.5" r="5.5" stroke="#4c6b22" stroke-width="1.2" fill="none"/>
<path d="M728 937L723.2 945.2L732.8 945.2Z" stroke="#4c6b22" stroke-width="1" fill="none"/>
<circle cx="783" cy="942.5" r="5.5" stroke="#4c6b22" stroke-width="1.2" fill="none"/>
<path d="M783 937L778.2 945.2L787.8 945.2Z" stroke="#4c6b22" stroke-width="1" fill="none"/>
<rect x="726.4" y="954.3" width="20.1" height="8.4" stroke="#e2468c" stroke-width="1" fill="#e8608a" fill-opacity=".4"/>
<text x="728" y="961.5" font-size="8.5" fill="#8a6a45">GFI</text>
<rect x="762.2" y="953.5" width="20.9" height="8.4" stroke="#e2468c" stroke-width="1" fill="#e8608a" fill-opacity=".4"/>
<text x="766" y="961" font-size="8.5" fill="#8a6a45">GFI</text>
<rect x="745.2" y="954.8" width="20.9" height="11" stroke="#d6b06e" stroke-width="0.7" fill="#d69a62" fill-opacity=".46"/>
<circle cx="757.7" cy="960.3" r="4" stroke="#6f7a30" stroke-width="1" fill="none"/>
<path d="M751.7 959.3H761.7M751.7 961.3H761.7" stroke="#6f7a30" stroke-width="0.7" fill="none"/>
<rect x="699.5" y="962.7" width="50.9" height="8.3" stroke="#e2468c" stroke-width="1" fill="#e8608a" fill-opacity=".4"/>
<text x="700.8" y="970" font-size="9.3" fill="#8a6a45">RP-04-52</text>
<rect x="762.2" y="962.7" width="51.4" height="8.3" stroke="#e2468c" stroke-width="1" fill="#e8608a" fill-opacity=".4"/>
<text x="770" y="970" font-size="9.3" fill="#8a6a45">RP-04-50</text>
<text x="706" y="977.8" font-size="9.6" fill="#4f6d25">HD</text>
<text x="677.3" y="986.2" font-size="9.6" fill="#4f6d25">RP-04-12</text>
<circle cx="728.3" cy="978.3" r="6.4" stroke="#4c6b22" stroke-width="1.2" fill="none"/>
<path d="M728.3 971.9L722.7 981.5L733.9 981.5Z" stroke="#4c6b22" stroke-width="1" fill="none"/>
<circle cx="783.6" cy="978.3" r="6.4" stroke="#4c6b22" stroke-width="1.2" fill="none"/>
<path d="M783.6 971.9L778 981.5L789.2 981.5Z" stroke="#4c6b22" stroke-width="1" fill="none"/>
<rect x="740.8" y="971.8" width="13" height="13.1" stroke="#4c6b22" stroke-width="1.3" fill="none"/>
<text x="747.3" y="981" font-size="7.6" fill="#4c6b22" text-anchor="middle">JB</text>
<rect x="757" y="971.8" width="13" height="13.1" stroke="#4c6b22" stroke-width="1.3" fill="none"/>
<text x="763.5" y="981" font-size="7.6" fill="#4c6b22" text-anchor="middle">JB</text>
<text x="792.2" y="977.8" font-size="9.6" fill="#4f6d25">HD</text>
<text x="790" y="986.5" font-size="9.6" fill="#4f6d25">RP-04-14</text>
<circle cx="727.7" cy="994" r="7" stroke="#4c6b22" stroke-width="1.1" fill="none"/>
<text x="727.7" y="997.4" font-size="9.6" fill="#4c6b22" text-anchor="middle" textLength="9.2" lengthAdjust="spacingAndGlyphs">13</text>
<circle cx="746.5" cy="994" r="7" stroke="#4c6b22" stroke-width="1.1" fill="none"/>
<text x="746.5" y="997.4" font-size="9.6" fill="#4c6b22" text-anchor="middle" textLength="4.6" lengthAdjust="spacingAndGlyphs">7</text>
<circle cx="764" cy="994" r="7" stroke="#4c6b22" stroke-width="1.1" fill="none"/>
<text x="764" y="997.4" font-size="9.6" fill="#4c6b22" text-anchor="middle" textLength="4.6" lengthAdjust="spacingAndGlyphs">8</text>
<circle cx="784.4" cy="994" r="7" stroke="#4c6b22" stroke-width="1.1" fill="none"/>
<text x="784.4" y="997.4" font-size="9.6" fill="#4c6b22" text-anchor="middle" textLength="9.2" lengthAdjust="spacingAndGlyphs">13</text>
<circle cx="865.8" cy="925.3" r="7" stroke="#4c6b22" stroke-width="1.1" fill="none"/>
<text x="865.8" y="928.7" font-size="9.6" fill="#4c6b22" text-anchor="middle" textLength="4.6" lengthAdjust="spacingAndGlyphs">8</text>
<rect x="876.3" y="919" width="13" height="13" stroke="#4c6b22" stroke-width="1.3" fill="none"/>
<text x="882.8" y="928.2" font-size="7.6" fill="#4c6b22" text-anchor="middle">JB</text>
<rect x="876.3" y="968" width="13" height="13" stroke="#4c6b22" stroke-width="1.3" fill="none"/>
<text x="882.8" y="977.2" font-size="7.6" fill="#4c6b22" text-anchor="middle">JB</text>
<circle cx="866" cy="975" r="6.5" stroke="#4c6b22" stroke-width="1.1" fill="none"/>
<text x="866" y="978.4" font-size="9.6" fill="#4c6b22" text-anchor="middle" textLength="4.6" lengthAdjust="spacingAndGlyphs">8</text>
<path d="M821.7 989.5L817.3 998.9L826.1 998.9Z" stroke="none" stroke-width="0" fill="none"/>
<path d="M821.700 989L817 999H826.500Z" stroke="#4c6b22" stroke-width="1.1" fill="none"/>
<rect x="826.2" y="988" width="13" height="12.5" stroke="#d6b06e" stroke-width="0.7" fill="#d69a62" fill-opacity=".46"/>
<circle cx="832.7" cy="994.2" r="4" stroke="#6f7a30" stroke-width="1" fill="none"/>
<path d="M831.7 990.2V998.2M833.7 990.2V998.2" stroke="#6f7a30" stroke-width="0.7" fill="none"/>
<rect x="801.9" y="1001" width="45.1" height="11.3" stroke="#e2468c" stroke-width="1" fill="#e8608a" fill-opacity=".4"/>
<text x="804.8" y="1010.4" font-size="9.3" fill="#8a6a45">RP-04-54</text>
<rect x="865.8" y="1000.5" width="51.5" height="12.3" stroke="#e2468c" stroke-width="1" fill="#e8608a" fill-opacity=".4"/>
<text x="868.7" y="1010.6" font-size="9.3" fill="#8a6a45">ERP-08-27</text>
<path d="M883.900 989L879 999H888.500Z" stroke="#4c6b22" stroke-width="1.1" fill="none"/>
<rect x="887.8" y="988" width="13.6" height="12.5" stroke="#d6b06e" stroke-width="0.7" fill="#d69a62" fill-opacity=".46"/>
<circle cx="894.6" cy="994.2" r="4" stroke="#6f7a30" stroke-width="1" fill="none"/>
<path d="M893.6 990.2V998.2M895.6 990.2V998.2" stroke="#6f7a30" stroke-width="0.7" fill="none"/>
<rect x="800" y="1044.4" width="71.9" height="22.7" stroke="#a9c67c" stroke-width="0.8" fill="none"/>
<path d="M801.5 1044.4L801.5 1067.1" stroke="#8fae5c" stroke-width="0.7"/>
<path d="M803.4 1044.4L803.4 1067.1" stroke="#8fae5c" stroke-width="0.7"/>
<path d="M805.3 1044.4L805.3 1067.1" stroke="#8fae5c" stroke-width="0.7"/>
<path d="M807.2 1044.4L807.2 1067.1" stroke="#8fae5c" stroke-width="0.7"/>
<path d="M809.1 1044.4L809.1 1067.1" stroke="#8fae5c" stroke-width="0.7"/>
<path d="M811 1044.4L811 1067.1" stroke="#8fae5c" stroke-width="0.7"/>
<path d="M812.9 1044.4L812.9 1067.1" stroke="#8fae5c" stroke-width="0.7"/>
<path d="M814.8 1044.4L814.8 1067.1" stroke="#8fae5c" stroke-width="0.7"/>
<path d="M816.7 1044.4L816.7 1067.1" stroke="#8fae5c" stroke-width="0.7"/>
<path d="M818.6 1044.4L818.6 1067.1" stroke="#8fae5c" stroke-width="0.7"/>
<path d="M820.5 1044.4L820.5 1067.1" stroke="#8fae5c" stroke-width="0.7"/>
<path d="M822.4 1044.4L822.4 1067.1" stroke="#8fae5c" stroke-width="0.7"/>
<path d="M824.3 1044.4L824.3 1067.1" stroke="#8fae5c" stroke-width="0.7"/>
<path d="M826.2 1044.4L826.2 1067.1" stroke="#8fae5c" stroke-width="0.7"/>
<path d="M828.1 1044.4L828.1 1067.1" stroke="#8fae5c" stroke-width="0.7"/>
<path d="M830 1044.4L830 1067.1" stroke="#8fae5c" stroke-width="0.7"/>
<path d="M831.9 1044.4L831.9 1067.1" stroke="#8fae5c" stroke-width="0.7"/>
<path d="M833.8 1044.4L833.8 1067.1" stroke="#8fae5c" stroke-width="0.7"/>
<path d="M835.7 1044.4L835.7 1067.1" stroke="#8fae5c" stroke-width="0.7"/>
<path d="M837.6 1044.4L837.6 1067.1" stroke="#8fae5c" stroke-width="0.7"/>
<path d="M839.5 1044.4L839.5 1067.1" stroke="#8fae5c" stroke-width="0.7"/>
<path d="M841.4 1044.4L841.4 1067.1" stroke="#8fae5c" stroke-width="0.7"/>
<path d="M843.3 1044.4L843.3 1067.1" stroke="#8fae5c" stroke-width="0.7"/>
<path d="M845.2 1044.4L845.2 1067.1" stroke="#8fae5c" stroke-width="0.7"/>
<path d="M847.1 1044.4L847.1 1067.1" stroke="#8fae5c" stroke-width="0.7"/>
<path d="M849 1044.4L849 1067.1" stroke="#8fae5c" stroke-width="0.7"/>
<path d="M850.9 1044.4L850.9 1067.1" stroke="#8fae5c" stroke-width="0.7"/>
<path d="M852.8 1044.4L852.8 1067.1" stroke="#8fae5c" stroke-width="0.7"/>
<path d="M854.7 1044.4L854.7 1067.1" stroke="#8fae5c" stroke-width="0.7"/>
<path d="M856.6 1044.4L856.6 1067.1" stroke="#8fae5c" stroke-width="0.7"/>
<path d="M858.5 1044.4L858.5 1067.1" stroke="#8fae5c" stroke-width="0.7"/>
<path d="M860.4 1044.4L860.4 1067.1" stroke="#8fae5c" stroke-width="0.7"/>
<path d="M862.3 1044.4L862.3 1067.1" stroke="#8fae5c" stroke-width="0.7"/>
<path d="M864.2 1044.4L864.2 1067.1" stroke="#8fae5c" stroke-width="0.7"/>
<path d="M866.1 1044.4L866.1 1067.1" stroke="#8fae5c" stroke-width="0.7"/>
<path d="M868 1044.4L868 1067.1" stroke="#8fae5c" stroke-width="0.7"/>
<path d="M869.9 1044.4L869.9 1067.1" stroke="#8fae5c" stroke-width="0.7"/>
<path d="M871.8 1044.4L871.8 1067.1" stroke="#8fae5c" stroke-width="0.7"/>
<path d="M836 1042L836 1069" stroke="#a9c67c" stroke-width="1.5"/>
<rect x="988.4" y="1044.4" width="71.2" height="22.7" stroke="#a9c67c" stroke-width="0.8" fill="none"/>
<path d="M989.9 1044.4L989.9 1067.1" stroke="#8fae5c" stroke-width="0.7"/>
<path d="M991.8 1044.4L991.8 1067.1" stroke="#8fae5c" stroke-width="0.7"/>
<path d="M993.7 1044.4L993.7 1067.1" stroke="#8fae5c" stroke-width="0.7"/>
<path d="M995.6 1044.4L995.6 1067.1" stroke="#8fae5c" stroke-width="0.7"/>
<path d="M997.5 1044.4L997.5 1067.1" stroke="#8fae5c" stroke-width="0.7"/>
<path d="M999.4 1044.4L999.4 1067.1" stroke="#8fae5c" stroke-width="0.7"/>
<path d="M1001.3 1044.4L1001.3 1067.1" stroke="#8fae5c" stroke-width="0.7"/>
<path d="M1003.2 1044.4L1003.2 1067.1" stroke="#8fae5c" stroke-width="0.7"/>
<path d="M1005.1 1044.4L1005.1 1067.1" stroke="#8fae5c" stroke-width="0.7"/>
<path d="M1007 1044.4L1007 1067.1" stroke="#8fae5c" stroke-width="0.7"/>
<path d="M1008.9 1044.4L1008.9 1067.1" stroke="#8fae5c" stroke-width="0.7"/>
<path d="M1010.8 1044.4L1010.8 1067.1" stroke="#8fae5c" stroke-width="0.7"/>
<path d="M1012.7 1044.4L1012.7 1067.1" stroke="#8fae5c" stroke-width="0.7"/>
<path d="M1014.6 1044.4L1014.6 1067.1" stroke="#8fae5c" stroke-width="0.7"/>
<path d="M1016.5 1044.4L1016.5 1067.1" stroke="#8fae5c" stroke-width="0.7"/>
<path d="M1018.4 1044.4L1018.4 1067.1" stroke="#8fae5c" stroke-width="0.7"/>
<path d="M1020.3 1044.4L1020.3 1067.1" stroke="#8fae5c" stroke-width="0.7"/>
<path d="M1022.2 1044.4L1022.2 1067.1" stroke="#8fae5c" stroke-width="0.7"/>
<path d="M1024.1 1044.4L1024.1 1067.1" stroke="#8fae5c" stroke-width="0.7"/>
<path d="M1026 1044.4L1026 1067.1" stroke="#8fae5c" stroke-width="0.7"/>
<path d="M1027.9 1044.4L1027.9 1067.1" stroke="#8fae5c" stroke-width="0.7"/>
<path d="M1029.8 1044.4L1029.8 1067.1" stroke="#8fae5c" stroke-width="0.7"/>
<path d="M1031.7 1044.4L1031.7 1067.1" stroke="#8fae5c" stroke-width="0.7"/>
<path d="M1033.6 1044.4L1033.6 1067.1" stroke="#8fae5c" stroke-width="0.7"/>
<path d="M1035.5 1044.4L1035.5 1067.1" stroke="#8fae5c" stroke-width="0.7"/>
<path d="M1037.4 1044.4L1037.4 1067.1" stroke="#8fae5c" stroke-width="0.7"/>
<path d="M1039.3 1044.4L1039.3 1067.1" stroke="#8fae5c" stroke-width="0.7"/>
<path d="M1041.2 1044.4L1041.2 1067.1" stroke="#8fae5c" stroke-width="0.7"/>
<path d="M1043.1 1044.4L1043.1 1067.1" stroke="#8fae5c" stroke-width="0.7"/>
<path d="M1045 1044.4L1045 1067.1" stroke="#8fae5c" stroke-width="0.7"/>
<path d="M1046.9 1044.4L1046.9 1067.1" stroke="#8fae5c" stroke-width="0.7"/>
<path d="M1048.8 1044.4L1048.8 1067.1" stroke="#8fae5c" stroke-width="0.7"/>
<path d="M1050.7 1044.4L1050.7 1067.1" stroke="#8fae5c" stroke-width="0.7"/>
<path d="M1052.6 1044.4L1052.6 1067.1" stroke="#8fae5c" stroke-width="0.7"/>
<path d="M1054.5 1044.4L1054.5 1067.1" stroke="#8fae5c" stroke-width="0.7"/>
<path d="M1056.4 1044.4L1056.4 1067.1" stroke="#8fae5c" stroke-width="0.7"/>
<path d="M1058.3 1044.4L1058.3 1067.1" stroke="#8fae5c" stroke-width="0.7"/>
<path d="M1024 1042L1024 1069" stroke="#a9c67c" stroke-width="1.5"/>
<rect x="760" y="1025" width="40" height="60" stroke="#a9c67c" stroke-width="0.8" fill="none"/>
<rect x="872" y="1040" width="20" height="30" stroke="#a9c67c" stroke-width="0.7" fill="none"/>
<rect x="1060" y="1025" width="18" height="45" stroke="#a9c67c" stroke-width="0.7" fill="none"/>
<rect x="894" y="1040" width="94" height="28" stroke="#a9c67c" stroke-width="0.7" fill="none"/>
<rect x="915" y="1030" width="60" height="48" stroke="#a9c67c" stroke-width="0.7" fill="none"/>
<rect x="934.8" y="857.8" width="52.2" height="12.5" stroke="#e2468c" stroke-width="1" fill="#e8608a" fill-opacity=".4"/>
<text x="939.5" y="866.4" font-size="9.3" fill="#8a6a45">ERP-08-07</text>
<rect x="971.9" y="870.3" width="14.6" height="10.4" stroke="#8cc070" stroke-width="0.8" fill="#8cc86f" fill-opacity=".6"/>
<circle cx="979.2" cy="875.5" r="4" stroke="#4f7a35" stroke-width="1" fill="none"/>
<path d="M977.7 871.5V881.5M980.7 871.5V881.5M973.2 874.2H985.2M973.2 876.8H985.2" stroke="#4f7a35" stroke-width="0.7" fill="none"/>
<circle cx="1007" cy="863" r="1.8" stroke="none" stroke-width="0" fill="#a9c67c"/>
<text x="921" y="878.1" font-size="9.2" fill="#9ab76c">CATSA</text>
<text x="921" y="889" font-size="9.2" fill="#9ab76c">OFFICE</text>
<rect x="927.5" y="891.2" width="21.7" height="8.6" stroke="#a9c67c" stroke-width="0.9" fill="none"/>
<text x="938.4" y="898.5" font-size="9.2" fill="#9ab76c" text-anchor="middle">160</text>
<path d="M982 882.5L977.6 891.9L986.4 891.9Z" stroke="none" stroke-width="0" fill="#4c6b22"/>
<rect x="903" y="902.9" width="57.2" height="10.5" stroke="#e2468c" stroke-width="1" fill="#e8608a" fill-opacity=".4"/>
<text x="907.4" y="911.5" font-size="9.3" fill="#8a6a45">ERP-08-07</text>
<rect x="951" y="901.6" width="13.1" height="11.4" stroke="#d6b06e" stroke-width="0.7" fill="#d69a62" fill-opacity=".46"/>
<circle cx="959.5" cy="907.3" r="4" stroke="#6f7a30" stroke-width="1" fill="none"/>
<path d="M953.5 906.3H963.5M953.5 908.3H963.5" stroke="#6f7a30" stroke-width="0.7" fill="none"/>
<rect x="1069.3" y="848.9" width="24.8" height="11.7" stroke="#e2468c" stroke-width="1" fill="#e8608a" fill-opacity=".4"/>
<text x="1078" y="858.5" font-size="8.8" fill="#8a6a45">GFI</text>
<rect x="1065.4" y="852" width="13" height="11.8" stroke="#d6b06e" stroke-width="0.7" fill="#d69a62" fill-opacity=".46"/>
<circle cx="1071.9" cy="857.9" r="4" stroke="#6f7a30" stroke-width="1" fill="none"/>
<path d="M1070.9 853.9V861.9M1072.9 853.9V861.9" stroke="#6f7a30" stroke-width="0.7" fill="none"/>
<text x="1028.8" y="902.9" font-size="9.2" fill="#9ab76c">SEARCH</text>
<rect x="1032" y="906" width="22" height="8.5" stroke="#a9c67c" stroke-width="0.9" fill="none"/>
<text x="1043" y="913.2" font-size="9.2" fill="#9ab76c" text-anchor="middle">146</text>
<rect x="1019.7" y="931.3" width="17" height="11.8" stroke="#d6b06e" stroke-width="0.7" fill="#d69a62" fill-opacity=".46"/>
<circle cx="1030.2" cy="937.2" r="4" stroke="#6f7a30" stroke-width="1" fill="none"/>
<path d="M1024.2 936.2H1034.2M1024.2 938.2H1034.2" stroke="#6f7a30" stroke-width="0.7" fill="none"/>
<rect x="1023.1" y="938.6" width="52.7" height="13.1" stroke="#e2468c" stroke-width="1" fill="#e8608a" fill-opacity=".4"/>
<text x="1026.7" y="950.1" font-size="9.3" fill="#8a6a45">ERP-08-07</text>
<g stroke="#4c6b22" stroke-width="1.200" fill="none"><rect x="1118.300" y="878.600" width="6.400" height="12.600"/><path d="M1121.500 897.700L1118.500 891.200H1124.500Z"/></g>
<path d="M1088 880Q1095 905 1121 902Q1150 905 1156 880" stroke="#a9c67c" stroke-width="0.7" fill="none"/>
<text x="1094.6" y="914.7" font-size="9.6" fill="#4f6d25">DM</text>
<text x="1062.8" y="924" font-size="9.6" fill="#4f6d25">ERP-10-03</text>
<circle cx="1118.1" cy="914.5" r="6.4" stroke="#4c6b22" stroke-width="1.2" fill="none"/>
<path d="M1118.1 908.1L1112.5 917.7L1123.7 917.7Z" stroke="#4c6b22" stroke-width="1" fill="none"/>
<rect x="1124.5" y="910" width="9" height="8.5" stroke="#4c6b22" stroke-width="1.2" fill="none"/>
<path d="M1133.5 914.2H1136.5V911" stroke="#4c6b22" stroke-width="1" fill="none"/>
<rect x="1138.5" y="908.5" width="13" height="12.5" stroke="#4c6b22" stroke-width="1.3" fill="none"/>
<text x="1145" y="917.5" font-size="7.6" fill="#4c6b22" text-anchor="middle">ML</text>
<path d="M1112 919Q1125 935 1152 927" stroke="#4c6b22" stroke-width="1" fill="none"/>
<rect x="1152.8" y="921.4" width="8.6" height="8.6" stroke="#4c6b22" stroke-width="1.2" fill="none"/>
<circle cx="1157.1" cy="925.7" r="1.3" stroke="none" stroke-width="0" fill="#4c6b22"/>
<rect x="1147.6" y="932.6" width="13.9" height="7.9" stroke="#4c6b22" stroke-width="1.3" fill="none"/>
<text x="1154.5" y="939.2" font-size="7.6" fill="#4c6b22" text-anchor="middle">CR</text>
<text x="1169.8" y="919.6" font-size="9.6" fill="#4f6d25">C</text>
<rect x="1167.2" y="921.4" width="12.5" height="12" stroke="#4c6b22" stroke-width="1.3" fill="none"/>
<text x="1173.5" y="930.1" font-size="7.6" fill="#4c6b22" text-anchor="middle">JB</text>
<circle cx="1204.5" cy="913.6" r="7" stroke="#4c6b22" stroke-width="1.1" fill="none"/>
<text x="1204.5" y="917" font-size="9.6" fill="#4c6b22" text-anchor="middle" textLength="9.2" lengthAdjust="spacingAndGlyphs">10</text>
<text x="1184.2" y="931.3" font-size="9.6" fill="#4f6d25">RP-04-57,59,61</text>
<text x="947.4" y="973.1" font-size="9.6" fill="#4f6d25">ERP-08-07</text>
<rect x="945.3" y="975.2" width="13" height="12.3" stroke="#d6b06e" stroke-width="0.7" fill="#d69a62" fill-opacity=".46"/>
<circle cx="951.8" cy="981.4" r="4" stroke="#6f7a30" stroke-width="1" fill="none"/>
<path d="M950.8 977.4V985.4M952.8 977.4V985.4" stroke="#6f7a30" stroke-width="0.7" fill="none"/>
<path d="M987.600 989L983 999H992.500Z" stroke="#4c6b22" stroke-width="1.1" fill="none"/>
<rect x="992.3" y="988" width="12.5" height="12.5" stroke="#d6b06e" stroke-width="0.7" fill="#d69a62" fill-opacity=".46"/>
<circle cx="998.5" cy="994.2" r="4" stroke="#6f7a30" stroke-width="1" fill="none"/>
<path d="M997.5 990.2V998.2M999.5 990.2V998.2" stroke="#6f7a30" stroke-width="0.7" fill="none"/>
<rect x="912.6" y="980.9" width="13.1" height="12.6" stroke="#4c6b22" stroke-width="1.3" fill="none"/>
<text transform="translate(916.6,987.2) rotate(90)" font-size="7.6" fill="#4c6b22" text-anchor="middle">A2</text>
<rect x="934" y="990" width="14.7" height="8.4" stroke="#4c6b22" stroke-width="1.3" fill="none"/>
<text x="941.4" y="996.9" font-size="7.6" fill="#4c6b22" text-anchor="middle">CR</text>
<rect x="971.4" y="999.7" width="52.2" height="13.1" stroke="#e2468c" stroke-width="1" fill="#e8608a" fill-opacity=".4"/>
<text x="974.5" y="1010.4" font-size="9.3" fill="#8a6a45">RP-04-54</text>
<text x="1094.6" y="1021.4" font-size="9.2" fill="#9ab76c">CORRIDOR</text>
<rect x="1111" y="1024.5" width="20.4" height="8.7" stroke="#a9c67c" stroke-width="0.9" fill="none"/>
<text x="1121.2" y="1031.9" font-size="9.2" fill="#9ab76c" text-anchor="middle">149</text>
<rect x="933.5" y="1039.2" width="14.4" height="7.8" stroke="#4c6b22" stroke-width="1.3" fill="none"/>
<text x="940.7" y="1045.8" font-size="7.6" fill="#4c6b22" text-anchor="middle">PB</text>
<rect x="924.4" y="1051.4" width="13" height="13.1" stroke="#4c6b22" stroke-width="1.4" fill="none"/>
<path d="M930.9 1053L926.9 1061.5L934.9 1061.5Z" stroke="none" stroke-width="0" fill="#4c6b22"/>
<rect x="937.4" y="1051.4" width="13.1" height="13.1" stroke="#4c6b22" stroke-width="1.4" fill="none"/>
<path d="M944 1062.5L940 1054L948 1054Z" stroke="none" stroke-width="0" fill="none"/>
<path d="M944 1062.500L940 1054H948Z" stroke="#4c6b22" stroke-width="1.1" fill="none"/>
<rect x="893" y="1045" width="32" height="24" stroke="#a9c67c" stroke-width="0.7" fill="none"/>
<rect x="907" y="1036" width="30" height="40" stroke="#a9c67c" stroke-width="0.7" fill="none"/>
<text x="922" y="1081" font-size="9.6" fill="#4f6d25">ERP-08-27</text>
<rect x="929.1" y="1091.9" width="16.7" height="16.2" stroke="#6b6a2a" stroke-width="1.6" fill="#d69a62" fill-opacity=".46"/>
<circle cx="937.5" cy="1100" r="4" stroke="#6f7a30" stroke-width="1" fill="none"/>
<path d="M936.5 1096V1104M938.5 1096V1104" stroke="#6f7a30" stroke-width="0.7" fill="none"/>
<rect x="936.1" y="1096.3" width="67.4" height="10" stroke="#e2468c" stroke-width="1" fill="#e8608a" fill-opacity=".4"/>
<text x="950.5" y="1104.2" font-size="9.3" fill="#8a6a45">ERP-08-27</text>
<text x="880" y="1095" font-size="9.2" fill="#9ab76c">RITY</text>
<text x="880" y="1106.3" font-size="9.2" fill="#9ab76c">ENING</text>
<rect x="1146.3" y="1080.7" width="16.5" height="12" stroke="#d6b06e" stroke-width="0.7" fill="#d69a62" fill-opacity=".46"/>
<circle cx="1156.5" cy="1086.7" r="4" stroke="#6f7a30" stroke-width="1" fill="none"/>
<path d="M1150.5 1085.7H1160.5M1150.5 1087.7H1160.5" stroke="#6f7a30" stroke-width="0.7" fill="none"/>
<text x="1252.6" y="872.9" font-size="9.2" fill="#9ab76c" text-anchor="middle">RETAIL</text>
<text x="1252.6" y="883.9" font-size="9.2" fill="#9ab76c" text-anchor="middle">TENANT</text>
<rect x="1243.7" y="886.5" width="21.4" height="8.6" stroke="#a9c67c" stroke-width="0.9" fill="none"/>
<text x="1254.4" y="893.8" font-size="9.2" fill="#9ab76c" text-anchor="middle">148</text>
<circle cx="1305.6" cy="899.5" r="17.2" stroke="#4c6b22" stroke-width="1.1" fill="none"/>
<path d="M1288.4 899.5L1322.8 899.5" stroke="#4c6b22" stroke-width="1"/>
<text x="1305.6" y="895.6" font-size="8.5" fill="#4f6d25" text-anchor="middle">2</text>
<text x="1305.6" y="910.2" font-size="8.5" fill="#4f6d25" text-anchor="middle">E-112</text>
<path d="M1305.6 916.7L1305.6 937.9" stroke="#4c6b22" stroke-width="1"/>
<rect x="1197.2" y="951.7" width="54.9" height="10.2" stroke="#e2468c" stroke-width="1" fill="#e8608a" fill-opacity=".4"/>
<text x="1199.1" y="959.5" font-size="9.3" fill="#8a6a45">ERP-08-10</text>
<rect x="1244.8" y="954.3" width="15.1" height="11" stroke="#d6b06e" stroke-width="0.7" fill="#d69a62" fill-opacity=".46"/>
<circle cx="1252.3" cy="959.8" r="4" stroke="#6f7a30" stroke-width="1" fill="none"/>
<path d="M1251.3 955.8V963.8M1253.3 955.8V963.8" stroke="#6f7a30" stroke-width="0.7" fill="none"/>
<rect x="1262.200" y="940.200" width="79.500" height="89.400" rx="11" stroke="#4c6b22" stroke-width="4.400" fill="none" stroke-dasharray="58 3 5 3 5 3 36 3 5 3 5 3"/>
<text x="1271.6" y="957.4" font-size="9.2" fill="#9ab76c">CENTRAL IT</text>
<rect x="1291.2" y="960.6" width="20.9" height="8.6" stroke="#a9c67c" stroke-width="0.9" fill="none"/>
<text x="1301.7" y="967.9" font-size="9.2" fill="#9ab76c" text-anchor="middle">147</text>
<text x="1194.6" y="975.2" font-size="9.2" fill="#9ab76c">NAVCAN</text>
<text x="1181.6" y="985.6" font-size="9.2" fill="#9ab76c">PARTS ROOM</text>
<rect x="1203" y="989" width="21" height="8.5" stroke="#a9c67c" stroke-width="0.9" fill="none"/>
<text x="1213.5" y="996.2" font-size="9.2" fill="#9ab76c" text-anchor="middle">177</text>
<rect x="1195.4" y="1007" width="54.6" height="10" stroke="#e2468c" stroke-width="1" fill="#e8608a" fill-opacity=".4"/>
<text x="1197" y="1014.9" font-size="9.3" fill="#8a6a45">ERP-08-10</text>
<rect x="1227.3" y="1017.5" width="13.8" height="13" stroke="#d6b06e" stroke-width="0.7" fill="#d69a62" fill-opacity=".46"/>
<circle cx="1234.2" cy="1024" r="4" stroke="#6f7a30" stroke-width="1" fill="none"/>
<path d="M1233.2 1020V1028M1235.2 1020V1028" stroke="#6f7a30" stroke-width="0.7" fill="none"/>
<rect x="1158.1" y="1004.4" width="13" height="13.1" stroke="#4c6b22" stroke-width="1.3" fill="none"/>
<text transform="translate(1162,1011) rotate(90)" font-size="7.6" fill="#4c6b22" text-anchor="middle">A2</text>
<rect x="1152" y="983" width="10" height="14.4" stroke="#4c6b22" stroke-width="1.3" fill="none"/>
<text transform="translate(1154.4,990.2) rotate(90)" font-size="6.5" fill="#4c6b22" text-anchor="middle">CR</text>
<path d="M1171 1004Q1190 1006 1192 1026" stroke="#a9c67c" stroke-width="0.7" fill="none"/>
<rect x="1344.8" y="1005.2" width="12.5" height="13.1" stroke="#4c6b22" stroke-width="1.3" fill="none"/>
<text transform="translate(1348.5,1011.8) rotate(90)" font-size="7.6" fill="#4c6b22" text-anchor="middle">A2</text>
<rect x="1344.8" y="1024" width="9.1" height="14.4" stroke="#4c6b22" stroke-width="1.3" fill="none"/>
<text transform="translate(1346.8,1031.2) rotate(90)" font-size="6.5" fill="#4c6b22" text-anchor="middle">CR</text>
<clipPath id="hb2"><rect x="1344" y="993.500" width="155.300" height="8.300"/></clipPath>
<rect x="1344" y="993.5" width="155.3" height="8.3" stroke="#4c6b22" stroke-width="1.1" fill="none"/>
<g clip-path="url(#hb2)" stroke="#4c6b22" stroke-width="1">
<path d="M1340 1001.800L1345 993.500"/>
<path d="M1343 1001.800L1348 993.500"/>
<path d="M1346 1001.800L1351 993.500"/>
<path d="M1349 1001.800L1354 993.500"/>
<path d="M1352 1001.800L1357 993.500"/>
<path d="M1355 1001.800L1360 993.500"/>
<path d="M1358 1001.800L1363 993.500"/>
<path d="M1361 1001.800L1366 993.500"/>
<path d="M1364 1001.800L1369 993.500"/>
<path d="M1367 1001.800L1372 993.500"/>
<path d="M1370 1001.800L1375 993.500"/>
<path d="M1373 1001.800L1378 993.500"/>
<path d="M1376 1001.800L1381 993.500"/>
<path d="M1379 1001.800L1384 993.500"/>
<path d="M1382 1001.800L1387 993.500"/>
<path d="M1385 1001.800L1390 993.500"/>
<path d="M1388 1001.800L1393 993.500"/>
<path d="M1391 1001.800L1396 993.500"/>
<path d="M1394 1001.800L1399 993.500"/>
<path d="M1397 1001.800L1402 993.500"/>
<path d="M1400 1001.800L1405 993.500"/>
<path d="M1403 1001.800L1408 993.500"/>
<path d="M1406 1001.800L1411 993.500"/>
<path d="M1409 1001.800L1414 993.500"/>
<path d="M1412 1001.800L1417 993.500"/>
<path d="M1415 1001.800L1420 993.500"/>
<path d="M1418 1001.800L1423 993.500"/>
<path d="M1421 1001.800L1426 993.500"/>
<path d="M1424 1001.800L1429 993.500"/>
<path d="M1427 1001.800L1432 993.500"/>
<path d="M1430 1001.800L1435 993.500"/>
<path d="M1433 1001.800L1438 993.500"/>
<path d="M1436 1001.800L1441 993.500"/>
<path d="M1439 1001.800L1444 993.500"/>
<path d="M1442 1001.800L1447 993.500"/>
<path d="M1445 1001.800L1450 993.500"/>
<path d="M1448 1001.800L1453 993.500"/>
<path d="M1451 1001.800L1456 993.500"/>
<path d="M1454 1001.800L1459 993.500"/>
<path d="M1457 1001.800L1462 993.500"/>
<path d="M1460 1001.800L1465 993.500"/>
<path d="M1463 1001.800L1468 993.500"/>
<path d="M1466 1001.800L1471 993.500"/>
<path d="M1469 1001.800L1474 993.500"/>
<path d="M1472 1001.800L1477 993.500"/>
<path d="M1475 1001.800L1480 993.500"/>
<path d="M1478 1001.800L1483 993.500"/>
<path d="M1481 1001.800L1486 993.500"/>
<path d="M1484 1001.800L1489 993.500"/>
<path d="M1487 1001.800L1492 993.500"/>
<path d="M1490 1001.800L1495 993.500"/>
<path d="M1493 1001.800L1498 993.500"/>
<path d="M1496 1001.800L1501 993.500"/>
<path d="M1499 1001.800L1504 993.500"/>
<path d="M1502 1001.800L1507 993.500"/>
<path d="M1505 1001.800L1510 993.500"/>
</g>
<circle cx="1463.6" cy="982.2" r="7" stroke="#4c6b22" stroke-width="1.1" fill="none"/>
<text x="1463.6" y="985.6" font-size="9.6" fill="#4c6b22" text-anchor="middle" textLength="4.6" lengthAdjust="spacingAndGlyphs">3</text>
<circle cx="1419.2" cy="1009.7" r="6.4" stroke="#4c6b22" stroke-width="1.2" fill="none"/>
<path d="M1419.2 1003.3L1413.6 1012.9L1424.8 1012.9Z" stroke="#4c6b22" stroke-width="1" fill="none"/>
<text x="1431.7" y="1013.6" font-size="9.6" fill="#4f6d25">ERP-14-56</text>
<path d="M1407.4 966L1430.9 966" stroke="#9dba6b" stroke-width="0.7"/>
<path d="M1407.4 968L1430.9 968" stroke="#9dba6b" stroke-width="0.7"/>
<path d="M1407.4 970L1430.9 970" stroke="#9dba6b" stroke-width="0.7"/>
<path d="M1407.4 972L1430.9 972" stroke="#9dba6b" stroke-width="0.7"/>
<path d="M1407.4 974L1430.9 974" stroke="#9dba6b" stroke-width="0.7"/>
<path d="M1407.4 976L1430.9 976" stroke="#9dba6b" stroke-width="0.7"/>
<path d="M1407.4 978L1430.9 978" stroke="#9dba6b" stroke-width="0.7"/>
<path d="M1407.4 980L1430.9 980" stroke="#9dba6b" stroke-width="0.7"/>
<path d="M1407.4 982L1430.9 982" stroke="#9dba6b" stroke-width="0.7"/>
<path d="M1407.4 984L1430.9 984" stroke="#9dba6b" stroke-width="0.7"/>
<path d="M1407.4 986L1430.9 986" stroke="#9dba6b" stroke-width="0.7"/>
<path d="M1407.4 988L1430.9 988" stroke="#9dba6b" stroke-width="0.7"/>
<path d="M1407.4 990L1430.9 990" stroke="#9dba6b" stroke-width="0.7"/>
<path d="M1407.4 992L1430.9 992" stroke="#9dba6b" stroke-width="0.7"/>
<path d="M1407.4 994L1430.9 994" stroke="#9dba6b" stroke-width="0.7"/>
<path d="M1407.4 996L1430.9 996" stroke="#9dba6b" stroke-width="0.7"/>
<path d="M1407.4 998L1430.9 998" stroke="#9dba6b" stroke-width="0.7"/>
<path d="M1407.4 1000L1430.9 1000" stroke="#9dba6b" stroke-width="0.7"/>
<path d="M1407.4 1002L1430.9 1002" stroke="#9dba6b" stroke-width="0.7"/>
<path d="M1407.4 1004L1430.9 1004" stroke="#9dba6b" stroke-width="0.7"/>
<path d="M1407.4 1006L1430.9 1006" stroke="#9dba6b" stroke-width="0.7"/>
<path d="M1407.4 1008L1430.9 1008" stroke="#9dba6b" stroke-width="0.7"/>
<path d="M1407.4 1010L1430.9 1010" stroke="#9dba6b" stroke-width="0.7"/>
<path d="M1407.4 1012L1430.9 1012" stroke="#9dba6b" stroke-width="0.7"/>
<path d="M1407.4 1014L1430.9 1014" stroke="#9dba6b" stroke-width="0.7"/>
<path d="M1407.4 1016L1430.9 1016" stroke="#9dba6b" stroke-width="0.7"/>
<path d="M1407.4 1018L1430.9 1018" stroke="#9dba6b" stroke-width="0.7"/>
<path d="M1407.4 1020L1430.9 1020" stroke="#9dba6b" stroke-width="0.7"/>
<path d="M1407.4 1022L1430.9 1022" stroke="#9dba6b" stroke-width="0.7"/>
<path d="M1407.4 1024L1430.9 1024" stroke="#9dba6b" stroke-width="0.7"/>
<path d="M1407.4 1026L1430.9 1026" stroke="#9dba6b" stroke-width="0.7"/>
<path d="M1407.4 1028L1430.9 1028" stroke="#9dba6b" stroke-width="0.7"/>
<path d="M1407.4 1030L1430.9 1030" stroke="#9dba6b" stroke-width="0.7"/>
<path d="M1407.4 1032L1430.9 1032" stroke="#9dba6b" stroke-width="0.7"/>
<path d="M1407.4 1034L1430.9 1034" stroke="#9dba6b" stroke-width="0.7"/>
<path d="M1407.4 1036L1430.9 1036" stroke="#9dba6b" stroke-width="0.7"/>
<rect x="1485.7" y="957.4" width="10" height="14.4" stroke="#4c6b22" stroke-width="1.3" fill="none"/>
<text transform="translate(1488.1,964.6) rotate(90)" font-size="6.5" fill="#4c6b22" text-anchor="middle">CR</text>
<path d="M1350 950Q1352 940 1362 939.500H1420Q1440 938 1450 925Q1460 915 1500 915" stroke="#a9c67c" stroke-width="0.8" fill="none" stroke-dasharray="6 4"/>
<rect x="1348" y="944" width="7" height="22" stroke="#a9c67c" stroke-width="0.7" fill="none"/>
<path d="M1345 1075Q1380 1075 1385 1040" stroke="#a9c67c" stroke-width="0.7" fill="none"/>
<rect x="1436.7" y="857.8" width="53.5" height="16.9" stroke="#e2468c" stroke-width="1" fill="#e8608a" fill-opacity=".4"/>
<text x="1438.7" y="866.4" font-size="9.3" fill="#8a6a45">ERP-14-06</text>
<rect x="1447.9" y="867.7" width="15.7" height="15.6" stroke="#6b6a2a" stroke-width="1.6" fill="#d69a62" fill-opacity=".46"/>
<circle cx="1455.8" cy="875.5" r="4" stroke="#6f7a30" stroke-width="1" fill="none"/>
<path d="M1454.8 871.5V879.5M1456.8 871.5V879.5" stroke="#6f7a30" stroke-width="0.7" fill="none"/>
<rect x="1455.7" y="888" width="13.9" height="7.6" stroke="#4c6b22" stroke-width="1.3" fill="none"/>
<text x="1462.7" y="894.5" font-size="7.6" fill="#4c6b22" text-anchor="middle">PB</text>
<rect x="1406.1" y="895.1" width="13" height="13.6" stroke="#4c6b22" stroke-width="1.4" fill="none"/>
<path d="M1412.6 897L1408.6 905.5L1416.6 905.5Z" stroke="none" stroke-width="0" fill="#4c6b22"/>
<rect x="1419.1" y="895.1" width="13.1" height="13.6" stroke="#4c6b22" stroke-width="1.4" fill="none"/>
<path d="M1425.600 906.500L1421.500 898H1429.700Z" stroke="#4c6b22" stroke-width="1.1" fill="none"/>
<rect x="1405" y="858" width="28" height="28" stroke="#a9c67c" stroke-width="0.7" fill="none"/>
<rect x="1436" y="884" width="30" height="20" stroke="#a9c67c" stroke-width="0.7" fill="none"/>
<text x="1406.1" y="922.2" font-size="9.6" fill="#4f6d25">ERP-14-58,</text>
<text x="1406.1" y="934" font-size="9.6" fill="#4f6d25">60</text>
<path d="M1232 1036L1232 1066" stroke="#a9c67c" stroke-width="0.7" stroke-dasharray="5 3"/>
<path d="M1246 1036L1246 1066" stroke="#a9c67c" stroke-width="0.7" stroke-dasharray="5 3"/>
<path d="M1260 1036L1260 1066" stroke="#a9c67c" stroke-width="0.7" stroke-dasharray="5 3"/>
<path d="M1274 1036L1274 1066" stroke="#a9c67c" stroke-width="0.7" stroke-dasharray="5 3"/>
<path d="M1288 1036L1288 1066" stroke="#a9c67c" stroke-width="0.7" stroke-dasharray="5 3"/>
<path d="M1302 1036L1302 1066" stroke="#a9c67c" stroke-width="0.7" stroke-dasharray="5 3"/>
<path d="M1316 1036L1316 1066" stroke="#a9c67c" stroke-width="0.7" stroke-dasharray="5 3"/>
<path d="M1330 1036L1330 1066" stroke="#a9c67c" stroke-width="0.7" stroke-dasharray="5 3"/>
<rect x="1230" y="1066" width="111" height="8" stroke="#a9c67c" stroke-width="1" fill="none" stroke-dasharray="6 3"/>
<path d="M1236 1076L1236 1112" stroke="#a9c67c" stroke-width="0.7" stroke-dasharray="5 3"/>
<path d="M1248 1076L1248 1112" stroke="#a9c67c" stroke-width="0.7" stroke-dasharray="5 3"/>
<path d="M1260 1076L1260 1112" stroke="#a9c67c" stroke-width="0.7" stroke-dasharray="5 3"/>
<path d="M1272 1076L1272 1112" stroke="#a9c67c" stroke-width="0.7" stroke-dasharray="5 3"/>
<path d="M1284 1076L1284 1112" stroke="#a9c67c" stroke-width="0.7" stroke-dasharray="5 3"/>
<path d="M1296 1076L1296 1112" stroke="#a9c67c" stroke-width="0.7" stroke-dasharray="5 3"/>
<path d="M1308 1076L1308 1112" stroke="#a9c67c" stroke-width="0.7" stroke-dasharray="5 3"/>
<path d="M1320 1076L1320 1112" stroke="#a9c67c" stroke-width="0.7" stroke-dasharray="5 3"/>
<path d="M1332 1076L1332 1112" stroke="#a9c67c" stroke-width="0.7" stroke-dasharray="5 3"/>
<text x="1250.2" y="1091.1" font-size="9.5" fill="#9ab76c">STAIR A</text>
<rect x="1268" y="1094" width="14" height="9" stroke="#a9c67c" stroke-width="0.7" fill="none"/>
<circle cx="1259" cy="1117" r="4" stroke="#4c6b22" stroke-width="1" fill="none"/>
<path d="M1345 1068Q1370 1070 1372 1095" stroke="#a9c67c" stroke-width="0.7" fill="none"/>
<path d="M1342 858L1342 1119" stroke="#a9c67c" stroke-width="0.9"/>
<path d="M1345 858L1345 1119" stroke="#a9c67c" stroke-width="0.7" stroke-dasharray="9 3"/>
<text x="1535.2" y="220.5" font-size="10.8" fill="#a9323a">GA - Electrical</text>
<text x="1853" y="244" font-size="10.8" fill="#a9323a">Text Area</text>
<text x="1564.8" y="667.4" font-size="10.8" fill="#a9323a">GA - Electrical</text>
<text x="1860.3" y="662.7" font-size="10.8" fill="#a9323a">Text Area</text>
<text x="1611" y="968.4" font-size="10.8" fill="#a9323a">Text Area</text>
<text x="1900.8" y="970.5" font-size="10.8" fill="#a9323a">Text Area</text>
<text x="1647.2" y="259.2" font-size="10.8" fill="#a9323a">Plug - Quadplex</text>
<text x="1704.6" y="277.8" font-size="10.8" fill="#a9323a">Tag - Electrical</text>
<text x="1617.6" y="315" font-size="10.8" fill="#a9323a">Tag - Electrical</text>
<text x="1796.6" y="372.4" font-size="10.8" fill="#a9323a">Plug - Quadplex</text>
<text x="1585.2" y="395.3" font-size="10.8" fill="#a9323a">Plug - Duplex</text>
<text x="1643.3" y="395.3" font-size="10.8" fill="#a9323a">Plug - Duplex</text>
<text x="1703.3" y="393.3" font-size="10.8" fill="#a9323a">Tag - Electrical</text>
<text x="1703.3" y="406.4" font-size="10.8" fill="#a9323a">Tag - Electrical</text>
<text x="1702.9" y="417.3" font-size="10.8" fill="#a9323a">Tag - Electrical</text>
<text x="1585.2" y="424.5" font-size="10.8" fill="#a9323a">Plug - Duplex</text>
<text x="1642.9" y="424.5" font-size="10.8" fill="#a9323a">Plug - Duplex</text>
<text x="1611.2" y="497.8" font-size="10.8" fill="#a9323a">Tag - Electrical</text>
<text x="1663.8" y="516.8" font-size="10.8" fill="#a9323a">Tag - Electrical</text>
<text x="1706.5" y="526.9" font-size="10.8" fill="#a9323a">Plug - Quadplex</text>
<text x="1660.3" y="705.5" font-size="10.8" fill="#a9323a">Plug - Duplex</text>
<text x="1665.8" y="716.6" font-size="10.8" fill="#a9323a">Tag - Electrical</text>
<text x="1600" y="767.1" font-size="10.8" fill="#a9323a">Plug - Duplex</text>
<text x="1609" y="766.4" font-size="10.8" fill="#a9323a">Tag - Electrical</text>
<text x="1607.1" y="777.4" font-size="10.8" fill="#a9323a">Tag - Electrical</text>
<text x="1766.1" y="829.5" font-size="10.8" fill="#a9323a">Plug - Duplex</text>
<text x="1736.9" y="839.5" font-size="10.8" fill="#a9323a">Tag - Electrical</text>
<text x="569.3" y="491.3" font-size="10.8" fill="#a9323a">Plug - Duplex</text>
<text x="555.4" y="503.3" font-size="10.8" fill="#a9323a">Tag - Electrical</text>
<text x="449.4" y="518.1" font-size="10.8" fill="#a9323a">Tag - Electrical</text>
<text x="449.4" y="529.2" font-size="10.8" fill="#a9323a">Plug - Duplex - Split</text>
<text x="400.8" y="530" font-size="10.8" fill="#a9323a">Plug - Duplex</text>
<text x="416.5" y="530" font-size="10.8" fill="#a9323a">Plug - Duplex</text>
<text x="369" y="540.2" font-size="10.8" fill="#a9323a">Tag - Electrical</text>
<text x="416.5" y="543.2" font-size="10.8" fill="#a9323a">Tag - Electrical</text>
<text x="783" y="519" font-size="10.8" fill="#a9323a">Tag - Electrical</text>
<text x="783" y="529.9" font-size="10.8" fill="#a9323a">Plug - Duplex - Split</text>
<text x="736" y="531.7" font-size="10.8" fill="#a9323a">Plug - Duplex</text>
<text x="753" y="531.7" font-size="10.8" fill="#a9323a">Plug - Duplex</text>
<text x="704.8" y="543.4" font-size="10.8" fill="#a9323a">Tag - Electrical</text>
<text x="753" y="543.4" font-size="10.8" fill="#a9323a">Tag - Electrical</text>
<text x="1010" y="488.9" font-size="10.8" fill="#a9323a">Plug - Duplex</text>
<text x="1010" y="497.2" font-size="10.8" fill="#a9323a">Tag - Electrical</text>
<text x="1157.3" y="520.7" font-size="10.8" fill="#a9323a">Tag - Electrical</text>
<text x="1185.5" y="529.9" font-size="10.8" fill="#a9323a">Plug - Duplex - Split</text>
<text x="1220.7" y="531.2" font-size="10.8" fill="#a9323a">Plug - Duplex</text>
<text x="1237.7" y="531.2" font-size="10.8" fill="#a9323a">Plug - Duplex</text>
<text x="1324.4" y="539.8" font-size="10.8" fill="#a9323a">Plug - Duplex</text>
<text x="1344.8" y="539.8" font-size="10.8" fill="#a9323a">Plug - Duplex</text>
<text x="1297" y="546.4" font-size="10.8" fill="#a9323a">Tag - Electrical</text>
<text x="1353.9" y="548.3" font-size="10.8" fill="#a9323a">Tag - Electrical</text>
<text x="320.9" y="588.5" font-size="10.8" fill="#a9323a">Plug - Duplex</text>
<text x="328.8" y="590.2" font-size="10.8" fill="#a9323a">Tag - Electrical</text>
<text x="320.9" y="712.3" font-size="10.8" fill="#a9323a">Plug - Duplex</text>
<text x="330.1" y="714.4" font-size="10.8" fill="#a9323a">Tag - Electrical</text>
<text x="635.6" y="588.3" font-size="10.8" fill="#a9323a">Plug - Duplex</text>
<text x="603.4" y="595.6" font-size="10.8" fill="#a9323a">Tag - Electrical</text>
<text x="605" y="702.4" font-size="10.8" fill="#a9323a">Tag - Electrical</text>
<text x="635.6" y="711.8" font-size="10.8" fill="#a9323a">Plug - Duplex</text>
<text x="1282.9" y="707.1" font-size="10.8" fill="#a9323a">Tag - Electrical</text>
<text x="1323.9" y="707.1" font-size="10.8" fill="#a9323a">Plug - Duplex</text>
<text x="1344.8" y="703.2" font-size="10.8" fill="#a9323a">Plug - Duplex</text>
<text x="1357" y="707.1" font-size="10.8" fill="#a9323a">Tag - Electrical</text>
<text x="1448.7" y="767.7" font-size="10.8" fill="#a9323a">Plug - Duplex</text>
<text x="1450.5" y="778.9" font-size="10.8" fill="#a9323a">Tag - Electrical</text>
<text x="1065.9" y="824.6" font-size="10.8" fill="#a9323a">Tag - Electrical</text>
<text x="1065.9" y="834.5" font-size="10.8" fill="#a9323a">Plug - Duplex</text>
<text x="1070.6" y="834.5" font-size="10.8" fill="#a9323a">Tag - Electrical</text>
<text x="935.4" y="842.9" font-size="10.8" fill="#a9323a">Tag - Electrical</text>
<text x="972.7" y="852.8" font-size="10.8" fill="#a9323a">Plug - Quadplex</text>
<text x="1437.4" y="843.7" font-size="10.8" fill="#a9323a">Tag - Electrical</text>
<text x="1447.9" y="854.1" font-size="10.8" fill="#a9323a">Plug - Duplex</text>
<text x="458" y="873.7" font-size="10.8" fill="#a9323a">Tag - Electrical</text>
<text x="472.4" y="869.5" font-size="10.8" fill="#a9323a">Plug - Duplex</text>
<text x="502.4" y="869.5" font-size="10.8" fill="#a9323a">Tag - Electrical</text>
<text x="546" y="869" font-size="10.8" fill="#a9323a">Tag - Electrical</text>
<text x="591.2" y="869.5" font-size="10.8" fill="#a9323a">Tag - Electrical</text>
<text x="516.2" y="878.9" font-size="10.8" fill="#a9323a">Plug - Duplex</text>
<text x="559.8" y="878.9" font-size="10.8" fill="#a9323a">Plug - Duplex</text>
<text x="603" y="878.9" font-size="10.8" fill="#a9323a">Plug - Duplex</text>
<text x="524.6" y="880.7" font-size="10.8" fill="#a9323a">Tag - Electrical</text>
<text x="568.5" y="880.7" font-size="10.8" fill="#a9323a">Tag - Electrical</text>
<text x="612.8" y="880.7" font-size="10.8" fill="#a9323a">Tag - Electrical</text>
<text x="698.2" y="891.2" font-size="10.8" fill="#a9323a">Tag - Electrical</text>
<text x="741.3" y="897.2" font-size="10.8" fill="#a9323a">Plug - Duplex - Split</text>
<text x="725.6" y="900.8" font-size="10.8" fill="#a9323a">Tag - Electrical</text>
<text x="465.1" y="950.9" font-size="10.8" fill="#a9323a">Tag - Electrical</text>
<text x="510.2" y="956.7" font-size="10.8" fill="#a9323a">Plug - Duplex</text>
<text x="494.6" y="960.6" font-size="10.8" fill="#a9323a">Tag - Electrical</text>
<text x="352.8" y="1088" font-size="10.8" fill="#a9323a">Tag - Electrical</text>
<text x="415.5" y="1102.3" font-size="10.8" fill="#a9323a">Plug - Duplex</text>
<text x="421.5" y="1104.4" font-size="10.8" fill="#a9323a">Tag - Electrical</text>
<text x="526.7" y="1105" font-size="10.8" fill="#a9323a">Tag - Electrical</text>
<text x="587.3" y="1105" font-size="10.8" fill="#a9323a">Plug - Duplex</text>
<text x="576.8" y="1108.9" font-size="10.8" fill="#a9323a">Tag - Electrical</text>
<text x="701.6" y="1105" font-size="10.8" fill="#a9323a">Tag - Electrical</text>
<text x="712.6" y="1101.8" font-size="10.8" fill="#a9323a">Plug - Duplex</text>
<text x="647.3" y="1116.2" font-size="10.8" fill="#a9323a">Tag - Electrical</text>
<text x="754.9" y="1090.6" font-size="10.8" fill="#a9323a">Tag - Electrical</text>
<text x="727" y="939.2" font-size="10.8" fill="#a9323a">Tag - Electrical</text>
<text x="741.3" y="940.5" font-size="10.8" fill="#a9323a">Plug - Duplex</text>
<text x="762.2" y="939.2" font-size="10.8" fill="#a9323a">Tag - Electrical</text>
<text x="699.5" y="948.8" font-size="10.8" fill="#a9323a">Tag - Electrical</text>
<text x="762.2" y="947.8" font-size="10.8" fill="#a9323a">Tag - Electrical</text>
<text x="826.9" y="973.1" font-size="10.8" fill="#a9323a">Plug - Duplex</text>
<text x="802.7" y="986.7" font-size="10.8" fill="#a9323a">Tag - Electrical</text>
<text x="889.1" y="974.4" font-size="10.8" fill="#a9323a">Plug - Duplex</text>
<text x="880" y="984.9" font-size="10.8" fill="#a9323a">Tag - Electrical</text>
<text x="903.5" y="887.3" font-size="10.8" fill="#a9323a">Tag - Electrical</text>
<text x="951" y="887.3" font-size="10.8" fill="#a9323a">Plug - Duplex</text>
<text x="1019.7" y="916.2" font-size="10.8" fill="#a9323a">Plug - Duplex</text>
<text x="1024.1" y="924" font-size="10.8" fill="#a9323a">Tag - Electrical</text>
<text x="945.3" y="960.6" font-size="10.8" fill="#a9323a">Plug - Duplex</text>
<text x="992.3" y="973.6" font-size="10.8" fill="#a9323a">Plug - Duplex</text>
<text x="971.9" y="985.6" font-size="10.8" fill="#a9323a">Tag - Electrical</text>
<text x="932.2" y="1076.2" font-size="10.8" fill="#a9323a">Plug - Duplex</text>
<text x="936.1" y="1082" font-size="10.8" fill="#a9323a">Tag - Electrical</text>
<text x="1147.1" y="1067.1" font-size="10.8" fill="#a9323a">Plug - Duplex</text>
<text x="1198" y="937.3" font-size="10.8" fill="#a9323a">Tag - Electrical</text>
<text x="1244.8" y="938.6" font-size="10.8" fill="#a9323a">Plug - Duplex</text>
<text x="1195.9" y="992.7" font-size="10.8" fill="#a9323a">Tag - Electrical</text>
<text x="1227.8" y="1001.8" font-size="10.8" fill="#a9323a">Plug - Duplex</text>
<text x="1257.3" y="1102.3" font-size="10.8" fill="#a9323a">Plug - Duplex</text>
<text x="1167.2" y="1115.4" font-size="10.8" fill="#a9323a">Tag - Electrical</text>
<text x="1165.1" y="1118" font-size="10.8" fill="#a9323a">Plug - Duplex</text>
<text x="1281" y="1121" font-size="10.8" fill="#a9323a">Tag - Electrical</text>
<text x="1320" y="1121" font-size="10.8" fill="#a9323a">Plug - Duplex</text>
<circle cx="1519" cy="201" r="5" stroke="none" stroke-width="0" fill="#000"/>
</svg>
</div>
<!-- table area -->
<div class="abs" style="left:212px;top:929px;width:1898px;height:328px;background:#f8f9fa;overflow:hidden">
<div class="abs" style="left:0;top:0;width:181px;height:38px;background:#6c757d;border-radius:5px"></div>
<div class="t ui" style="left:-8.0px;width:80px;top:12px;font-size:16px;color:#fff;text-align:center;letter-spacing:-0.20px">Copy</div>
<div class="t ui" style="left:55.0px;width:80px;top:12px;font-size:16px;color:#fff;text-align:center;letter-spacing:-0.44px">Excel</div>
<div class="t ui" style="left:113.5px;width:80px;top:12px;font-size:16px;color:#fff;text-align:center;letter-spacing:-0.80px">PDF</div>
<div class="t ui" style="left:181.6px;top:8px;font-size:16px;letter-spacing:-.08px">Show</div>
<div class="abs" style="left:226.5px;top:1px;width:70px;height:30px;background:#fff;border:1px solid #dee2e6;border-radius:4px"></div>
<div class="t" style="left:236.0px;top:9px;font-size:14px;letter-spacing:.3px">10</div>
<svg class="abs" style="left:270.0px;top:11px" width="12" height="8" viewBox="0 0 12 8"><path d="M1.500 1.500L6 6L10.500 1.500" stroke="#343a40" stroke-width="1.700" fill="none" stroke-linecap="round" stroke-linejoin="round"/></svg>
<div class="t ui" style="left:301.7px;top:8px;font-size:16px;letter-spacing:.42px">entries</div>
<div class="abs" style="left:1469.5px;top:33.0px;width:401.5px;height:38px;background:#fff;border:1px solid #dee2e6;border-radius:5px"></div>
<div class="t ui" style="left:1469.5px;width:88.5px;top:45.0px;font-size:16px;color:#6c757d;text-align:center;letter-spacing:.2px">Previous</div>
<div class="abs" style="left:1558.0px;top:33.0px;width:1px;height:38px;background:#dee2e6"></div>
<div class="abs" style="left:1558.0px;top:33.0px;width:35.6px;height:38px;background:#0d6efd"></div>
<div class="t ui" style="left:1558.0px;width:34.6px;top:45.0px;font-size:16px;color:#fff;text-align:center;letter-spacing:.2px">1</div>
<div class="abs" style="left:1592.6px;top:33.0px;width:1px;height:38px;background:#dee2e6"></div>
<div class="t ui" style="left:1592.6px;width:33.9px;top:45.0px;font-size:16px;color:#0d6efd;text-align:center;letter-spacing:.2px">2</div>
<div class="abs" style="left:1626.5px;top:33.0px;width:1px;height:38px;background:#dee2e6"></div>
<div class="t ui" style="left:1626.5px;width:34.0px;top:45.0px;font-size:16px;color:#0d6efd;text-align:center;letter-spacing:.2px">3</div>
<div class="abs" style="left:1660.5px;top:33.0px;width:1px;height:38px;background:#dee2e6"></div>
<div class="t ui" style="left:1660.5px;width:34.1px;top:45.0px;font-size:16px;color:#0d6efd;text-align:center;letter-spacing:.2px">4</div>
<div class="abs" style="left:1694.6px;top:33.0px;width:1px;height:38px;background:#dee2e6"></div>
<div class="t ui" style="left:1694.6px;width:35.0px;top:45.0px;font-size:16px;color:#0d6efd;text-align:center;letter-spacing:.2px">5</div>
<div class="abs" style="left:1729.6px;top:33.0px;width:1px;height:38px;background:#dee2e6"></div>
<div class="t ui" style="left:1729.6px;width:36.9px;top:45.0px;font-size:16px;color:#6c757d;text-align:center;letter-spacing:.2px">...</div>
<div class="abs" style="left:1766.5px;top:33.0px;width:1px;height:38px;background:#dee2e6"></div>
<div class="t ui" style="left:1766.5px;width:43.9px;top:45.0px;font-size:16px;color:#0d6efd;text-align:center;letter-spacing:.2px">10</div>
<div class="abs" style="left:1810.4px;top:33.0px;width:1px;height:38px;background:#dee2e6"></div>
<div class="t ui" style="left:1810.4px;width:60.6px;top:45.0px;font-size:16px;color:#0d6efd;text-align:center;letter-spacing:.2px">Next</div>
<div class="abs" style="left:0;top:77px;width:1871px;height:27px;background:#fff"></div>
<div class="t" style="left:28.5px;top:83px;font-size:16px;font-weight:bold;letter-spacing:-0.17px">Ops</div>
<div class="t" style="left:155.2px;top:83px;font-size:16px;font-weight:bold;letter-spacing:0.57px">Drawing</div>
<div class="t" style="left:450.5px;top:83px;font-size:16px;font-weight:bold;letter-spacing:0.06px">System</div>
<div class="t" style="left:620.0px;top:83px;font-size:16px;font-weight:bold;letter-spacing:0.05px">Bid Form</div>
<div class="t" style="left:828.5px;top:83px;font-size:16px;font-weight:bold;letter-spacing:-0.10px">Spec Section</div>
<div class="t" style="left:1115.0px;top:83px;font-size:16px;font-weight:bold;letter-spacing:0.32px">Trade</div>
<div class="t" style="left:1276.7px;top:83px;font-size:16px;font-weight:bold;letter-spacing:0.10px">Tag</div>
<div class="t" style="left:1361.8px;top:83px;font-size:16px;font-weight:bold;letter-spacing:0.27px">Description</div>
<div class="t" style="left:1655.8px;top:83px;font-size:16px;font-weight:bold;letter-spacing:0.10px">Size</div>
<div class="t" style="left:1750.0px;top:83px;font-size:16px;font-weight:bold;letter-spacing:0.10px">QTY</div>
<div class="abs" style="left:0;top:103px;width:1871px;height:33px;background:#f9f9f9"></div>
<div class="abs" style="left:7.5px;top:120px;width:13px;height:13px;border:1.500px solid #111;border-radius:3.500px;background:#fff"></div>
<div class="gbtn" style="left:28px;top:104px;width:30px;height:31px"><svg class="abs" style="left:8.500px;top:7px" width="13" height="15" viewBox="0 0 13 15"><path d="M4.300 .9Q4.500 .2 5.200 .2H7.800Q8.500 .2 8.700 .9L9 1.600H12.300Q12.900 1.600 12.900 2.200V3H.1V2.200Q.1 1.600 .7 1.600H4Z" fill="#fff"/><path d="M1 4.200H12L11.300 13.600Q11.200 14.800 10 14.800H3Q1.800 14.800 1.700 13.600Z" fill="#fff"/></svg></div>
<div class="gbtn" style="left:63px;top:104px;width:33px;height:31px"><svg class="abs" style="left:9px;top:7.500px" width="16" height="15" viewBox="0 0 16 15"><path d="M10.500 2.600H2.600Q1 2.600 1 4.200V12.400Q1 14 2.600 14H10.800Q12.400 14 12.400 12.400V8.500" fill="none" stroke="#fff" stroke-width="1.700" stroke-linecap="round"/><path d="M5 11L5.700 7.400L11.600 1.500L14.500 4.400L8.600 10.300ZM12.400 .8L13.200 0Q13.800 -.5 14.400 0L16 1.600Q16.500 2.200 16 2.800L15.200 3.600Z" fill="#fff"/></svg></div>
<div class="t ui" style="left:155.2px;top:112px;font-size:16px;letter-spacing:.26px">Set17.pdf <span style="font-family:'DejaVu Sans',sans-serif;font-size:15.500px;letter-spacing:0;line-height:10px">⇨</span> 79</div>
<div class="t ui" style="left:450.5px;top:112px;font-size:16px;letter-spacing:.54px">Default</div>
<div class="t ui" style="left:620.0px;top:112px;font-size:16px;letter-spacing:.54px">Default</div>
<div class="t ui" style="left:828.5px;top:112px;font-size:16px;letter-spacing:.54px">Default</div>
<div class="t ui" style="left:1115.0px;top:112px;font-size:16px;letter-spacing:.54px">Default</div>
<div class="t ui" style="left:1361.8px;top:112px;font-size:16px;letter-spacing:.02px">GA - Electrical</div>
<div class="t ui" style="left:1750.0px;top:112px;font-size:16px;letter-spacing:.07px">1.000</div>
<div class="abs" style="left:0;top:136px;width:1871px;height:33px;background:#fff"></div>
<div class="abs" style="left:7.5px;top:153px;width:13px;height:13px;border:1.500px solid #111;border-radius:3.500px;background:#fff"></div>
<div class="gbtn" style="left:28px;top:137px;width:30px;height:31px"><svg class="abs" style="left:8.500px;top:7px" width="13" height="15" viewBox="0 0 13 15"><path d="M4.300 .9Q4.500 .2 5.200 .2H7.800Q8.500 .2 8.700 .9L9 1.600H12.300Q12.900 1.600 12.900 2.200V3H.1V2.200Q.1 1.600 .7 1.600H4Z" fill="#fff"/><path d="M1 4.200H12L11.300 13.600Q11.200 14.800 10 14.800H3Q1.800 14.800 1.700 13.600Z" fill="#fff"/></svg></div>
<div class="gbtn" style="left:63px;top:137px;width:33px;height:31px"><svg class="abs" style="left:9px;top:7.500px" width="16" height="15" viewBox="0 0 16 15"><path d="M10.500 2.600H2.600Q1 2.600 1 4.200V12.400Q1 14 2.600 14H10.800Q12.400 14 12.400 12.400V8.500" fill="none" stroke="#fff" stroke-width="1.700" stroke-linecap="round"/><path d="M5 11L5.700 7.400L11.600 1.500L14.500 4.400L8.600 10.300ZM12.400 .8L13.200 0Q13.800 -.5 14.400 0L16 1.600Q16.500 2.200 16 2.800L15.200 3.600Z" fill="#fff"/></svg></div>
<div class="t ui" style="left:155.2px;top:145px;font-size:16px;letter-spacing:.26px">Set17.pdf <span style="font-family:'DejaVu Sans',sans-serif;font-size:15.500px;letter-spacing:0;line-height:10px">⇨</span> 79</div>
<div class="t ui" style="left:450.5px;top:145px;font-size:16px;letter-spacing:.54px">Default</div>
<div class="t ui" style="left:620.0px;top:145px;font-size:16px;letter-spacing:.54px">Default</div>
<div class="t ui" style="left:828.5px;top:145px;font-size:16px;letter-spacing:.54px">Default</div>
<div class="t ui" style="left:1115.0px;top:145px;font-size:16px;letter-spacing:.54px">Default</div>
<div class="t ui" style="left:1361.8px;top:145px;font-size:16px;letter-spacing:.22px">Text Area</div>
<div class="t ui" style="left:1750.0px;top:145px;font-size:16px;letter-spacing:.07px">1.000</div>
<div class="abs" style="left:0;top:169px;width:1871px;height:33px;background:#f9f9f9"></div>
<div class="abs" style="left:7.5px;top:186px;width:13px;height:13px;border:1.500px solid #111;border-radius:3.500px;background:#fff"></div>
<div class="gbtn" style="left:28px;top:170px;width:30px;height:31px"><svg class="abs" style="left:8.500px;top:7px" width="13" height="15" viewBox="0 0 13 15"><path d="M4.300 .9Q4.500 .2 5.200 .2H7.800Q8.500 .2 8.700 .9L9 1.600H12.300Q12.900 1.600 12.900 2.200V3H.1V2.200Q.1 1.600 .7 1.600H4Z" fill="#fff"/><path d="M1 4.200H12L11.300 13.600Q11.200 14.800 10 14.800H3Q1.800 14.800 1.700 13.600Z" fill="#fff"/></svg></div>
<div class="gbtn" style="left:63px;top:170px;width:33px;height:31px"><svg class="abs" style="left:9px;top:7.500px" width="16" height="15" viewBox="0 0 16 15"><path d="M10.500 2.600H2.600Q1 2.600 1 4.200V12.400Q1 14 2.600 14H10.800Q12.400 14 12.400 12.400V8.500" fill="none" stroke="#fff" stroke-width="1.700" stroke-linecap="round"/><path d="M5 11L5.700 7.400L11.600 1.500L14.500 4.400L8.600 10.300ZM12.400 .8L13.200 0Q13.800 -.5 14.400 0L16 1.600Q16.500 2.200 16 2.800L15.200 3.600Z" fill="#fff"/></svg></div>
<div class="t ui" style="left:155.2px;top:178px;font-size:16px;letter-spacing:.26px">Set17.pdf <span style="font-family:'DejaVu Sans',sans-serif;font-size:15.500px;letter-spacing:0;line-height:10px">⇨</span> 79</div>
<div class="t ui" style="left:450.5px;top:178px;font-size:16px;letter-spacing:.54px">Default</div>
<div class="t ui" style="left:620.0px;top:178px;font-size:16px;letter-spacing:.54px">Default</div>
<div class="t ui" style="left:828.5px;top:178px;font-size:16px;letter-spacing:.54px">Default</div>
<div class="t ui" style="left:1115.0px;top:178px;font-size:16px;letter-spacing:.54px">Default</div>
<div class="t ui" style="left:1361.8px;top:178px;font-size:16px;letter-spacing:.22px">Text Area</div>
<div class="t ui" style="left:1750.0px;top:178px;font-size:16px;letter-spacing:.07px">1.000</div>
<div class="abs" style="left:0;top:202px;width:1871px;height:33px;background:#fff"></div>
<div class="abs" style="left:7.5px;top:219px;width:13px;height:13px;border:1.500px solid #111;border-radius:3.500px;background:#fff"></div>
<div class="gbtn" style="left:28px;top:203px;width:30px;height:31px"><svg class="abs" style="left:8.500px;top:7px" width="13" height="15" viewBox="0 0 13 15"><path d="M4.300 .9Q4.500 .2 5.200 .2H7.800Q8.500 .2 8.700 .9L9 1.600H12.300Q12.900 1.600 12.900 2.200V3H.1V2.200Q.1 1.600 .7 1.600H4Z" fill="#fff"/><path d="M1 4.200H12L11.300 13.600Q11.200 14.800 10 14.800H3Q1.800 14.800 1.700 13.600Z" fill="#fff"/></svg></div>
<div class="gbtn" style="left:63px;top:203px;width:33px;height:31px"><svg class="abs" style="left:9px;top:7.500px" width="16" height="15" viewBox="0 0 16 15"><path d="M10.500 2.600H2.600Q1 2.600 1 4.200V12.400Q1 14 2.600 14H10.800Q12.400 14 12.400 12.400V8.500" fill="none" stroke="#fff" stroke-width="1.700" stroke-linecap="round"/><path d="M5 11L5.700 7.400L11.600 1.500L14.500 4.400L8.600 10.300ZM12.400 .8L13.200 0Q13.800 -.5 14.400 0L16 1.600Q16.500 2.200 16 2.800L15.200 3.600Z" fill="#fff"/></svg></div>
<div class="t ui" style="left:155.2px;top:211px;font-size:16px;letter-spacing:.26px">Set17.pdf <span style="font-family:'DejaVu Sans',sans-serif;font-size:15.500px;letter-spacing:0;line-height:10px">⇨</span> 79</div>
<div class="t ui" style="left:450.5px;top:211px;font-size:16px;letter-spacing:.54px">Default</div>
<div class="t ui" style="left:620.0px;top:211px;font-size:16px;letter-spacing:.54px">Default</div>
<div class="t ui" style="left:828.5px;top:211px;font-size:16px;letter-spacing:.54px">Default</div>
<div class="t ui" style="left:1115.0px;top:211px;font-size:16px;letter-spacing:.54px">Default</div>
<div class="t ui" style="left:1361.8px;top:211px;font-size:16px;letter-spacing:.02px">GA - Electrical</div>
<div class="t ui" style="left:1750.0px;top:211px;font-size:16px;letter-spacing:.07px">1.000</div>
<div class="abs" style="left:0;top:235px;width:1871px;height:33px;background:#f9f9f9"></div>
<div class="abs" style="left:7.5px;top:252px;width:13px;height:13px;border:1.500px solid #111;border-radius:3.500px;background:#fff"></div>
<div class="gbtn" style="left:28px;top:236px;width:30px;height:31px"><svg class="abs" style="left:8.500px;top:7px" width="13" height="15" viewBox="0 0 13 15"><path d="M4.300 .9Q4.500 .2 5.200 .2H7.800Q8.500 .2 8.700 .9L9 1.600H12.300Q12.900 1.600 12.900 2.200V3H.1V2.200Q.1 1.600 .7 1.600H4Z" fill="#fff"/><path d="M1 4.200H12L11.300 13.600Q11.200 14.800 10 14.800H3Q1.800 14.800 1.700 13.600Z" fill="#fff"/></svg></div>
<div class="gbtn" style="left:63px;top:236px;width:33px;height:31px"><svg class="abs" style="left:9px;top:7.500px" width="16" height="15" viewBox="0 0 16 15"><path d="M10.500 2.600H2.600Q1 2.600 1 4.200V12.400Q1 14 2.600 14H10.800Q12.400 14 12.400 12.400V8.500" fill="none" stroke="#fff" stroke-width="1.700" stroke-linecap="round"/><path d="M5 11L5.700 7.400L11.600 1.500L14.500 4.400L8.600 10.300ZM12.400 .8L13.200 0Q13.800 -.5 14.400 0L16 1.600Q16.500 2.200 16 2.800L15.200 3.600Z" fill="#fff"/></svg></div>
<div class="t ui" style="left:155.2px;top:244px;font-size:16px;letter-spacing:.26px">Set17.pdf <span style="font-family:'DejaVu Sans',sans-serif;font-size:15.500px;letter-spacing:0;line-height:10px">⇨</span> 79</div>
<div class="t ui" style="left:450.5px;top:244px;font-size:16px;letter-spacing:.54px">Default</div>
<div class="t ui" style="left:620.0px;top:244px;font-size:16px;letter-spacing:.54px">Default</div>
<div class="t ui" style="left:828.5px;top:244px;font-size:16px;letter-spacing:.54px">Default</div>
<div class="t ui" style="left:1115.0px;top:244px;font-size:16px;letter-spacing:.54px">Default</div>
<div class="t ui" style="left:1361.8px;top:244px;font-size:16px;letter-spacing:.02px">GA - Electrical</div>
<div class="t ui" style="left:1750.0px;top:244px;font-size:16px;letter-spacing:.07px">1.000</div>
<div class="abs" style="left:0;top:268px;width:1871px;height:33px;background:#fff"></div>
<div class="abs" style="left:7.5px;top:285px;width:13px;height:13px;border:1.500px solid #111;border-radius:3.500px;background:#fff"></div>
<div class="gbtn" style="left:28px;top:269px;width:30px;height:31px"><svg class="abs" style="left:8.500px;top:7px" width="13" height="15" viewBox="0 0 13 15"><path d="M4.300 .9Q4.500 .2 5.200 .2H7.800Q8.500 .2 8.700 .9L9 1.600H12.300Q12.900 1.600 12.900 2.200V3H.1V2.200Q.1 1.600 .7 1.600H4Z" fill="#fff"/><path d="M1 4.200H12L11.300 13.600Q11.200 14.800 10 14.800H3Q1.800 14.800 1.700 13.600Z" fill="#fff"/></svg></div>
<div class="gbtn" style="left:63px;top:269px;width:33px;height:31px"><svg class="abs" style="left:9px;top:7.500px" width="16" height="15" viewBox="0 0 16 15"><path d="M10.500 2.600H2.600Q1 2.600 1 4.200V12.400Q1 14 2.600 14H10.800Q12.400 14 12.400 12.400V8.500" fill="none" stroke="#fff" stroke-width="1.700" stroke-linecap="round"/><path d="M5 11L5.700 7.400L11.600 1.500L14.500 4.400L8.600 10.300ZM12.400 .8L13.200 0Q13.800 -.5 14.400 0L16 1.600Q16.500 2.200 16 2.800L15.200 3.600Z" fill="#fff"/></svg></div>
<div class="t ui" style="left:155.2px;top:277px;font-size:16px;letter-spacing:.26px">Set17.pdf <span style="font-family:'DejaVu Sans',sans-serif;font-size:15.500px;letter-spacing:0;line-height:10px">⇨</span> 79</div>
<div class="t ui" style="left:450.5px;top:277px;font-size:16px;letter-spacing:.54px">Default</div>
<div class="t ui" style="left:620.0px;top:277px;font-size:16px;letter-spacing:.54px">Default</div>
<div class="t ui" style="left:828.5px;top:277px;font-size:16px;letter-spacing:.54px">Default</div>
<div class="t ui" style="left:1115.0px;top:277px;font-size:16px;letter-spacing:.54px">Default</div>
<div class="t ui" style="left:1361.8px;top:277px;font-size:16px;letter-spacing:.22px">Text Area</div>
<div class="t ui" style="left:1750.0px;top:277px;font-size:16px;letter-spacing:.07px">1.000</div>
<div class="abs" style="left:0;top:301px;width:1871px;height:33px;background:#f9f9f9"></div>
<div class="abs" style="left:7.5px;top:318px;width:13px;height:13px;border:1.500px solid #111;border-radius:3.500px;background:#fff"></div>
<div class="gbtn" style="left:28px;top:302px;width:30px;height:31px"><svg class="abs" style="left:8.500px;top:7px" width="13" height="15" viewBox="0 0 13 15"><path d="M4.300 .9Q4.500 .2 5.200 .2H7.800Q8.500 .2 8.700 .9L9 1.600H12.300Q12.900 1.600 12.900 2.200V3H.1V2.200Q.1 1.600 .7 1.600H4Z" fill="#fff"/><path d="M1 4.200H12L11.300 13.600Q11.200 14.800 10 14.800H3Q1.800 14.800 1.700 13.600Z" fill="#fff"/></svg></div>
<div class="gbtn" style="left:63px;top:302px;width:33px;height:31px"><svg class="abs" style="left:9px;top:7.500px" width="16" height="15" viewBox="0 0 16 15"><path d="M10.500 2.600H2.600Q1 2.600 1 4.200V12.400Q1 14 2.600 14H10.800Q12.400 14 12.400 12.400V8.500" fill="none" stroke="#fff" stroke-width="1.700" stroke-linecap="round"/><path d="M5 11L5.700 7.400L11.600 1.500L14.500 4.400L8.600 10.300ZM12.400 .8L13.200 0Q13.800 -.5 14.400 0L16 1.600Q16.500 2.200 16 2.800L15.200 3.600Z" fill="#fff"/></svg></div>
<div class="t ui" style="left:155.2px;top:310px;font-size:16px;letter-spacing:.26px">Set17.pdf <span style="font-family:'DejaVu Sans',sans-serif;font-size:15.500px;letter-spacing:0;line-height:10px">⇨</span> 79</div>
<div class="t ui" style="left:450.5px;top:310px;font-size:16px;letter-spacing:.54px">Default</div>
<div class="t ui" style="left:620.0px;top:310px;font-size:16px;letter-spacing:.54px">Default</div>
<div class="t ui" style="left:828.5px;top:310px;font-size:16px;letter-spacing:.54px">Default</div>
<div class="t ui" style="left:1115.0px;top:310px;font-size:16px;letter-spacing:.54px">Default</div>
<div class="t ui" style="left:1361.8px;top:310px;font-size:16px;letter-spacing:.22px">Text Area</div>
<div class="t ui" style="left:1750.0px;top:310px;font-size:16px;letter-spacing:.07px">1.000</div>
<div class="abs" style="left:1883px;top:0;width:15px;height:328px;background:#f1f1f1"></div>
<div class="abs" style="left:1885px;top:15px;width:11px;height:194px;background:#c1c1c1"></div>
<svg class="abs" style="left:1887px;top:5px" width="8" height="5" viewBox="0 0 8 5"><path d="M0 5L4 0L8 5Z" fill="#a3a3a3"/></svg>
<svg class="abs" style="left:1887px;top:321px" width="8" height="5" viewBox="0 0 8 5"><path d="M0 0L4 5L8 0Z" fill="#505050"/></svg>
</div>
<!-- right panel -->
<div class="abs" style="left:2110px;top:0;width:423px;height:929px;background:#f8f9fa">
  <div class="h4" style="left:0;width:423px;top:.500px;letter-spacing:.34px">Tools</div>
  <div class="hr" style="left:0;width:423px;top:25px"></div>
  <div class="gbtn" style="left:12px;top:50px;width:35px;height:31px"><svg class="abs" style="left:8px;top:8px" width="19" height="15" viewBox="0 0 19 15"><circle cx="9.500" cy="9" r="2.600" fill="none" stroke="#fff" stroke-width="1.500"/><circle cx="6.500" cy="2.500" r="1.300" fill="none" stroke="#fff" stroke-width="1"/><circle cx="16" cy="4" r="1.600" fill="#fff"/><circle cx="2" cy="9" r="1.600" fill="#fff"/><circle cx="15.800" cy="12.800" r="1.500" fill="none" stroke="#fff" stroke-width="1"/><path d="M7.200 3.800L8.500 6.600M11.800 7.600L14 5.300M4 9H6.500M11.700 10.600L14.500 12.200" stroke="#fff" stroke-width="1" fill="none"/></svg></div>
  <div class="gbtn" style="left:51px;top:50px;width:32px;height:31px"><svg class="abs" style="left:8.500px;top:8.500px" width="15" height="15" viewBox="0 0 15 15"><circle cx="6" cy="6" r="4.900" fill="none" stroke="#fff" stroke-width="1.900"/><path d="M9.700 9.700L13.800 13.800" stroke="#fff" stroke-width="2.300" stroke-linecap="round"/><path d="M3.500 6H8.500M6 3.500V8.500" stroke="#fff" stroke-width="1.500"/></svg></div>
  <div class="gbtn" style="left:88px;top:50px;width:32px;height:31px"><svg class="abs" style="left:8.500px;top:8.500px" width="15" height="15" viewBox="0 0 15 15"><circle cx="6" cy="6" r="4.900" fill="none" stroke="#fff" stroke-width="1.900"/><path d="M9.700 9.700L13.800 13.800" stroke="#fff" stroke-width="2.300" stroke-linecap="round"/><path d="M3.500 6H8.500" stroke="#fff" stroke-width="1.500"/></svg></div>
  <div class="gbtn" style="left:124px;top:50px;width:30px;height:31px"><svg class="abs" style="left:8.500px;top:8px" width="13" height="15" viewBox="0 0 13 15"><path d="M4.300 .9Q4.500 .2 5.200 .2H7.800Q8.500 .2 8.700 .9L9 1.600H12.300Q12.900 1.600 12.900 2.200V3H.1V2.200Q.1 1.600 .7 1.600H4Z" fill="#fff"/><path d="M1 4.200H12L11.300 13.600Q11.200 14.800 10 14.800H3Q1.800 14.800 1.700 13.600Z" fill="#fff"/></svg></div>
  <div class="h4" style="left:0;width:423px;top:88px;letter-spacing:.74px">Quick Items</div>
  <div class="hr" style="left:0;width:423px;top:114px"></div>
  <div class="abs" style="left:10px;top:141px;width:402px;height:38px;border:1px solid #6c757d;border-radius:6px;background:#f8f9fa;overflow:hidden">
    <div class="abs" style="left:131.500px;top:0;width:236px;height:36px;background:#dfdfdf"></div>
    <div class="abs" style="left:65.500px;top:0;width:1px;height:36px;background:#6c757d"></div>
    <div class="abs" style="left:131.500px;top:0;width:1px;height:36px;background:#6c757d"></div>
    <div class="abs" style="left:366.500px;top:0;width:1px;height:36px;background:#6c757d"></div>
    <svg class="abs" style="left:25px;top:11px" width="15" height="15" viewBox="0 0 15 15"><rect x="0" y="0" width="15" height="15" rx="2" fill="#6c757d"/><path d="M3 7.500H12M7.500 3V12" stroke="#f8f9fa" stroke-width="2.300"/></svg>
    <svg class="abs" style="left:90px;top:9.500px" width="19" height="18" viewBox="0 0 16 15"><path d="M10.500 2.600H2.600Q1 2.600 1 4.200V12.400Q1 14 2.600 14H10.800Q12.400 14 12.400 12.400V8.500" fill="none" stroke="#6c757d" stroke-width="1.600" stroke-linecap="round"/><path d="M5.600 10.400L6.200 7.700L12 1.900L14.100 4L8.300 9.800ZM12.700 1.200L13.400.5Q13.900 0 14.400.5L15.500 1.600Q16 2.100 15.500 2.600L14.800 3.300Z" fill="#6c757d"/></svg>
    <div class="t ui" style="left:137px;top:10px;font-size:16px;color:#111;letter-spacing:.43px">Select shortcut group</div>
    <svg class="abs" style="left:352px;top:14px" width="11" height="8" viewBox="0 0 11 8"><path d="M1.500 1.500L5.500 5.500L9.500 1.500" stroke="#111" stroke-width="1.900" fill="none"/></svg>
    <svg class="abs" style="left:379px;top:9.500px" width="15" height="17" viewBox="0 0 13 15"><path d="M4.300 .9Q4.500 .2 5.200 .2H7.800Q8.500 .2 8.700 .9L9 1.600H12.300Q12.900 1.600 12.900 2.200V3H.1V2.200Q.1 1.600 .7 1.600H4Z" fill="#6c757d"/><path d="M1 4.200H12L11.300 13.600Q11.200 14.800 10 14.800H3Q1.800 14.800 1.700 13.600Z" fill="#6c757d"/></svg>
  </div>
  <div class="h4" style="left:0;width:423px;top:204px;letter-spacing:1.200px">Item Attributes</div>
  <div class="hr" style="left:0;width:423px;top:230px"></div>
</div>
<!-- right panel lower (below canvas bottom, right of table) -->
<div class="abs" style="left:2110px;top:929px;width:423px;height:328px;background:#f8f9fa"></div>
</div><!-- main -->
</div><!-- win -->
</body>
</html>
